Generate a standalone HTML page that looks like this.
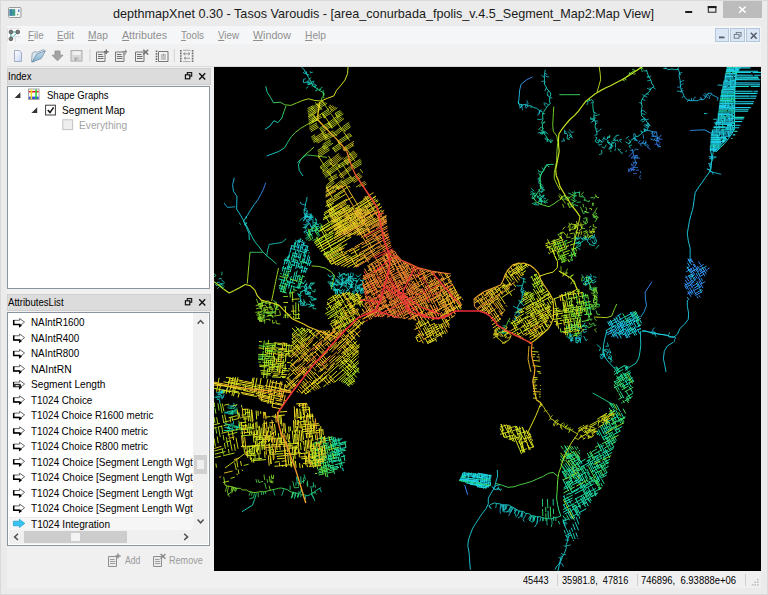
<!DOCTYPE html>
<html><head><meta charset="utf-8"><title>depthmapXnet</title>
<style>
html,body{margin:0;padding:0;}
body{width:768px;height:595px;overflow:hidden;background:#ebebeb;font-family:"Liberation Sans",sans-serif;position:relative;}
.abs{position:absolute;}
.t{position:absolute;white-space:pre;line-height:16px;height:16px;transform-origin:0 50%;}
.mn::first-letter{text-decoration:underline;}
#frame{position:absolute;left:0;top:0;width:766px;height:593px;border:1px solid #d9d9d9;}
#menubar{position:absolute;left:7px;top:26px;width:754px;height:18px;background:#f5f6f7;}
#toolbar{position:absolute;left:7px;top:44px;width:754px;height:22px;background:#f1f1f1;border-bottom:1px solid #dadada;}
#client{position:absolute;left:7px;top:67px;width:754px;height:521px;background:#f0f0f0;}
#map{position:absolute;left:214px;top:67px;width:547px;height:504px;background:#000;overflow:hidden;}
.docktitle{position:absolute;left:7px;width:202px;height:15px;background:#dcdcdc;border:1px solid #cfcfcf;}
.box{position:absolute;background:#fff;border:1px solid #8c93a0;}
.row{position:absolute;left:0;width:184px;height:16px;}
.rt{position:absolute;left:22px;top:0;line-height:16px;font-size:10.2px;white-space:pre;transform-origin:0 50%;color:#000;}
#status{position:absolute;left:7px;top:571px;width:754px;height:17px;background:#f0f0f0;}
.sep{position:absolute;top:574px;width:1px;height:12px;background:#d0d0d0;}
.mdib{position:absolute;top:28px;height:14px;background:#dbe7f4;border:1px solid #b4c6dc;box-sizing:border-box;}
</style></head><body>
<div id="frame"></div>
<!-- title bar -->
<svg class="abs" style="left:8px;top:7px" width="14" height="12" viewBox="0 0 14 12"><rect x="0.5" y="0.5" width="12.5" height="10" rx="1" fill="#f4f4f4" stroke="#9a9a9a"/><rect x="1.6" y="2.2" width="5.6" height="6.6" fill="#3f9a8c"/><rect x="1.6" y="2.2" width="2.2" height="6.6" fill="#3c7fb0"/><rect x="10.2" y="2.5" width="1.2" height="2.5" fill="#2f6fd0"/><rect x="9" y="7" width="1.2" height="1.2" fill="#5aa05a"/></svg>
<div class="abs" style="left:723px;top:1px;width:39px;height:17px;background:#bcbcbc"></div>
<svg class="abs" style="left:680px;top:0" width="88" height="22" viewBox="0 0 88 22">
<rect x="5.2" y="11" width="7" height="2" fill="#1a1a1a"/>
<rect x="28.3" y="6.6" width="7.6" height="5.6" fill="none" stroke="#1a1a1a" stroke-width="1"/><rect x="27.8" y="6.1" width="8.6" height="2" fill="#1a1a1a"/>
<path d="M59.2 6.8 L65.6 12.6 M65.6 6.8 L59.2 12.6" stroke="#fff" stroke-width="1.5" fill="none"/>
</svg>
<!-- menubar -->
<div id="menubar"></div>
<svg class="abs" style="left:7px;top:26px" width="16" height="18" viewBox="0 0 16 18"><path d="M0 2.3 H13.6 V10.4 H8 V16 H0 Z" fill="#fdfdfd"/><path d="M0.4 16 V2.7 H13.6" stroke="#d4d4d4" fill="none" stroke-width="0.8"/><path d="M8.2 16 V10.6 H13.6" stroke="#cfcfcf" fill="none" stroke-width="0.8"/><path d="M3.9 6 L10.8 6 L3.9 12.9 Z" stroke="#2aa89a" stroke-width="0.9" fill="none"/><circle cx="3.9" cy="6" r="1.9" fill="#7a7a7a" stroke="#4a4a4a" stroke-width="0.7"/><circle cx="10.8" cy="6" r="1.9" fill="#7a7a7a" stroke="#4a4a4a" stroke-width="0.7"/><circle cx="3.9" cy="12.9" r="1.9" fill="#7a7a7a" stroke="#4a4a4a" stroke-width="0.7"/></svg>
<div class="mdib" style="left:715px;width:14px"></div><div class="mdib" style="left:730px;width:15px"></div><div class="mdib" style="left:746px;width:14px"></div>
<svg class="abs" style="left:715px;top:28px" width="46" height="14" viewBox="0 0 46 14">
<rect x="4" y="8.5" width="5.5" height="1.8" fill="#55606e"/>
<rect x="21.2" y="4.4" width="4.8" height="3.8" fill="none" stroke="#6a7480" stroke-width="0.9"/><rect x="19.2" y="6.4" width="4.8" height="3.8" fill="#dbe7f4" stroke="#6a7480" stroke-width="0.9"/>
<path d="M35.8 4.8 L41.6 10.6 M41.6 4.8 L35.8 10.6" stroke="#55606e" stroke-width="1.5" fill="none"/>
</svg>
<!-- toolbar -->
<div id="toolbar"></div>
<svg class="abs" style="left:7px;top:44px" width="200" height="23" viewBox="0 0 200 23">
<defs><linearGradient id="gdoc" x1="0" y1="0" x2="1" y2="1"><stop offset="0" stop-color="#fff"/><stop offset="1" stop-color="#c8d6f4"/></linearGradient>
<linearGradient id="gfold" x1="0" y1="0" x2="0" y2="1"><stop offset="0" stop-color="#c9dcec"/><stop offset="1" stop-color="#7fb0cf"/></linearGradient></defs>
<!-- new -->
<path d="M7.5 6.5 H12.5 L14.5 8.5 V17.5 H7.5 Z" fill="url(#gdoc)" stroke="#9aa6bd" stroke-width="0.9"/>
<!-- open -->
<path d="M24.5 17.8 L25.2 9.2 L28 7.6 L30.5 8.3 L36.8 5.6 L37.6 7.2 L27 17.6 Z" fill="#dfe9f2" stroke="#7f97aa" stroke-width="0.8"/>
<path d="M25 18 L29.5 10.2 L38.4 6.9 L34.2 14.6 Z" fill="url(#gfold)" stroke="#6d8fa8" stroke-width="0.8"/>
<!-- down arrow -->
<path d="M48 7 H53 V11.2 H56 L50.5 16.8 L45 11.2 H48 Z" fill="#a3a3a3" stroke="#8e8e8e" stroke-width="0.8"/>
<!-- save -->
<rect x="64" y="6.5" width="11" height="10.6" fill="#dadada" stroke="#a8a8a8" stroke-width="0.9"/><rect x="65.5" y="7.3" width="8" height="3.6" fill="#f2f2f2"/><rect x="67" y="13" width="5" height="4" fill="#c4c4c4"/><rect x="68" y="14" width="1.2" height="2.4" fill="#9a9a9a"/>
<rect x="82.5" y="5" width="1" height="13" fill="#d4d4d4"/>
<!-- doc icons -->
<g stroke="#777" stroke-width="1" fill="none">
<path d="M89.5 8 H98 V17.5 H89.5 Z" fill="#ececec"/><path d="M91 10.5 H95.5 M91 12.5 H96.5 M91 14.5 H96.5" stroke="#707070" stroke-width="1.2"/><path d="M99.3 5.5 V10 M97 7.8 H101.6" stroke="#6e6e6e" stroke-width="1.4"/>
<path d="M108.5 8 H117 V17.5 H108.5 Z" fill="#ececec"/><path d="M110 10.5 H114.5 M110 12.5 H115.5 M110 14.5 H115.5" stroke="#707070" stroke-width="1.2"/><path d="M115.5 7.5 H119.5 M118 5.8 L120 7.5 L118 9.2 M116 10 H119" stroke="#8a8a8a" stroke-width="1"/>
<path d="M128.5 8 H137 V17.5 H128.5 Z" fill="#ececec"/><path d="M130 10.5 H134.5 M130 12.5 H135.5 M130 14.5 H135.5" stroke="#707070" stroke-width="1.2"/><path d="M136.3 5.8 L141.2 10.6 M141.2 5.8 L136.3 10.6" stroke="#6e6e6e" stroke-width="1.4"/>
<path d="M151.5 7.5 H161 V17.5 H151.5 Z" fill="#f4f4f4"/><rect x="153.6" y="10" width="5.4" height="5.6" fill="#dedede" stroke="none"/><path d="M149.5 6.5 V18" stroke="#666" stroke-dasharray="1.6 1" stroke-width="1.6"/><path d="M154 11 H159 M154 13 H159 M154 15 H159 M156.5 9.4 V12" stroke="#9a9a9a" stroke-width="0.8"/>
<path d="M173.8 6 V18 M185.6 6 V18" stroke="#666" stroke-dasharray="1.6 1" stroke-width="1.6"/><path d="M176 6.3 H183.5 M176 17.6 H183.5" stroke="#999" stroke-width="0.8"/>
<path d="M176.5 9.8 H183 M178.2 8.4 L176.5 9.8 L178.2 11.2 M181.4 8.4 L183 9.8 L181.4 11.2 M177 14.2 H183 M178.8 12.8 L177 14.2 L178.8 15.6" stroke="#8a8a8a" stroke-width="0.9"/>
</g>
<rect x="166.8" y="5" width="1" height="13" fill="#d4d4d4"/>
</svg>
<!-- client -->
<div id="client"></div>
<div class="docktitle" style="top:68px"></div>
<div class="docktitle" style="top:294px"></div>
<svg class="abs" style="left:180px;top:68px" width="30" height="17" viewBox="0 0 30 17"><g id="dockbtn"><rect x="7.3" y="4.6" width="4.4" height="3.6" fill="none" stroke="#111" stroke-width="1.1"/><rect x="5.4" y="6.8" width="4.4" height="4" fill="#dcdcdc" stroke="#111" stroke-width="1.2"/><path d="M19.2 5.2 L25.2 11.4 M25.2 5.2 L19.2 11.4" stroke="#111" stroke-width="1.4" fill="none"/></g></svg>
<svg class="abs" style="left:180px;top:294px" width="30" height="17" viewBox="0 0 30 17"><use href="#dockbtn"/></svg>
<div class="box" style="left:7px;top:86px;width:201px;height:201px"></div>
<!-- tree icons -->
<svg class="abs" style="left:8px;top:87px" width="130" height="46" viewBox="0 0 130 46">
<path d="M12.4 5.2 V11 H6.6 Z" fill="#333"/><path d="M29.2 20.3 V26.1 H23.4 Z" fill="#333"/>
<rect x="20.5" y="2" width="10.6" height="10.4" fill="#fff" stroke="#9a9a9a" stroke-width="0.9"/>
<rect x="21" y="9.6" width="9.6" height="2.4" fill="#3a4adf"/><rect x="21" y="3.9" width="9.6" height="1.6" fill="#e82020"/><rect x="22.6" y="2.4" width="1.5" height="9.6" fill="#e8e020"/><rect x="27.3" y="2.4" width="1.5" height="9.6" fill="#20d030"/>
<rect x="37.6" y="18.2" width="9.8" height="9.8" fill="#fff" stroke="#3c3c3c" stroke-width="1"/>
<path d="M39.8 23 L42 25.6 L45.6 20.4" stroke="#111" stroke-width="1.5" fill="none"/>
<rect x="54.8" y="32.8" width="9.8" height="9.8" fill="#efefef" stroke="#c4c4c4" stroke-width="1"/>
</svg>
<div class="box" id="listbox" style="left:7px;top:312px;width:201px;height:232px"></div>
<div class="abs" id="listview" style="left:9px;top:313px;width:184px;height:217px;overflow:hidden;background:#fff">
<div class="abs" style="left:0;top:203.5px;width:184px;height:14px;background:#f6f6f6;border-top:1px solid #ececec"></div>
<svg class="abs" style="left:0;top:0" width="24" height="217" viewBox="0 0 24 217">
<defs><g id="arw"><path d="M4.6 6.8 H10.6 V5 L15.6 8.6 L10.6 12.6 V11 H4.6 Z" fill="#fff" stroke="#555" stroke-width="0.9"/><path d="M4.7 6.6 V11.1 H10.7 V12.8 L12.4 11.6" fill="none" stroke="#000" stroke-width="1.5"/></g></defs>
<use href="#arw" y="0.5"/><use href="#arw" y="15.97"/><use href="#arw" y="31.44"/><use href="#arw" y="46.9"/>
<g transform="translate(0,62.4)"><use href="#arw"/><rect x="5.2" y="7.1" width="5.6" height="1.5" fill="#cfcfcf"/><path d="M4.4 8.6 H11.6 L12.6 11.4 L10.8 12.9 V11.6 H4.4 Z" fill="#2e2e2e"/><rect x="6.6" y="9.7" width="3.2" height="1.1" fill="#e6e6e6"/></g>
<use href="#arw" y="77.85"/><use href="#arw" y="93.3"/><use href="#arw" y="108.8"/><use href="#arw" y="124.3"/><use href="#arw" y="139.7"/><use href="#arw" y="155.2"/><use href="#arw" y="170.7"/><use href="#arw" y="186.1"/>
<path transform="translate(0,201.6)" d="M4.4 6.6 H10.4 V4.6 L15.8 8.8 L10.4 13 V11.2 H4.4 Z" fill="#38c2f0" stroke="#1e9ed0" stroke-width="0.7"/>
</svg>
<div class="row" style="top:2.4px"><span class="rt" style="transform:scaleX(0.9640)">NAIntR1600</span></div>
<div class="row" style="top:17.9px"><span class="rt" style="transform:scaleX(0.9670)">NAIntR400</span></div>
<div class="row" style="top:33.3px"><span class="rt" style="transform:scaleX(0.9670)">NAIntR800</span></div>
<div class="row" style="top:48.8px"><span class="rt" style="transform:scaleX(1.0099)">NAIntRN</span></div>
<div class="row" style="top:64.3px"><span class="rt" style="transform:scaleX(0.9951)">Segment Length</span></div>
<div class="row" style="top:79.8px"><span class="rt" style="transform:scaleX(0.9663)">T1024 Choice</span></div>
<div class="row" style="top:95.2px"><span class="rt" style="transform:scaleX(0.9642)">T1024 Choice R1600 metric</span></div>
<div class="row" style="top:110.7px"><span class="rt" style="transform:scaleX(0.9654)">T1024 Choice R400 metric</span></div>
<div class="row" style="top:126.2px"><span class="rt" style="transform:scaleX(0.9654)">T1024 Choice R800 metric</span></div>
<div class="row" style="top:141.6px"><span class="rt" style="transform:scaleX(0.9817)">T1024 Choice [Segment Length Wgt]</span></div>
<div class="row" style="top:157.1px"><span class="rt" style="transform:scaleX(0.9817)">T1024 Choice [Segment Length Wgt] R1600 metric</span></div>
<div class="row" style="top:172.6px"><span class="rt" style="transform:scaleX(0.9817)">T1024 Choice [Segment Length Wgt] R400 metric</span></div>
<div class="row" style="top:188.0px"><span class="rt" style="transform:scaleX(0.9817)">T1024 Choice [Segment Length Wgt] R800 metric</span></div>
<div class="row" style="top:203.5px"><span class="rt" style="transform:scaleX(0.9892)">T1024 Integration</span></div>
</div>
<!-- vertical scrollbar -->
<div class="abs" style="left:193px;top:313px;width:15px;height:217px;background:#f0f0f0"></div>
<div class="abs" style="left:194px;top:455px;width:13px;height:19px;background:#d0d0d0"></div>
<div class="abs" style="left:197px;top:460px;width:7px;height:9px;background:#efefef"></div>
<svg class="abs" style="left:193px;top:313px" width="15" height="217" viewBox="0 0 15 217"><path d="M4.6 10.8 L7.6 7.6 L10.6 10.8 M4.6 206.6 L7.6 209.8 L10.6 206.6" stroke="#505050" stroke-width="1.5" fill="none"/></svg>
<!-- horizontal scrollbar -->
<div class="abs" style="left:9px;top:530px;width:199px;height:14px;background:#f0f0f0"></div>
<div class="abs" style="left:24px;top:531px;width:103px;height:12px;background:#cdcdcd"></div>
<div class="abs" style="left:71px;top:533px;width:9px;height:8px;background:#f4f4f4"></div>
<svg class="abs" style="left:9px;top:530px" width="199" height="14" viewBox="0 0 199 14"><path d="M9 3.8 L5.6 6.9 L9 10 M175.2 3.8 L178.6 6.9 L175.2 10" stroke="#505050" stroke-width="1.5" fill="none"/></svg>
<!-- add/remove icons -->
<svg class="abs" style="left:106px;top:552px" width="64" height="18" viewBox="0 0 64 18"><g stroke="#8e8e8e" fill="none" stroke-width="1">
<path d="M2.5 4.5 H10.5 V14.5 H2.5 Z" fill="#ececec"/><path d="M4 7.5 H8.5 M4 9.5 H9.3 M4 11.5 H9.3" stroke="#9c9c9c"/><path d="M12 1.6 V6.4 M9.6 4 H14.6" stroke="#8a8a8a" stroke-width="1.4"/>
<path d="M47.5 4.5 H55.5 V14.5 H47.5 Z" fill="#ececec"/><path d="M49 7.5 H53.5 M49 9.5 H54.3 M49 11.5 H54.3" stroke="#9c9c9c"/><path d="M54.6 2 L59.4 6.8 M59.4 2 L54.6 6.8" stroke="#8a8a8a" stroke-width="1.4"/>
</g></svg>
<!-- map -->
<div id="map"><svg width="547" height="504" viewBox="214 67 547 504" fill="none" stroke-linecap="butt" stroke-linejoin="round" style="position:absolute;left:0;top:0">
<path stroke="#416bf5" stroke-width="0.75" d="M657.5 144.2l-3.3 0M632.8 168.5l1.7 1.5"/>
<path stroke="#3f71f5" stroke-width="0.75" d="M628.5 168.3l1.2 2.3l-1.4 1.4M634.8 167.5l-4 0.5l0.7 2.6M633.4 173.5l3.5 0.1"/>
<path stroke="#3d77f5" stroke-width="0.75" d="M657.7 145.8l2.4 0.5M657.1 140.9l3.3 1.6M632.4 150.1l-2.3 0.7M634 155.2l-2.9 2.6M633.1 152.5l-2.5 1.8l-1.6 2.5"/>
<path stroke="#3b7df5" stroke-width="0.75" d="M656.8 138.3l3.2 0.6l2.4 0.6M657.1 140.9l1.9 -0.6l0.5 -2.1M636.5 162.9l-2.6 -0.1l-1.2 2.2M632.8 169.1l2.5 0.6M630.9 168.8l3.4 2.1"/>
<path stroke="#3883f5" stroke-width="0.9" d="M263.5 189l2.2 -6.2M652 281.6l-3.5 5.4"/>
<path stroke="#3883f5" stroke-width="1.0" d="M464.8 485l2.8 9.8M698.5 261.5l2.1 3.4M694 263.9l5 8M690 258.7l1.7 3.1M695.3 275.6l1.9 3.1M698.9 295.3l1.3 2.1M689.2 282.1l3.3 6.1M693.1 289.2l3 5.5M692.6 291.2l-5.3 2.9M695.7 284.4l-4.2 2.3M709.5 268l-2.3 1.4M691.2 259.1l-3.6 2.1"/>
<path stroke="#3883f5" stroke-width="0.85" d="M656.7 142.8l1 3.2M634.8 166.3l-1.7 2.2l-2.3 3"/>
<path stroke="#3883f5" stroke-width="0.75" d="M655.5 131.9l-1.7 2.6M657.6 145.5l2.6 -1.9M634.3 166.3l-2.6 -0.8l-0.2 -2M634.3 156l1.7 -0.7l1.9 1.2M634.9 157.9l-3.9 0.1M639.1 170l-3.1 0.3"/>
<path stroke="#368bf4" stroke-width="1.0" d="M464.8 485M700.4 268.5l4.6 7.7M691 259l2.4 3.9M692.7 267.1l2.6 4.7M690.6 268l4.2 6.8M698.5 280.7l4.5 7.4M689.4 268.9l4.3 7.2M694.3 277.1l1.6 2.7M690 280.9l2.4 3.8M685.7 275.7l3.1 5.6M685.2 279.7l3.4 5.9M684.7 283.1l4.1 6.6M687.6 290.9l3.4 5.9M701.9 291.8l-6.5 3.7M705.3 281.5l-5.4 3.2M689.6 282.6l-4.5 2.6M705.1 270.6l-5.8 3.5M692.3 268.2l-6.1 3.6M689.1 266.9l-2.4 1.5"/>
<path stroke="#368bf4" stroke-width="0.9" d="M648.5 287l-3.3 5.1M690 130.5l7.4 -0.4M526.6 79.8l6 -2.9"/>
<path stroke="#368bf4" stroke-width="0.85" d="M657 135.7l0.2 4l-0.5 3.1M634.3 158l1.3 3.5l1.1 1.6l-1.9 3.2"/>
<path stroke="#368bf4" stroke-width="0.75" d="M656.5 136.1l-2.9 0.1l-1.8 -1.5M640.2 171l0.7 2.4M635 167.6l3.2 0.1M640.5 175.2l-1 2.5l1.7 1.6M631.2 168.6l-3 1.4l1.1 1.9M640.2 140.2l-1.6 2.6l1.4 1.7M647.6 146.7l2.9 3.2M649.3 145.1l-2.1 1.9l1.3 1"/>
<path stroke="#3294f3" stroke-width="0.9" d="M260.6 194.7l2.9 -5.7M645.2 292.1l0.2 6.7"/>
<path stroke="#3294f3" stroke-width="1.0" d="M704.9 268.1l2.1 3.5M697.4 266.1l4.2 7M700.8 277.8l1.7 3M698.3 277.2l3.6 6.3M696.7 281.3l3.6 6M689.4 275l2.1 3.5M692.3 279.8l1.9 3M689.6 287.3l3.6 6.3M689.3 290.4l2.7 4.4M684.6 285.6l2.2 3.7M701 286.6l-7.2 4M703.9 274.2l-4.7 2.8M703.7 264.3l-4.5 2.8"/>
<path stroke="#3294f3" stroke-width="0.85" d="M656.5 131.9l0.5 3.8M632.9 151.9l0.7 2.5l0.7 3.6"/>
<path stroke="#3294f3" stroke-width="0.75" d="M656.5 136.4l-3.4 0l-1.8 -0.2M656.7 138.1l3.4 -1.5l1.1 -1.9M634.7 157.4l3.3 0.5l2.2 0.5M636.4 162.8l-3.8 -0.9M634.6 157.1l3.4 -1.9M634.8 157.8l3.3 0.5M640.5 143.2l0.7 3.2M641.9 142.1l2.7 1.8"/>
<path stroke="#2f9df1" stroke-width="0.9" d="M258 199.5l2.6 -4.8M645.4 298.8l1.1 6.7M697.4 130.1l7.3 -0.2M521.1 84.2l5.5 -4.4"/>
<path stroke="#2f9df1" stroke-width="1.0" d="M701.6 266.5l4.7 7.6M693 263.9l1.9 3.4M687.9 258.5l3.6 6.4M696.1 273.1l1.8 3.4M701.5 289.3l0.8 1.4M688.6 275.8l4.4 7.5M697 296.3l1.1 2M701.3 289.9l-6.7 4.1M698.3 285.7l-4.7 2.7M691.5 284.2l-4.4 2.7M697.7 268l-6.9 4.2M615.1 328.8l-9.2 4.6"/>
<path stroke="#2f9df1" stroke-width="0.85" d="M653.1 131.9l3.4 0M632 149l0.9 2.9"/>
<path stroke="#2f9df1" stroke-width="0.75" d="M652.9 131.5l-2 2.4M632.9 151.7l2.9 -2.7l2.7 0.8M643.1 134.4l0.6 4.4M650.5 138.6l1.6 1.4"/>
<path stroke="#2ca6ef" stroke-width="1.0" d="M695.9 269.1l4.1 7.1M687.4 262.8l2.5 4M613.9 330.3l4.3 8.2"/>
<path stroke="#2ca6ef" stroke-width="0.9" d="M646.5 305.5l-2.3 6.1M704.7 129.9l6.6 3.5"/>
<path stroke="#2ca6ef" stroke-width="0.85" d="M650.2 130.8l2.9 1.1"/>
<path stroke="#2ca6ef" stroke-width="0.75" d="M652.6 131.5l-0.3 2.8l1.7 1.2M661 146.4l-3.4 0.6M655.5 137.8l-1.8 2.7l-1.9 -2.1M645.9 140.6l-1 4.8l3.1 -0.6M706.1 96.5l2.3 1.4"/>
<path stroke="#29afee" stroke-width="0.9" d="M254.1 204.7l3.9 -5.2M644.2 311.6l-3.5 5.4M519.7 89.9l1.4 -5.7"/>
<path stroke="#29afee" stroke-width="1.0" d="M686.6 277.1l-1.2 0.6"/>
<path stroke="#29afee" stroke-width="0.85" d="M646.4 130.5l3.8 0.3"/>
<path stroke="#29afee" stroke-width="0.75" d="M643.9 140.3l-1.5 3.4l-1.5 -0.5M646.9 142.6l-3.6 1.3M637 139.6l-2.5 0.8l-0.7 -2.3M658 137l-1.5 3.8l-1.8 -0.6M701.7 99.7l-1.5 -2.5M702.6 99.7l-1.8 -2.2M709 92.7l-1.8 1.7l-2.9 -0.7M680.4 87.2l-3.2 -0.2M692.9 100.5l1.6 -3.1l1.3 -0.3"/>
<path stroke="#25b8ec" stroke-width="0.9" d="M232.6 184.7l1.7 -7"/>
<path stroke="#25b8ec" stroke-width="0.8" d="M227.3 207.4l-3.3 -4.4"/>
<path stroke="#25b8ec" stroke-width="1.0" d="M687.3 297.2l1.6 2.7M706.6 266.2l-6.3 3.4M691.4 274.4l-3.8 2.1M619.6 321.2l4.5 9M615.8 316.6l3.2 6.1M618.5 326.2l4.7 8.3M610.3 320l3.7 7.6M615.5 334.2l-4.2 2.3M625.2 323.8l-8 4M623 322.9l-7 3.6M623.7 317.5l-4.9 2.7"/>
<path stroke="#25b8ec" stroke-width="0.75" d="M651.7 332.6l1.5 -3.1l1.4 -2M714.4 146.5l2.2 0.8M712.8 157.1l-3.4 1.5M710.2 170.4l-3.3 -1.4M712.9 156.3l-2.6 0.3l-1.8 -0.3M711.7 94.2l-2.3 2.4l0.4 2.3M679.2 74.4l1.9 0.3M680.2 85.5l2.1 -1.3l1.3 -0.4M705.7 97.2l-2.9 -2.7M718 97.8l-0.6 2.9M682 92l-1.7 -0.1M691.4 100.7l0.2 -2.7M681.7 91l1.6 -0.4"/>
<path stroke="#25b8ec" stroke-width="0.85" d="M711 93l1.8 2.4l2.6 1l3 1.6"/>
<path stroke="#22c1ea" stroke-width="0.9" d="M233.5 191.3l-0.9 -6.6M250.5 210.2l3.6 -5.5M690.2 255.4l-0.2 7.6M736.5 71.5l0.2 2.4M729.5 67l0.2 3.7M725.3 74l0.7 7.9M729.3 115.9l0.6 5.9M728.1 130.8l0.6 6M718.8 123.4l0.4 6.8M716.5 126.6l0.5 5.3M713.8 122.9l1.8 0M519.1 97.1l0.6 -7.2"/>
<path stroke="#22c1ea" stroke-width="0.8" d="M235.2 206.8l-7.9 0.6"/>
<path stroke="#22c1ea" stroke-width="0.75" d="M304.9 217.4l-1.8 4.1M307.8 221.2l4.4 -1.8M489.1 505.8l1.2 2.4M500.7 504.2l-0.7 6l0.5 3.4M559.2 562.7l3.3 1.5l0.9 2.5M562.9 556.7l-2.4 -0.8M654.5 333.1l-0.9 -2.3M712.8 156.9l-2.9 0.2M711.3 164.7l-3.4 -1.6M712.8 156.7l3.8 0.3M545 73.2l2.4 1.4M522.9 104.6l-1.9 2.7l-1.3 0.3M539.9 110.6l-0.6 3.1l-2 1.5M525.5 105.1l-0.3 2.7M518.6 103.7l-0.6 -2M521.5 104.3l0.7 3.8l0.5 2.1M635.3 137.6l0.1 1.6M646.7 129.8l-2.4 -0.7M688.9 100.9l0.3 -2.2M665.4 68.6l0.6 -2.4M707.2 94.6l1.9 1.6"/>
<path stroke="#22c1ea" stroke-width="1.0" d="M691.1 273.9l4 7.2M621.6 321.4l2.8 5.5M624.7 331.4l3.3 6.6M624.5 333.4l2.4 4.7M613.7 317.9l4.3 7.5M615 329.6l1.9 3.9M608.8 320.9l3.9 7.3M609.9 329.6l4.4 7.8M611.2 332.9l-3.8 1.9M621.3 313.7l-4.4 2.6"/>
<path stroke="#22c1ea" stroke-width="0.85" d="M697.1 100.7l3.2 -1.2l2.6 0.1l1.9 -0.9l1.6 -2.9l1.8 -2.1l2.8 -0.7"/>
<path stroke="#1fcae9" stroke-width="0.75" d="M315.3 84.2l-0.2 4M310.9 226.6l4.4 -1.8l1.2 -0.5M305.4 205l-4.5 -1.2l-0.5 -1.8M305.5 218.1l1.1 -1.3l-0.5 -1.3M518.7 311.9l-2.3 0.9l-1.7 2.4M503.3 504.7l-0.8 2.4M512.7 507.4l-1.9 4.7l-2.2 3.8M507.2 505.5l-1.5 4.2M503.3 504.7l-0.3 6.1M567.7 540.5l-2.7 -0.7M675.9 338l-1.4 1.3l-0.3 3M712.4 158.7l3.5 -1.5M710.2 170.7l2.3 1.4l0.7 2.6M544.7 75.5l2.8 1.4l1.7 0M528.2 105.6l-2.1 2.9M539.5 110.4l-0.7 3.9M525.7 105.1l1.9 -2.4l-0.8 -2.3M540.8 111.1l0.2 -1.7M526.9 105.4l1.8 -2M634.6 138l1.1 2.1l2.5 0.9M646.1 119.9l2.6 -0.9M642 110.4l2.2 0.7l2.3 2.1M648.1 125.9l-1.9 -0.8M642 99.3l3.4 1.3M634.1 138.3l-0.3 -3l0.3 -2.1M648.7 124.2l1.7 1.5M648.5 122.9l-0.7 2M677.3 69.7l1.2 -2.3M683.6 95.8l-1.6 2.2M688.4 100.6l-1.5 1.3M679.9 82.4l2.2 -1.3l2.1 -0.7M706.3 96.1l-1.8 -0.3M681.2 89.5l1.5 -1.6"/>
<path stroke="#1fcae9" stroke-width="0.9" d="M236.8 203.4l0.1 -7.1l-3.4 -5M247.1 215.7l3.4 -5.5M690.1 248.2l0.1 7.2M687.3 300l0.1 6.6M664.8 365.3l1.2 6.7M737.3 67l0.6 4.9M732.9 67l0.3 5.4M729.8 71.7l0.3 5M730.2 78.4l0.5 8.1M728.7 110l0.5 5.1M719.3 131.6l0.2 4.2M716.1 121.7l0.4 4.1"/>
<path stroke="#1fcae9" stroke-width="0.8" d="M235.2 206.8M246.2 216.2l0.5 2.2M608.9 356.3l-0.7 1.9l3.1 0.7M606.5 349.8l-2.8 0.2M603.6 356.6l-2.1 2.5l-1.6 -3.3"/>
<path stroke="#1fcae9" stroke-width="1.0" d="M488.8 481.8l-0.8 5.5M481.6 473.8l-0.9 7.6M473.8 472.9l-0.8 6.3M470.1 482.5l-0.2 1.7M464.8 471.8l-1.1 8.1M631.6 318.5l4.8 9M629 318.1l4 7M625.8 322.3l5.2 9.4M626.3 326.7l3.7 7.4M625.3 328.7l4.4 8.7M617.1 326.6l4 8M636.4 330.7l-8.7 4.3M632.4 327.7l-6.9 3.5M632 322.7l-10.3 5.1M639.7 316.6l-4.5 2.2"/>
<path stroke="#1fcae9" stroke-width="0.85" d="M682.8 92.6l0.9 2.9l2.1 3.1l2 1.5l2.6 0.6l3.5 -0.1l3.2 0.1"/>
<path stroke="#1ecfe4" stroke-width="0.75" d="M307.2 72.5l-2.8 1.3l-1.3 -1.8M305.8 78.6l-2.2 0.7l-0.1 2.4M310 80.8l-2.4 1.6M308.6 222.2l-3.3 2.9l-1.9 -0.8M306.9 219.9l4.1 -0.9l2.2 -2.3M304.6 216.9l2.1 -4l0.7 -2.7M518.4 309.4l3.5 -0.9M518.3 308.6l2.7 1.1M522.3 295.1l2.6 -2M521.5 291.9l3 -1.1M521.1 289.4l3.3 1.4M517 509.6l-2.6 3.6M522.3 511.9l-2.2 4.9l-2.1 1.2M515.1 508.6l-0.8 2.3M563.9 554.4l2 0.4M564.3 524.2l3.1 -0.6M655 333.1l1.1 3.8M651.1 332.5l1 -1.2M668.2 336.1l1.4 -3.8M712.3 159.7l-3.2 -1.7M710.8 167.3l-1.6 -1.1l0.8 -3M597 134.7l-2.6 0.6M604.5 136.6l-2.1 3.8M615.6 142.9l-0.1 4.6M603.6 138l2.7 1.7l1.6 -1.9M598.5 139.7l3.3 1.8l-1 1.3M614.6 136.8l0.7 2.5l-2.8 1.7M627.1 150.6l-1.7 1.1M642 103.7l-2.8 -1.2M644.8 131.5l-1 -2.9M645.2 118.9l-3.8 0.6M648.5 124.8l1.9 1.1M643 132.7l-2.5 -1.7M650.5 89.6l-0.6 -2.1M644.4 95.7l-2.1 -1.1M636.4 136.9l-1.7 -3.3M681.8 91.5l-2.6 -0.2l-2.3 -0.2"/>
<path stroke="#1ecfe4" stroke-width="0.9" d="M236.6 209.1l0.2 -5.7M469.5 557.8l0.3 5.9l0.6 5.9M687.3 233.6l1 7.3l1.8 7.3M687.4 306.6l1.2 6.5l-0.3 6.1l-3.5 4.8l-4.7 4.3l-2.6 5.7l-4.2 3.6M673.2 342.3l-6 3.8l-2.9 5.2l-0.9 7.4l1.4 6.6M606.8 331M734.3 92.6l0.3 4.8M731.8 103.6l0.5 9.1M727.1 93l0.4 4.2M723.6 81.8l0.1 1.3M724.7 93.8l0.5 5.1M727.5 124.7l0.5 5M718.2 112.9l0.5 8.7M712.4 129.8l0.4 5.6M717.6 85.1l5.2 0.1M518.4 103.7l0.7 -6.6"/>
<path stroke="#1ecfe4" stroke-width="0.8" d="M243.9 224.3l1.9 0.3l0.2 -2.6M310 214.6l3.8 3.6M312.8 226.5l-2.3 5.3M302.5 227.6l4.8 0.2M312.4 216.1l-5.6 0.4M307.2 230l-3.5 2l1.8 1.5M315.1 217.9l1.8 2.8M301.5 239.2l-3.8 3l-2.6 -2.3M342.3 275.7l-0.3 2.5l1.8 0.1M216.1 392.6l5.7 0.6l0.7 -3.3M576.9 325.6l-5.1 0.4l-0.6 4M578 338.1l2.4 1l0.1 3.9M580.1 337.5l-4.2 1.3l0 -1.8M581.8 336.2l-3.1 3.9M570.6 327l-2.5 1.4M573.7 338.1l-2 1.3M589.9 276.4l0.8 3.5M588.8 277.7l-1.3 2.3M499.9 484.9l-4.2 0.8l-0.2 1.4M498.5 486.8l0.1 2.3l-2.2 0.7M608.5 351.6l-2.1 3.3l1.4 0.6M604.9 355.3l-2.7 1.7M602.4 354.1l3.7 4.2M609.9 350.5l1 3.1M710 171.5l11.2 2.8"/>
<path stroke="#1ecfe4" stroke-width="1.0" d="M487.4 474.5l-0.9 7.8M485.3 474.2l-1.1 8.8M686.9 266.6l3.5 6.2M699.5 288.7l2.2 3.8M630.2 312.1l4.4 8.9M637.2 329l2.6 4.8M633.7 326.2l3 5.5M627.3 318.6l4 7.2M623.4 321l1.9 3.6M618.3 315l2.9 5.6M619.8 324.3l4 7.7M614.7 325.9l2.8 5.3M607.5 321.7l2.4 4.3M626.2 333l-3.9 2.2M623.5 332.2l-5 2.6M625.8 328.6l-9 4.9M631.3 313.5l-6.2 3.3M618 320.6l-6.9 3.7"/>
<path stroke="#1ecfe4" stroke-width="0.85" d="M676 338l-2.6 -1.4M715 143l-0.2 3.7l-1.4 2.6l-0.2 3l-0.7 4l0.2 3.1l-1.6 3.1l0.1 2.2l0 3.6l-1.2 3.2M679.6 73l-0.6 2.4l0.7 3.1l0.5 2.3l0.1 3.5l0.3 3.1l1 3.4l1.2 1.8"/>
<path stroke="#1ecfe4" stroke-width="0.95" d="M710 149l1.7 6.2l0.1 5.6l-1.1 6.1l-1.1 5l-4 5.4l-3.2 4.7l-3.4 4.7l-3.7 5.6l-0.9 5.4l-0.8 6.3l-1 5.5l-1.8 6l-1.4 5.9l-1.1 6l-1 6.2"/>
<path stroke="#1dd2de" stroke-width="0.85" d="M301.4 67M488.8 506M673.4 336.6l-3.9 0.6l-2.5 -2l-2.9 -0.5l-3.9 -0.4l-2 -0.1l-3.2 -1.5l-3.3 0.5l-3.8 -1.4l-2.2 -0.9l-3.7 0.1M663.3 68.4l2.5 0.1l3.1 1.1l3.1 -0.7l2.8 0.8l3.5 -0.5l1.3 3.8"/>
<path stroke="#1dd2de" stroke-width="0.9" d="M270 126l-5 3.4M272.3 153.9l-5.7 2.1M243.7 221l-3.2 -5.8l-3.9 -6.1M243.7 221l3.4 -5.3M302 244.6l4.1 1.1M294.5 246.4l5 1.5M290.1 248.2l5.6 1.7M497.3 470l0.3 6.2l-1.8 6l-1.5 5.7l-3.2 5.3l-2.8 4.9l0 5.7l-2.3 4.9l-3.9 5l-3 4.4l-3.6 5.6l-2.8 4.5l-2.3 6.1l-2 5.7l-0.6 5.8l1.2 6.2l0.5 5.8M560.8 558l-1.4 6.5l-1.4 6.5M673.3 337.6l-5.9 -2.1l-6.3 -1.1l-6.1 -1l-6.7 -1.7l-6.3 -0.7M640.7 331M606.8 331l-1.7 6.4l-1.5 7.2M736.1 67l0.3 3.3M733.8 84l0.5 7.6M731.2 94.7l0.5 7.6M727.7 98.9l0.9 9.7M729.9 122.6l1 9.7M710.2 146.1l0.4 4.1M704 113.6l3.2 0M518.4 103.7"/>
<path stroke="#1dd2de" stroke-width="0.75" d="M304.4 216l4.6 0.5l1.6 -1M304.8 209.6l-1.7 0.4M305.1 217.6l-1.3 3.2M304.6 213.7l3.7 2.7l2.9 2.4M304.6 212.9l4.1 1.2l2.8 0.4M304.9 208.8l2.3 0M522.2 285.2l-3.4 0.8l-2.3 -0.6M518.4 309.2l2.8 1.2M510.8 506.4l-1.9 5.3l-5.3 0.2M511.8 506.9l-2.5 5.8M537.9 516.9l-1.2 6.7M537.6 516.8l0 5.8l-3 4.4M489.2 505.8l2.3 3.3M505.8 505.2l-1.9 6.4M522.3 511.9l-0.8 2.3l-0.2 2.6M526.4 513.5l-3.4 6.2l1.4 2.1M566 546.6l-2.3 -0.9M710.2 170.4l-3.1 -1.7M546.6 107.1l-2.1 -2l-0.5 -2.7M544.5 77.6l-3.1 -2.3M550.4 97.5l-2.5 -1.6l-0.7 -1.5M519 103.8l0.9 3M596.5 132l2.6 -1.4l2.2 -1.8M594.5 120.4l-2.9 1.4l-0.8 1.1M595.1 124.3l2.4 -1.3M594.6 121l3.6 0M610.5 146.3l-1.9 2.9M620 150.9l1.5 2.4l1.5 -0.5M610.2 136.7l-2.6 0.2l-0.2 2.2M615.5 148.5l-0.6 2.6M629.1 136.2l-3.3 2.5M642.3 133.1l-0.8 -2.3M650.7 80.3l-3.5 0.6M649.5 77.3l-2.8 -0.4M648.5 122.9l-1.7 0.7M648.1 125.8l-3.1 -1.1l-1.3 1M647.4 127.7l-2.7 -1.1M679.1 73.4l3.2 -1"/>
<path stroke="#1dd2de" stroke-width="0.8" d="M316.6 222.7l-3.5 0.3l-0.3 -4M309.8 230.6l0.9 4.5M307.5 214l-3.1 3.8M353.1 272.7l0 3.5l-4 0.8M353.1 286.5l-2.9 0.6l0.4 -1.9M360 288.4l-2.7 0l1 -3M348.6 274.1l-0.4 3.8M340.8 282.8l-3.5 3.1l-2.1 -1.2M335.6 277.9l1.2 4.2M335.5 281.4l-2.7 4.4M331.7 282.4l4.6 2.2M350.6 280.5l-2.1 3.4l2 1.1M351.3 283.3l-0.1 2.4l1.7 0.1M352.9 279.9l4.5 1.4l-1.9 3.1M334.7 285.2l-2.9 1.4l-0.3 -1.5M342 282.9l-1.1 4.6M359.7 289.4l-2.5 3.6l1.1 1.5M362.3 289.8l-2 1.2l0.9 3M342.3 278.7l0.7 5.2l-3.5 0.4M351.1 272.4l-1.4 5.5M350.6 277.7l3.2 2.2l-1.8 3.3M332.7 289.1l4.4 1.2l0.2 2.8M334.5 287.2l-2 1.7M352 286.4l-3.7 3.3M360.2 287.1l-3.2 0.7l1 1.6M337.9 290.4l-0.7 3.4l2.4 1M314.8 305.2l-4.5 0.6M217.9 394l3 0.6M221.4 390l4.1 1.2l2 -3.5M218.2 396l4.9 1.9l1 -3.7M581.4 338.5l-2.4 1.6M569.7 324l3.2 0.7M585.1 322.6l-2.6 4.6M571.3 335.5l-0.7 5.8M590.2 273.7l1.4 2.6l-3.3 2.2M588 276l1.2 2.6l3.1 -0.5M595.3 278.9l-1.9 2.1l-3.3 -1.5M589 237.4l-1.8 3.9l1.9 1.7M594.7 233.9l-0.8 3.5l-1.7 0.2M591.9 235.4l3.3 2.3M492.6 486.8l2.5 2.9l2.8 -1.4M497.6 488.1l3 2.4M491.5 486.4l3.6 3.3M605.5 346.2l2.9 0.1l-1.1 -3.6M569 129.6l3 2.9l1.7 -0.7M570.4 134.1l2 4.3"/>
<path stroke="#1dd2de" stroke-width="0.95" d="M289.7 253.3l2.4 -8.3M297.5 251.1l1.7 -7.2M299.9 251.2l1.8 -7.4M302 250.2l2 -8.8"/>
<path stroke="#1dd2de" stroke-width="1.0" d="M489.8 474.8l-0.9 6.1M486.4 483.3l-0.6 5.1M484.2 483.6l-0.6 5.1M472.9 480.6l-0.6 4.4M462.6 473.2l-0.5 4.5M696.3 283l2.1 3.7M694 275l-3.1 1.6M631.4 311.9l3.7 7.1M640 328.4l0.6 1.2M632.5 327.7l4.1 7.3M618 332.2l3.3 6.2M640.8 328.5l-2.8 1.3M640.9 318.4l-7.3 3.5M634.3 319.3l-8.2 4"/>
<path stroke="#1dd5d7" stroke-width="0.85" d="M301.4 67l2.4 2.1M306.7 200.1l-0.9 2.4l-0.7 4.2l-0.4 2.7l-0.7 3.1l1.1 3.1l0 2.6l2.1 2.8l2.5 2.2l1.1 3.4l1.6 2.6l0.5 2.8M517.6 307.2l0.4 3l1.3 4.2l-2.6 1.9l-1 2.5l-1.7 3.2M488.8 506l2 -1.6l3.5 -1.4l2.3 0.5l3.6 0.4l2.5 1.2M566.3 547.6l-0.6 2.4l-1.5 3.7l-1.6 2.7l-1 2.8l-1.1 2.7l-1.6 2.1l-2.2 2.3l-1.7 3.3M539.4 110.6l-2.7 -2.3l-3.1 -0.8l-2.6 -1.7l-3.1 0l-2.8 -1.3l-2.9 0.4l-3.8 -1.2M641.4 112.8l0.3 3.1l2.9 2.2l1.4 2.4l1.5 2.3l1.4 2.8l-0.9 2.3l-1.2 2.5l-3.3 1.4l-3 2.7l-2.4 1.7l-2.5 0.6l-2.6 2.1l-2.2 1.5"/>
<path stroke="#1dd5d7" stroke-width="0.75" d="M309.3 79.2l-1.1 1.3l-1.7 2.4M310.8 82.9l-3.6 0.1M314.2 80.8l-1.5 2.7l-1.1 -1.1M305.9 70.8l0.8 3.8l2.7 0.3M306.8 81.9l-3 1l-0.6 -1.9M307.7 221l-2.2 1.3M312.7 231.5l2.9 -1.9M309.5 223.3l-2.5 3l-1.4 0.2M304.8 209.9l3.3 2.3M309 222.7l-2.4 2.3l-1.4 -0.1M520.8 301.5l-1.9 -0.7M521.7 287.2l2.2 1.7M515.5 319.6l-2 -1.8M518.6 310.5l-2 1.2l-2 1M502.1 504.5l-1.6 4.3M519.6 510.8l-2.3 5.3M504.4 504.9l-1.1 5.6M533.9 516.2l-1.4 5.6M503.1 504.7l-0.2 7M540.9 517.4l-1 4M563.8 523l1.8 -0.5l1.2 -0.6M568.4 534.2l-3.1 1.5M566.4 545.4l2.3 0.1l2 -0.7M568.4 534.2l1.6 -0.9M653 332.8l-0.3 2.1M654.8 333.1l-0.8 1.9M543.3 133.2l2 -1.4M544.2 81l-2.8 0.6M550.3 97.7l2 0.3M542.4 131.8l-2.3 0.6l-2.3 0.6M542.4 118.9l-2.9 0.6l-2.3 -0.3M543.8 133.8l1.8 -0.4M521.3 104.3l-0.6 3.2l-1.4 0.5M540.7 186.3l-1.4 -0.8M596 129.2l1.6 -0.4M594 117.9l2 0.1M592.9 101.9l-2.2 1.3M610.9 141.5l2.9 2.1M622 139.2l-2.6 0.7l2 2.8M596.8 139.9l2.7 1.9M608 143.1l2.9 2.2M617.1 139.8l1.4 2.1M611.1 145.7l0 2.8l-2.2 0.9M645.2 131.3l-0.5 -2.9M649.3 76.8l2 -0.8M644.3 95.8l3 1.4M644.7 118.2l-2.1 1.4l-2 0.9M645.3 119.1l-1.7 2.6l-1.9 0M652.9 87.3l2.7 1.7M646.9 70.9l-3.6 0"/>
<path stroke="#1dd5d7" stroke-width="0.9" d="M246.4 227.4l-2.7 -6.4M307.2 246l0.9 0.3M292.7 252.7l4.9 1.4M573.3 517.6l1.2 2.9M575.9 532.5l1.5 4.3M571.3 527.7l1.4 4.1M640.7 331l-0.2 6.5l0.3 7.1M603.6 344.6l-0.4 6.4l2.1 6.7M734.7 99.3l0.2 3.4M732.4 114.5l0.6 9.6M725.3 99.9l0.4 4.8M717.1 133.5l0.7 7.3M717.9 142.8l0.6 5.7M713.3 144l0.5 7M713.2 119.3l4 -0.1"/>
<path stroke="#1dd5d7" stroke-width="0.8" d="M308 215.4l-1.3 2l-1.4 -1.1M311.1 213.3l-0.4 4.5l-4.1 -0.1M310.4 229.5l-2.9 3.2l-1.6 -0.6M316.1 229.3l-1.1 2.7M299.3 245.1l2.9 3.5M312.2 261.3l-3.5 3l-1.4 -1.5M303 266.2l-3.1 2M304.4 249l-1.3 1.7M349.4 290.9l-0.1 3.1M346.5 283l-0.4 3.2l-2.1 -0.5M351.3 277.9l5.8 0.9M362.8 283.9l-4.2 1.4M348.5 277.1l-0.2 5.3l-2.8 1M355.8 289.4l2.4 1.7l-1.1 2M354 283.5l-2.8 1.8l-3.2 -2.4M361.3 274.2l-3.3 2.8l-2.4 -2.1M350.8 277l-0.8 3.3l3 2.5M347.8 286.6l5.7 1.4M337.8 276.6l3.1 3.2l1.4 -1.1M342.5 281.1l-1.4 3.7l-2.1 -1.6M340.8 283.2l2.9 2.7M337.9 289.4l3.2 2.1M351.6 276.4l-3.3 1.1M341.1 281.5l2.5 2.6l3.8 -1.4M308.8 290.8l-1.8 2.7l0.9 1.1M307 282.6l-2.5 5.2M300.5 302.9l5.3 2.7l1.3 -1.2M301 299.1l-0.4 6l2.9 0.5M304.9 287.6l0.5 6l3.5 1.2M307.5 284.2l-2.3 1.1l1.8 1.5M218.4 392.5l4.3 0.6l-0.7 -3.6M215.8 395.9l4.3 1.3M216.6 399.1l3.1 0.8l0.1 3.7M227.8 406l6.4 -0.2l-0.5 -3M223.7 283.6l-4.3 0.6M572.8 336.6l-1.7 5.6M571.2 334.3l-2.2 4.9M583.7 336.1l2.3 4.7l1.5 -1.6M580.1 335.3l-4.9 3.1l1 1.1M574.9 326.5l4.7 1.4l-1.1 3.3M586.8 331.4l-3 1.2l-1 -2.7M577.8 332.5l-3.8 3.8M590.1 284.8l1.1 4.9l2.1 -1M585.3 236l-0.5 2.9l2.7 0.4M576.1 237.2l3.4 1.6l1.3 -2.4M592.5 236.3l-2.9 3.7M596.5 243.1l-3.3 0.6l-1.4 -3.1M610.2 348.7l-1.9 1.8l-1.9 -1.6M605.4 349l-0.8 1.9l3.4 1.6M564.6 129.8l0.1 3.9l2.6 -0.4M563.2 138.3l1.3 2.5l-3.2 0.4"/>
<path stroke="#1dd5d7" stroke-width="0.95" d="M287.3 268.7l2.5 -8.6M293.5 247.4l1.6 -5.5M296.9 246.8l2.1 -7.4M303.6 256.3l3 -11M306 263.9l2.5 -9.2M309.3 266l1.3 -4.6"/>
<path stroke="#1dd5d7" stroke-width="1.0" d="M482.9 474l-0.8 7.7M482 482.5l-0.5 5.5M480.6 482.2l-0.7 5.3M477.8 473.3l-0.6 5.6M477.1 479.9l-0.7 6.3M475.4 473l-0.7 5.1M471.3 472.6l-0.3 2.5M463.6 480.5l-0.2 1.6M635.3 311.1l3.9 7.6M636 320.7l3.3 6.3M641.3 324.6l-4.2 2.4M635.4 328l-7.5 4.1M631.3 318.7l-7.2 3.6M734.5 128.2l-2.5 5.3l-3.5 5l-3.8 4.8l-4.4 4.4l-4.3 4.3"/>
<path stroke="#1cd8d1" stroke-width="0.85" d="M303.8 69.1l1.7 3.7l1.4 1.5M307 197l-0.3 3.1M522.1 296.9l-0.1 1.8l-1.1 2.6l-2.1 3.3l-1.2 2.6M502.7 505.1l3.2 -0.4l3.5 0.5l2.4 1.5l3.2 1.9M565.1 526.6l1.8 3.6l1.1 2.3l1 3.3l-0.9 2.6l-0.6 3.3l-1.3 2.6l0.1 3.3M545.3 69.8l-0.5 2.5l-0.5 3.4l0.2 2.8l0.1 2.9l-0.3 2.6l1.5 2.4M542.4 112l-3 -1.4M649.7 77.8l1.8 4l0.1 1.5l2.4 3l-2.9 2.3l-1.3 2.3l-2.4 2.6l-3 2.2l-1.5 2.3l-1.5 2.7l0 2.1l0.8 3.9l-0.7 1.9l-0.1 4.2"/>
<path stroke="#1cd8d1" stroke-width="0.75" d="M311.7 83l-1.6 1.1l-2.1 0.5M312.4 84.1l2.6 0M311.2 82.2l2.4 -1.2M307.7 82.2l3 1.4M308.4 86.5l-2.4 2M304.4 216.7l-3.4 2.7l-1.5 1.8M522.1 299.4l3.2 -0.1M518.8 312.7l2 -1M531.3 515.5l-1.3 4.9l2.5 2.3M543.5 517.8l-0.8 3.4M534 516.3l-0.9 3.5M496.5 503.4l-0.8 4.6M519 510.6l-0.7 3M530.7 515.3l-2.5 4.1M511 506.5l-3.9 5.7M506.1 505.2l-0.6 4.5M523 512.2l-1.2 5.6M516.1 509.1l-1.5 3.3l1.9 5M562.1 558l-3.6 -0.3M563.7 555l-2.7 -1.8M568.9 535.5l2.8 -0.4M548.2 139.4l-0.6 1.7l0.7 1.2M548.5 104.9l-3.4 -2M546.4 137.2l-1.8 1.9M543 132.7l-3.3 1.2M531 106.2l0.3 2M543.5 170.1l-1.4 -2.6M540.9 187.5l3 -0.3M594.4 119.9l-2.3 1.7M593.6 111.8l3 1.8M594.3 119.4l-3.3 -0.3l-0.7 -2M632 144.9l-3.1 1.1l1.7 2.2M595.3 136.9l1.8 1M607.6 140.4l0.5 2.1l1.8 0M609.5 143.2l4.1 2.7M618 148.3l0.7 2.2l2.1 -1.1M602 144l-2.9 1.3l-0.4 -1.5M610.1 144.3l2.2 2.2M646.5 93.6l2.5 0.9M647.9 126.6l-2.2 -2.1M650.2 89.9l-3.2 -1.8M642 111l-1.4 0.9M642 113.6l3.3 1"/>
<path stroke="#1cd8d1" stroke-width="0.9" d="M273.9 120.7l-3.9 5.3M278.7 151.5l-6.4 2.4M299.3 170.7l3.7 5.3M249.3 240l-0.3 -6.5l-2.6 -6.1M297.1 240.6l5.9 1.8M292.2 255.3l8.3 2.4M285.2 259.4l3.8 1.1M291.2 261.1l7.6 2M303.8 267.9l4.2 1.1M301 270.4l4.7 1.3M246.2 225l2.9 5.9l2.8 5.5M576.1 516.9l2.8 7.4M572.9 523.7l2.2 6.5M566 534.9l2.2 6.1M640.8 344.6l-0.7 6.3l-1.1 6.4M605.3 357.7l3.9 5l4.8 5.1"/>
<path stroke="#1cd8d1" stroke-width="0.8" d="M247.1 222.8l-2.3 2.1M239.1 222.8l1.9 1.8M315.2 223.1l3.1 1.7l1 -1.3M313.9 225.7l1.7 2.6M313 217.4l-4 0M290 265.9l-2.3 2l2.4 1.8M302.5 252l2.8 2l-1.1 3M307.2 251.2l-2.2 0.4l-0.1 -2.6M289.4 253.5l-0.3 3.4l-1.7 -0.1M305.4 242.7l-2.3 1.5l1.9 1.6M300.1 250.2l1.7 1.9M286.7 279.8l2.7 4.2l1.8 -2.2M284.4 260.6l2.7 0.1M289.8 273.7l-2.2 0.7M349.4 278.6l-4.2 2.7M345.3 273.2l-5.4 2.1M336.8 289.4l-1.8 3.9l1.4 1M337.1 289l4.6 1.6l1 -1.6M359.7 286.2l0.4 4.3l2 -0.1M342.4 274.4l-1.2 1.7M354 289.4l0.2 4.3M333.9 288.7l3.7 1.9l-0.6 3.1M352.6 279.9l-5.3 1.3M355.8 285l0 4.9M342.7 273.5l4.6 2.3M349.9 278.7l-4.7 3.6l-2.9 -2.4M343.2 284.2l-3.5 4.4M361.9 287.3l2.7 5.3l-3.4 0.4M362.3 284.7l-5.3 1.6l-1.5 -2.2M339.5 291l0.6 2.2l2.3 -1.4M346.4 278.3l2.3 1.1M345.4 277.8l-3.9 2l0.6 1.5M332.3 277.8l-0.3 2.3M355.3 290.2l1.6 1.9M304 300.8l-0.1 5.1M307.1 292.4l3.1 1.8M300.2 297l0.3 4.4l-2.4 0.5M309.9 287.3l1.4 1.7M306.5 286.5l0.3 5.1l-3 -1.2M310.5 292.5l-5 2.1M311.6 288.1l-5.9 0l0.1 2.2M309.4 285.2l1.8 4.4M306.7 289.5l-4.5 1.5M219.5 392l3.1 1.1l0.6 -3.7M217.5 394l4.5 1.7l0 3.8M214.2 397l5.5 1.3M223.9 413l3.9 0.1M224.7 412l3.5 0.7M236 427.5l5.9 -0.1l-0.1 4.7M230.6 423.8l3 0.4l-0.1 -3M221.6 278.3l-3 0.7M221.4 279.9l3.5 3.2M221.4 283.6l-2.2 0.7M571.5 338.3l-0.7 2l2.8 0.1M587.8 326.7l-2.5 0.6l0.8 1.2M575.9 339.3l0 3.4l2.3 -0.8M577.6 340.7l2.3 0.1M582.1 327l-3.3 1.6M596.3 281.1l-3.4 2.1l-0.7 -1.3M586.6 280.1l2.6 3.2M590 283.6l-4.5 0.3l0.4 -2.9M588.9 275.8l1.2 2.5M587 284.4l-1.8 1.4M578 238.6l-1.9 1.9l-2.4 -2.1M596.7 344.5l3.9 3.2l-1.2 3.4M608.3 352l2.7 0.3M603.5 352.3l0.8 1.9l-3.6 1.5M568 131.5l2.5 2.6l-1.6 1.9M564.1 131.9l2.1 0.1M532.6 191.4l-2.1 0.8M544.2 195.7l-3.5 3.6"/>
<path stroke="#1cd8d1" stroke-width="0.95" d="M299.4 242.9l1.1 -4.6M298.2 258.4l1.2 -4.8M302.3 241.4l0.4 -1.5M306.2 252.5l1.7 -6.6"/>
<path stroke="#1cd8d1" stroke-width="1.0" d="M490.6 482.7l-0.4 3.2M478.5 481.6l-0.5 5.3M474.6 478.9l-0.5 4.1M468.8 472.3l-0.9 8.1M467.8 481.2l-0.2 2.3M465.8 480.1l-0.4 2.7M462 478.7l-0.3 2.9M639.9 320l1.6 3.2M610.6 327.2l5.1 9.2M624.6 319.9l-7.7 4.5M616.2 324.8l-4.5 2.5M611 327.8l-5.3 3M734.7 103.7l-0.1 6.1l0 6.1l-0.1 6.2l0 6.1"/>
<path stroke="#1cdac9" stroke-width="0.85" d="M306.9 74.3l1.6 3.3M523.6 281.7l-0.7 2.4l-1.1 3.2l-1 3.5l1.5 2.1l-0.2 4M515 508.6l2 1.3l2.6 1.3l3.8 0.2l2.1 1.9l3.4 0.4M563 521l1.1 3l1 2.6M545.8 86.4l1.8 3.6l2.2 1.7l1.1 2.3l-1.1 3.4l-0.3 3.5l0.7 2.9M595.1 126.2l0.4 2l1.4 4.2l0.1 2.4M646.4 69.8l1 3.1l1 3.1l1.3 1.8"/>
<path stroke="#1cdac9" stroke-width="0.75" d="M309.2 79l2 -1.7M307.2 75.8l0.9 -1.4M312.9 72.1l-2.6 0.7l0 -1.6M317.7 87.7l-1.1 3.2l-1.5 -0.2M319.7 488.5l1.8 3.7M520.1 302.6l3.2 2.3l0.5 1.2M518.3 308.5l-3.2 -1.2l-2 -1.1M520.8 301.6l-2.4 -1.3M521.7 292.6l3.1 0.1M523.8 278.9l-2.8 -1.2M520.3 302.3l2.2 0.5M513.4 507.8l-2.7 4.1M568.8 536.6l-2.1 -0.5M563.3 521.8l1.7 -1.6l1.1 -2.9M542.4 114.2l1.4 -0.9M542.4 131.2l3.6 0.8l2 2.4M547.5 138.6l-2.3 0.9M544 82.6l1.6 -0.6M549.4 140.9l2.1 -1.8M542.4 123.1l2.4 -1.5M546.4 87.5l-1.5 3.5M539.7 178l-2.1 0.8M540.1 180.7l-2.2 -0.9M540.7 186l1.6 0.6M594.2 119.2l-2.1 -0.7l-1.8 0.8M587.7 100.5l0.1 2.7l-1 1.8M619.2 135l-3.6 0.9l0.6 1.4M601.5 149.9l0.5 3.6l-3 1.3M596.9 137.7l-1.8 3.6l1.9 1.4M625.5 141.7l3.2 2.2l1.6 -2.5M612.9 146.7l-2.6 0.7l1 1.3M599.5 140.2l-1 2.7l-2 -0.5M628.2 139.5l2.8 2.4l-2.1 2.4M606.3 144.6l-1.9 3.6l-2.8 -1.6M648.9 75.8l-1.6 1.5"/>
<path stroke="#1cdac9" stroke-width="0.9" d="M249.3 240M291.3 245.5l2.1 0.6M291.4 264.6l3.8 1.1M297.9 266.4l3.9 1M278.4 278.8l6.6 1.9M281.7 283l8.3 2.5M292.3 286.2l6.6 2M247.1 508.5l-5.1 3.2M251.9 236.4l2.9 5.3M579 516.2l0.8 2.5M575.1 522l3.4 8.3M577.9 538.2l0.3 0.8M563 520l2.2 6.4M639 357.3l-2.9 5.8l-5.8 3.6M724.1 115.7l0.5 6.1"/>
<path stroke="#1cdac9" stroke-width="0.8" d="M243.4 220.9l1.6 2.8M312.2 223.4l3.5 3.8l3.2 -1.2M316.2 226.8l2.3 4.8l-1 1M312.4 215.1l-3.4 4M281.1 288.1l2.9 1.9l-0.8 2.5M285 279.3l-0.7 2.6M298.3 250.8l1 2.7M304.8 261.7l1.6 1.3M303.1 259.2l1.7 3.7l2.2 -0.7M289.6 277.7l3.5 3.3M346.3 278.7l-0.5 3.4l-4 0.7M365 288.4l-4.6 1.2M360 279.8l3 1.8l-0.9 2.6M334.1 275.6l-2 4.4M346.8 290.6l-1.7 3.4M338.8 289.4l-4.1 0.4l1 2.9M335 284l-3.5 0.8M344.4 289.1l-1.5 5.1l-3 -1.4M339.2 279.9l-1.4 4.7l-3.7 -0.6M330.7 282.2l-0.1 4.4l3.1 -0.1M345.3 285.4l3.2 4.9l-2.4 0.4M361.2 287.8l0.7 3.9M359.8 280.4l3.3 0.8l0.6 -3M337.3 279.8l-1.9 0.9M352.7 290.7l0.7 4.1M337.9 279.1l-0.6 3.5l2.8 -0.4M333.5 283.2l-4.2 0.7l-0.5 -1.4M351.8 283.1l-0.6 2.2l-3.4 -2M334.2 274.8l-4.6 2.2l-1.8 -2.8M334.1 287l2.3 2.7l-3.3 1.2M361.2 288l2 2.1l-0.8 1.4M357.6 280.8l-2.3 0.1M338.9 272.1l1.6 5.1M340.4 275.8l-1.7 1.6l-1.1 -1.1M360.1 277.7l-3.6 4.4M307 291.9l3.7 0.6l-1.2 3.1M297.9 294l2.4 1.6l-1 1.4M316.8 299.3l-5 1.1l-1.2 -2.5M306.1 303.9l4.6 0.9M305.8 280.1l-2.6 3.9l-0.9 -1.5M311.1 283.3l-2.9 4.3M309.6 300.9l2.5 4.8l-3.7 1.4M315 282.9l-4.8 0.2M316.3 298.4l-3.6 1M308.2 296.4l4.5 0.8M220.6 391.3l4.3 1.2M219.1 390.9l5.4 0.8M227.7 412.8l5.2 1.2l-0.4 -4M224.4 427.3l5.4 0.3l1.1 -2.5M224.3 423.8l5.5 0.9M227.2 428.2l6.7 1.4M228.9 428l3.6 1.3M267.7 250l1.5 -5.6l6.2 -0.9l6.3 -1l4.6 -3.8M583.5 329.4l3.3 0.1M567.7 332.5l3.4 3l1.6 -1.4M571.3 329.1l-2.4 2.3M589.7 280.1l-4.6 1.5l-1.2 -1.4M581.6 274.7l3.2 4.4l-3.2 2.7M593 276.6l3.5 0.8M586.2 279l2.8 4.3l2.2 -1.1M587.4 284.6l-3.8 0.1l-0.2 -1.6M579.5 241.4l-4.9 2.8M596.2 239.3l0.5 2.2l-2.9 2.1M595.5 237.5l-0.9 4.1M586.9 239.6l-4.3 0.5l-1.3 -2.4M576.1 246.5l4.3 3.2M582.9 237.3l4.2 1.8M585.2 235.2l1.7 3M498.3 487.9l2.3 2.5l0.9 -1.8M603.1 348.9l-0.3 5.4l-2.7 0.2M608.8 355.9l3.3 4.8l-2.2 1.8M608.9 353.9l2.8 2.4l-1.1 4M538.8 201.4l3.3 0.4l-0.3 -2.1M538.6 189.3l1.6 1.7M542.1 188.5l0 3.3l-3.6 0M544.6 195.1l-5 2.5l1.5 3.3M536.1 196l-1.6 1.9M543.3 197.9l2.8 0.8M535 203.4l3.3 1.9l1.4 -2.3"/>
<path stroke="#1cdac9" stroke-width="0.95" d="M282.2 271.4l1.4 -5.4M284 264.7l1.6 -6.2M286.5 264.1l2.8 -9.5M293.9 265.8l1.4 -5.9M295.7 269l2 -8.6M297.8 268l1.2 -5.2M301.1 273l1.7 -6.9M303.4 263.6l2.2 -8.6M303.6 272.7l1.7 -6.3M305.4 272.8l1.4 -4.9M307.3 265.7l2.5 -9.3"/>
<path stroke="#1cdac9" stroke-width="1.0" d="M341.2 448.4l4.8 -0.9M342.5 467.6l0.9 3.5M582.3 500.5l2 3.9M575.7 505.3l4.6 9.3M563.3 504.4l3.6 6.3M563 519.4l0.8 1.5M586.3 508.7l-7 3.9M572.6 500.3l-6 3.1M617.7 318l-8.5 4.8M736.4 73.1l-0.6 6.1l-0.6 6.1l-0.4 6.1l-0.1 6.1l0 6.2"/>
<path stroke="#1ddbba" stroke-width="0.85" d="M308.5 77.6l1.5 2.1M524 278l-0.4 3.7M528.9 513.7l2.5 2.1l2.2 -0.1l3 1l3.6 0.1M550.2 103.8l-2.1 1.6l-2.2 2.9l-1.6 2.7l-1.5 1.9l-0.2 3.1l0.4 3.4M593.4 111l0.8 2.1l-0.4 4.2l0.5 1.9l1.3 3.7l-0.5 3.3"/>
<path stroke="#1ddbba" stroke-width="0.75" d="M313.2 85.3l-1.7 0.9M305.7 495.6l-0.4 3.5M523.1 281.4l3.1 0.9M523.8 278.8l1.8 0.4M532.4 515.9l-0.4 2.6M531.4 515.6l-2.1 5.5M535.2 516.5l-1.7 5.4M548.6 90.5l-1.3 3l0.7 2.2M542.4 123.8l2.8 -1.6M550 141.7l3.2 -1.7M548 139.1l-1.4 2.6M540.4 183.8l-2.3 -1.1M540.5 184.3l2.5 1.1M593.9 116.2l3.6 -1.1l2.1 -0.7M615.3 141.9l-4 1.7l0.5 2.9M599.2 139.2l3 3l2.4 -2.2M608.2 140.1l-0.8 2.3l2.1 0.7M609.8 134.8l-0.4 2.8l-2 -0.4M610.7 150.2l0.3 2M613.3 138.3l1.4 2.4l2.9 -0.7"/>
<path stroke="#1ddbba" stroke-width="0.9" d="M267.3 92.4l-1.6 -6.1M277.8 122.7l-3.9 -2M284.6 147.7l-5.9 3.8M298.5 164.9l0.8 5.8M306.4 249.9l2.5 0.7M298.3 250.7l8.4 2.5M308.5 259.9l2.2 0.6M286.9 266.5l4 1.1M252.4 505.3l-5.3 3.2M254.8 241.7l4.1 4.9l3.6 5M573.1 533.1l2.1 5.9M569.2 529.8l3.6 9.1M573.1 539.9l0.5 1.1M564.1 530l1.4 3.7M630.3 366.7l-5.3 3.8M721.8 89.8l0.3 3.2M723.9 138.4l0.3 3.8"/>
<path stroke="#1ddbba" stroke-width="0.8" d="M306.8 226l-2.5 0.8l1.7 2.9M317.1 227.4l-1.5 5.7M315.6 219l1.3 4.8M299.2 280.6l3.3 2.8M301.9 266l-2.5 3M300.9 262.1l-2.8 3.3l1.5 2.2M284.8 286.7l-2.6 0.2l1.3 2.5M292 256.9l-0.8 2.6l2.6 0.9M299.3 275.9l2.8 2.9l-1.6 0.9M286.3 257.4l1.5 1.5M288.3 259.6l-4.7 0.6M327.5 281.9l4.8 0.1l0.1 3.1M351.1 281.8l0.4 5.9M349.8 279.1l1.7 3M354.7 286.7l1.8 4.6M348.9 273.6l-3.7 1.3M303 291.5l-2.3 0l-0.1 2.2M298.3 285.6l1 1.9l3.4 -1.2M309.5 286l0.8 2.6M301.7 292.5l-3.4 3.1l1.1 1M302.8 286.1l1.7 1.4l0.9 -3.1M303.5 299.3l1.4 3.6M310.4 296l4.6 3.2M300.5 300.2l3.2 3.9l2.2 -2.1M313.4 283.4l-2.9 2.9M302.7 282.1l-2.7 1.9M296.4 476.6l0.9 6.4l4.4 0.4M227.4 407.8l4.8 0.7M228.2 413.9l5.2 0.1M230.8 406l4.3 1.5l1.7 -3.2M225 423.6l4.4 1.4l-2.5 3.9M219.6 282.3l-2.7 0.1M266.7 256.2l1 -6.2M570.6 332.7l-2 5.2l-2.5 -1.9M575.7 339.7l3.1 1.3l-1.8 2.6M566.9 326.8l3.8 1.1M581.3 331.6l-0.5 4.4M581.6 325l3.4 1.2M587.2 274.8l-0.9 4.5M584 282.1l1.3 1.7M579.5 241l-1.1 2M589.5 236.4l4.4 2.6M580.7 242.2l-0.6 4l-3.5 -0.3M594.9 245.2l-3.1 0.3M591.8 244.8l-2.3 0l0.2 -1.8M581.6 238l2.3 0.9M578.3 238.3l-3.1 0.5l-0.1 1.8M576.7 242.4l3.6 1.2M599.2 244.9l-3.4 3.8M583.2 241.1l-5 3.2l-3 -2.4M571.5 135.3l-2.9 3.3M567.6 134.2l-0.5 4.7l2.6 0.5M541.9 200.9l4 2.4M538.9 193l2.9 4M533.3 194.2l-1.4 4.1l3.3 0.7M541 188.1l3.8 1.9"/>
<path stroke="#1ddbba" stroke-width="0.95" d="M290.1 272.1l2.3 -8.3M292.8 262.3l3.4 -12.7M288.5 288.4l2.9 -12.3M295.7 258.2l1.3 -5.1M292.4 282.8l2.6 -11M295 280.4l2.2 -9.8M299.5 260.7l1.8 -7.6M308.9 253.4l0.3 -1.2"/>
<path stroke="#1ddbba" stroke-width="1.0" d="M338.6 439.4l3.6 -0.7M331.3 453.3l9 -1.9M338.6 453.7l4.5 -0.9M334.9 437.1l2.1 8.4M337.6 447.9l2.1 8.5M606.7 437l3.7 7.1M596.4 455.5l3.8 7.6M594.3 470.2l5.6 11M587.7 460.7l5.8 11.8M576.7 454.3l5.5 9.7M588.8 480.6l3 5.7M592.3 487.3l4.2 7.9M593.9 492.7l1.9 3.6M577.1 469.9l6.1 11.8M587.6 490.1l3.3 6.5M570.9 460.2l2.3 4.6M582.1 482.7l3.9 7.6M571.9 465.8l5.8 11.6M578.1 478.2l4 8.1M587.9 497.9l2.7 5.3M568 462.6l3 5.5M572.1 470.1l3.2 6M583.3 496.1l5 10M567.7 469.2l4.1 8.1M568.2 473.7l4.9 9.5M575.5 498.2l5 10.2M578.7 514.5l0.4 0.9M568 509.6l5.4 9.5M567.4 511.7l4.4 7.6M577.6 513.5l-7.1 4M585.6 502.6l-3.7 2M574.1 508.9l-9.5 5.2M589.4 497.7l-4.4 2.4M584.2 500.6l-6 3.3M570.7 508.1l-7.5 4.2M584 489l-9.4 5M607.2 472.6l-10.6 5.8M584.5 485.1l-12.2 6.6M565.1 495.7l-1.7 0.9M578.1 479.6l-4 2.2M586.3 472.3l-7.8 4.3M572.2 480.1l-6.5 3.6M600.4 454l-8.1 4.3M574.9 467.4l-7.6 4.1M607.8 434.6l-5.5 3.1M632.8 311.6l3.2 6.4M633.6 333l1.4 2.7M628.5 366.4l-3.5 2M737 67l-0.6 6.1"/>
<path stroke="#1ddcab" stroke-width="0.85" d="M310 79.7l1.7 3.6M540.2 516.8l2.8 1l3.2 0.8l2.9 0.2l2.5 -0.1l3.4 -1.3M543 119.4l-1.3 3.2l0.8 2.3l0 3.6l0.4 1.9l0.9 2.9l1.8 2M540.3 176.3l-1 2.3l1.5 3.1l-0.5 4.2l0.7 2.5M591.9 99.6l1.5 1.7l-0.6 2.8l0.2 3.9l0.4 3"/>
<path stroke="#1ddcab" stroke-width="0.75" d="M313.8 86.3l3.1 -0.6M312 83.5l-3.7 0.8l-1.3 -0.3M295.2 492.5l-0.8 6.5M293.7 492.1l-2.5 6.3M284 489.2l-2.3 6.6M505.2 325.7l-2.7 0.2M546.9 518.4l0 3.9l0.3 3M535.2 516.4l-1 2.9l-0.5 1.9M548.2 139.5l-1.7 0.5M542.4 126.7l-2.4 1.2l-1.4 2.2M542.4 113.7l2.7 0M546.6 164.5l1.4 1.8l1.5 0.5M542.4 172.1l-3.6 -0.5l-0.8 -1.9M540 180.5l-1.8 1.5"/>
<path stroke="#1ddcab" stroke-width="0.8" d="M301.9 158.1l-4.6 4.9M298.6 283l-1 4.9l2.1 -0.2M285.3 260l3.8 0.7l0.1 2.1M287.1 271.2l3.8 0.5M289.8 257l-2.8 0.6M312.9 303.5l0.3 5.2l3.1 0.1M315.2 289l-0.5 3.1l-3.2 -1.5M297.1 293.6l4.2 1.7l-0.8 1.3M310.4 283.8l3.5 0.1M230.2 410.8l5.6 0.5M228.8 411.3l3.6 1.3M227 411.2l5.1 1.3M234.2 426.1l4 1l1.1 -4.2M227.7 430.3l4.3 1.1M232.6 427l3.5 0.2l0.6 3.7M222.1 271.7l-0.4 3.5M219.3 286.6l-1.9 2.2M219.3 284.8l-3.2 0.6l-0.5 -1.4M221.4 286.5l1.1 1.7l1.7 -1.7M575.7 238l2.9 1.6M536.8 202.8l-3.2 0.1M536.3 194.1l2.3 4.5M540.2 198.3l1.7 5.7l-1.6 0.5M531.1 188.4l3.1 2.7"/>
<path stroke="#1ddcab" stroke-width="0.95" d="M300.9 266l2.3 -8.1"/>
<path stroke="#1ddcab" stroke-width="0.9" d="M282.1 267.7l7.1 1.9M286.6 281.2l8.5 2.5M254.6 499.4l-2.2 5.9M262.5 251.6l4.2 4.2l5.2 4M553.1 499l0.2 6.6M548 510.8l0.4 7.3M558.4 521l1.2 3.3M722.2 93.7l0.7 8M722.9 102.5l0.4 4.3M721.5 113.1l0.5 5.9"/>
<path stroke="#1ddcab" stroke-width="1.0" d="M324.1 441l9.6 -2M332.7 440.6l4.9 -1M331.3 442.2l9.1 -2M341.7 442.5l4.8 -0.9M328.8 446.3l7.7 -1.9M334.2 449.8l5.7 -1.1M328.7 456.8l11.5 -2.7M329.8 461.5l7.4 -1.6M331.9 462.2l9.5 -2.4M330.6 467.7l7.6 -1.4M343.7 454.5l1.2 6.3M339.8 445.5l1.7 7.4M338.3 457.6l1.1 4.5M621.1 413.1l3.2 5.6M613 408.7l2 3.6M615.7 413.6l3.2 5.6M613.6 426.3l3.5 6.9M603.1 423.3l3.6 6.6M601.7 425l5.2 9.3M605 435.9l5.7 11.5M597.1 430.9l2.5 4.8M605.1 449l4.7 9M600.5 444l5.3 10.7M597.5 442.5l4.4 9M603 453.7l5.1 10.5M594.8 456l3.7 6.4M594.1 460.8l4.3 8.6M591.6 460.9l2.2 4M586.9 469.1l2.8 5.6M587.9 487.1l5 9.8M568 452.1l4 7.9M572.5 460.9l4.2 8.3M584.3 483.9l2.3 4.4M577.6 473.6l3.7 7.4M564.4 450.7l4.2 8.5M583.1 488.1l4.3 8.8M575.8 477l6 11.3M569.4 468.2l4.9 9.9M581.4 496.1l4.2 8M580.6 498.2l5 8.7M564.8 474.1l2.5 4.6M562.8 479.2l6 12M574.6 508.3l2.5 4.9M577.8 514.3l0.7 1.5M566.8 496.6l4 7M571.6 504.8l6.4 11.2M563.5 495.9l5.5 10.8M565 519.3l0.7 1.4M569.1 518.3l-4.5 2.5M580.8 505.2l-5.6 3.1M576.4 504.9l-4.3 2.4M595.9 488.5l-10.2 5.2M565 504.2l-1.7 0.9M572.5 497.9l-8.4 4.3M593.5 484l-7.5 4M599.3 478.9l-6.5 3.3M583.6 479.2l-11.8 6M567.8 485.4l-4.2 2.4M604.4 462.2l-11.5 6.4M612.2 452.4l-9.2 5M588.5 462.9l-7.7 4.4M608 450l-6.3 3.4M564.6 460l-1.4 0.8M622.2 426.5l-7.5 4.3M614.4 426.6l-11.6 6.2M568.5 448.5l-3.4 1.9M617.1 416.6l-11.4 6.1M636.5 318.9l3.6 7.2M633.8 314.6l-7.4 4.3M625.9 365.3l1.6 2.8M624.5 365.5l2.8 5.1M628.4 372.5l5.2 9.5M624.5 379.3l3.8 6.1M615.7 366.8l3.2 5.7M614 367.1l3.9 7.1M619 376.3l2.9 5.3M628 383.6l-6.2 3.4M630.9 372.6l-6.2 3.5M622.8 375.1l-6.6 3.9M624.5 365.5l-8.1 5M615.2 371.2l-1.2 0.8"/>
<path stroke="#1edd9c" stroke-width="0.85" d="M311.7 83.3l1.1 2.8l2.7 1.3M316.2 490.6l2 -1.4l2.8 -1.5M555 517.4l2.9 -0.2l2.9 -1.2M545.6 135.3l1.7 3.1l2.2 2.3l1.5 2.3M546.7 164.4l-2.2 3.3l-0.6 2.7l-2.1 2.4l-1.5 3.5M585.6 100.9l3 0l3.3 -1.3"/>
<path stroke="#1edd9c" stroke-width="0.75" d="M323.1 92.8l0.1 -3M324.4 94.1l-1.7 -0.7M311.6 493.3l2.6 5.4M295.8 492.7l-0.4 4M310.9 493.7l3 4.8l1 2.7M502.5 332.7l-3.3 -0.8l-1.9 -1.5M502.7 332.3l2.7 0.3l0.8 2.7M502.7 332.1l1.3 1.9M551.6 518.3l0.5 4.8l-0.9 4M542.4 129l1.7 -0.9M550.7 142.6l1.6 -1.2M542.8 132.5l-1 2.6M542.7 132.4l-2.3 1.2M542.4 130.3l-2 -0.1M540.2 176l-1.7 -3.5M589.5 100.1l-0.2 -2.3"/>
<path stroke="#1edd9c" stroke-width="0.9" d="M270.8 97.8l-3.5 -5.4M281.9 118l-4.1 4.7M287.7 142.3l-3.1 5.4M300.4 160.1l-1.9 4.8M271.9 259.8l4.6 4.2M553.6 516.3l0.1 4.4M592.7 393l6.5 3.6M726 138.4l0.2 1.5M723 129.2l0.7 7.3"/>
<path stroke="#1edd9c" stroke-width="0.95" d="M282.8 276.9l2.9 -10M280.6 291.7l2 -7M283.1 283.3l3.7 -12.9M291.6 258.9l1.6 -6.1M293.9 250l2.2 -8.7M289.7 293.9l2.2 -9.1M296.5 281.9l1.9 -6.7M298.6 282.8l1.8 -7.2"/>
<path stroke="#1edd9c" stroke-width="0.8" d="M287.3 273.7l1.4 2.8l-2.4 1.9M295.8 275.4l2.1 1.4l2.1 -1.8M299.7 282.9l-0.5 5l-1.8 -0.1M315.6 230.4l2.3 -1.1l-2.3 -2.1M305.2 238.5l4.3 -2.2M312.8 227.6l3.5 -3l-1.5 -2M308.2 229.9l2.5 5.1l2.2 -1.7M305.7 235.4l4.8 -1.8l1.6 1.8M307.6 232.2l1.1 3l2.9 -0.7M305.6 231.2l3.1 3.9l-0.8 1.5M304 474.4l1.5 5M296 482.3l-0.1 3.5M313.3 482.3l0.2 4.6l-3.7 0.1M301 488.8l-0.1 3.6l-2.8 -0.5M297.9 477.5l0 3.3M231.2 411l3.8 0.1M234.3 410.6l3 0.4l0 2.7M230.4 407.4l6.1 2.3l0.6 -2.1M231.7 412.9l6.5 0l0.4 2.6M227.6 424.9l4.2 0l0.7 3.9M223.7 430.4l4.9 0.6M222.9 283.5l-2.9 2.3M213.7 273.2l2.3 2.4l-1.8 1.1M542.8 188.6l1.4 1.7l-3.3 2.4M539.2 199.1l1.3 2.1M532 203.4l4.4 1.8M532.7 191.9l2.1 4.4M545.3 201.8l2.4 0.9M540.4 197.9l-2.3 5.1M535.8 192.9l-5.6 1.6M541.6 198.3l-2.2 0M580.2 192.2l-5.4 0.8l-0.3 -1.7"/>
<path stroke="#1edd9c" stroke-width="1.0" d="M338.8 443.9l6.8 -1.7M337.2 445.6l8.4 -2M330.1 452.3l5.4 -1.2M336.8 450.8l8.3 -1.8M341.6 451.1l4.2 -0.8M327.8 458.8l7.8 -1.5M340.8 456.9l4.5 -1.1M338.1 437.8l1.2 5.4M340 457.4l2.2 8.8M334.8 451.3l1.7 7.1M327.8 453.4l1.8 9.3M322 436.7l0.5 2.3M616 404.1l4.4 7.8M611.8 403.4l3.1 5.3M615.7 410.2l3.1 5.4M616.2 413.8l4.7 9.5M609.1 407.8l2.5 4.4M612.5 414l4.4 7.8M617.9 427.9l2.2 3.8M600.4 426.7l4 8M598.3 429.4l6 11M603.1 457.2l3.7 6.8M602.9 461l2.6 5.4M599.5 464.1l3 5.3M599.2 471l2.2 4.2M588.8 459.3l4.9 9.7M576.9 458.2l3.4 6.3M577.1 462l6.4 11.7M584.6 475.7l3.4 6.3M586.3 491.1l5 9.9M575 479.4l2 4.1M562.1 470.9l4.1 8.4M570 508.8l4.8 9.4M563.1 515.6l1.5 2.9M563 519.8l0.7 1.1M598.1 492.8l-7.6 4.3M593 492.8l-5.5 3M586.7 496.3l-12.1 6.8M573 504l-9.8 5.5M584.6 494.2l-9.9 5.1M599.8 480.7l-5.2 2.8M606.7 475.1l-6.3 3.2M578.6 489.4l-9.2 4.7M595 479.3l-8.5 4.6M570.2 492.9l-3.8 2.1M608.3 466.6l-4.5 2.3M601.5 458.2l-6.4 3.4M593.1 462.7l-6.8 3.6M584.9 467.1l-6.8 3.6M579.8 467.8l-8.6 5M614.2 446.8l-5.1 2.7M592.5 455.1l-4.7 2.7M585.7 459l-6.6 3.8M614 439.7l-8.3 4.5M604.1 445.1l-5.2 2.8M576.2 454l-9.8 5.1M612.6 431.9l-3.5 2M574.9 453l-8.9 5M610.5 425.5l-6.5 3.6M565.7 446.5l-0.8 0.5M479.4 473.5l-0.7 6.7M628.8 324.5l4.3 7.7M622.6 372.4l4.9 8.2M628.5 382.3l2.9 4.7M616.6 366.6l3.2 5.2M629.1 386.7l3.7 6M619.9 391.2l4.1 7M622.6 402.2l-1.3 0.8M633.7 380.5l-5 2.7M632.8 377.6l-8.3 4.6M615.3 387.2l-1.3 0.7"/>
<path stroke="#1ede8d" stroke-width="0.85" d="M315.5 87.4l2.3 2M304.4 494.8l3.5 1l2.9 -1.7l2.5 -1.5l2.9 -2M502.6 330l-0.6 4"/>
<path stroke="#1ede8d" stroke-width="0.75" d="M318.7 89.8l1.8 -1.4l2.1 -1.2M319.3 90.2l2 -1M301.2 494.3l-0.7 2.9M273.1 489.4l1.8 6.1M299.3 493.7l-1.5 3.8M314.8 491.4l1.6 3M504.4 327.7l2.4 1.5"/>
<path stroke="#1ede8d" stroke-width="0.9" d="M273.5 102.8l-2.7 -5M293.6 259.4l3.8 1.1M279.5 288.5l3.2 0.9M256.4 493.4l-1.8 6M599.2 396.6l6.4 3.7l6.4 3.7M722.1 119.9l0.8 8.7M553.7 164.4l-6.2 0.1"/>
<path stroke="#1ede8d" stroke-width="0.8" d="M306.7 154.9l-4.8 3.2M285.4 286l-1.5 1.5l0.8 1.6M296.8 286.8l4 1.8M317.5 232l2.5 4M317.1 229.7l3.1 -2.6l0.7 2M312.4 225.8l1 2.8M300.8 476.4l0.1 5.9l4.1 -2M232.5 425.2l4.8 1.3l-0.2 3.8M224.8 430.5l4.8 0.2l-1.4 -4.5M223.6 285.1l-2.7 1.8l1.9 1.8M544 194.9l-2 1.3M537.4 193.7l-2.8 2.5M540.5 194.8l-3.7 3.2"/>
<path stroke="#1ede8d" stroke-width="0.95" d="M279.5 288.5l2.6 -8.9M289.3 267.9l1.6 -6.1M284.6 292.6l3.3 -12.3M299.8 286.4l3.1 -11.2M567.2 445.7l4.9 6.8M565.2 462.5l7 10.2M572.9 473.7l3.6 5.3M563.9 464.2l5.7 8M560.6 463.6l4.6 6.4"/>
<path stroke="#1ede8d" stroke-width="1.0" d="M320.4 446.5l8.2 -1.6M330.4 444.6l10.2 -1.9M324.8 448.6l11.4 -2.8M335.2 464.7l9.5 -2.3M331.2 469l7.8 -1.6M333.1 436.7l2.3 9.1M335.7 447.3l2.3 9.1M339.7 463.2l1.3 5.2M332.6 442.3l2 8.2M329.8 452.4l2.5 11.3M327.4 461.1l1.4 6.1M558.8 510.1l2 5.9M619.7 417.2l3.7 6.6M609.8 403l2.8 4.9M614.6 424.6l2.9 5.5M606.7 418.6l5.7 10.8M605.7 419.9l2.6 5M612.2 432.5l4.2 8.1M604.4 421.6l5.2 10M610.6 433.4l4.4 8.4M598.3 451.6l3.6 7.4M589.5 451.9l4 7.8M594.3 465.8l6.6 11.9M601.5 478.9l2.7 4.9M600.9 483.1l1.6 3.2M598.3 487l1.7 3.1M590.4 476.2l2.8 5.4M582.9 465.1l3.4 6M586.8 471.9l5.5 9.6M581.2 466.2l6.5 12.4M580.6 472.8l6.3 12.2M565 446.3l2.2 4.2M567.4 453.1l3.1 6.3M582.5 489.6l6.2 11.6M562.4 466.7l5 8.7M568.2 480.4l4.1 7.4M567 480.9l4.3 8.8M565.8 481.4l6.1 10.7M578.4 503.7l2.1 3.7M573.2 503.3l4.9 9.9M566.5 514.8l3 5.5M601.3 488l-7 4M572.7 495l-9.3 4.9M591.4 482.9l-11.2 5.7M570 486.1l-6.4 3.3M597.5 468.6l-6.4 3.6M573.4 482.2l-4.2 2.4M609.8 459.3l-4.4 2.4M613.5 448.6l-8.7 5M595.2 459.1l-4.9 2.8M590.5 459.3l-4 2M578.2 463.3l-6.3 3.6M569.8 468.2l-7.6 4.3M580.1 458.2l-6.5 3.6M620.4 430.9l-6.8 3.6M611.2 403.3l-1.6 0.8M614 380.9l2.5 4.3M617.3 386.6l2.1 3.6M632.7 393.4l-6.4 4M623.1 377.1l-8.7 4.9M630.2 370.8l-6.7 3.9M623.2 369.4l-9.1 5.1"/>
<path stroke="#2edf79" stroke-width="0.85" d="M317.8 89.4l3.2 1.9M293.7 492.5l2.4 0.6l3.5 0.2l2.1 1.6l2.7 -0.1M504.6 327.5l-2 2.5"/>
<path stroke="#2edf79" stroke-width="0.9" d="M283.9 111.7l-2 6.3M291.3 136.7l-3.6 5.6M299.6 261.1l7.9 2.3M280.2 273.5l1.5 0.4M279.9 291.1l6.8 1.9M555.9 517.7l0 3.3M553.4 508.7l0.1 5.2M547.4 499l0.5 9.3M545.7 507l0.1 5M542.5 499l0.1 7.5M542.8 517.8l0.1 3.2M547.5 164.5l-3.6 5.2l-3.2 5.3l-0.7 6.4"/>
<path stroke="#2edf79" stroke-width="0.8" d="M290 290.3l2 3.8M293.8 286.6l0.2 4.1M283.5 290.5l2.1 2.6M306.2 240.2l4.7 -3.5M315.9 227.5l2.9 3.5M298.7 482.2l0 4.4M311.3 487.9l0.4 4.8l3.2 0.3M307.5 480.5l0.3 6.1M307 482.5l0.4 4.1M290.2 485.6l-0.2 4.5M541 199.1l1.5 2.7M548.3 199.3l-3.5 2.6l-0.9 -2.4M576.6 200.4l-5.1 3M576.7 195.6l-2.8 1.3l0.8 1.6M573.4 204.5l4.7 1.3M568.2 193l5.4 2.3l1.1 -2M574 195.6l2.4 0.1M574.1 196.5l-1.5 1.4l2.9 2.1M581 202l-4.4 0.3"/>
<path stroke="#2edf79" stroke-width="1.0" d="M324.2 443.8l4.9 -1M328 455.6l9.7 -1.8M315.3 461.1l10.9 -2M328.2 460l10.9 -2.7M319.7 463.7l8.6 -1.9M322.6 466.1l7.5 -1.5M319.4 468.4l7.6 -1.8M328.9 466.2l5.2 -1.2M317.9 473.1l10.1 -2.1M329.3 470.7l8.6 -1.8M344.9 442.3l1.1 5.3M331.2 436.3l1.1 4.4M332.8 466l1.7 8M330.1 464.9l0.8 4.2M326.2 455.4l1.1 4.9M588.5 300.4l1.3 7.6M585.7 300.3l1.1 5.5M591.5 308.1l-5 0.9M557.5 504.3l1.3 5.8M607.7 431.8l5.9 10.7M608 436.4l5.7 10.4M605.1 441.8l4.6 8.5M596.5 432.7l1.2 2.2M607.7 465.6l0.6 1.1M602.7 464.8l4.4 8.2M600.9 464.5l4 8.1M587.3 453l3.5 6.3M594.1 473.8l5.8 11.7M600.6 487l0.6 1.3M573.8 452.3l2.7 5.2M572.8 457.4l2.4 4.8M568.5 477.2l3.5 6.2M592.9 477.3l-4 2.1M602.6 469.6l-7.2 3.6M609.2 462l-10.8 6.1M603 454.7l-6 3.4M616 441.6l-5.1 2.9M609.4 445.4l-5.8 3.3M601.5 450l-7.7 4.3M596.9 449l-5.1 2.8M611.8 435.4l-8.5 4.4M616.1 422.4l-4.3 2.4M625.4 416.7l-7.7 3.9M616.7 421.1l-6 3M614.8 410.9l-6.5 3.7M613.7 403.7l-3 1.7M634 311.4l4.9 9.8M622.7 313.5l5 9M637.1 312.7l-2.4 1.4M624.8 373.2l6 9.6M620.9 373.6l2.7 4.3M620 374.4l3.7 6.6M623.1 383.7l2.4 4.5M620.2 381.8l4.6 7.5M626 391.3l4.6 7.6M626.9 397.3l2.1 3.6M616.4 382.2l2.5 4.2M632.5 396.4l-8 4.7M622.9 396.7l-4.3 2.7M623.7 382.6l-7.5 4.1M627.2 377l-9.9 5.7"/>
<path stroke="#2edf79" stroke-width="0.75" d="M298.5 493.5l-1 4M254.7 492.6l-1.4 5.2l-3.9 0.9M293.5 492l-1.9 5.5M298.7 493.5l-1.5 3.8M265.1 491.1l0.8 3M293.2 491.9l-1.4 3M261.1 491.9l0.6 3.1M263.3 491.5l0.2 3.3M503.5 330.1l1.9 -0.2M641.1 67.5l0.6 2.6l0.7 1.9"/>
<path stroke="#2edf79" stroke-width="0.95" d="M574.3 446.4l2.8 3.8M577.7 451.1l2.3 3.2M569.9 453.4l4.9 7.3M575.7 462l3.5 5.1M560.4 455.5l4 5.8M565.9 470.9l5.9 8.1M563.6 472.1l2.9 4.2"/>
<path stroke="#41df63" stroke-width="0.85" d="M321 91.3l3 1.7M281.1 488l3.9 0.9l2.7 1l2.3 1.6l3.7 1M506.8 324.5l-2.2 3"/>
<path stroke="#41df63" stroke-width="0.9" d="M280.5 102.2l-7 0.6M304.9 154.8l-4.5 5.3M495.8 483.5l6 1.6l6 2.2M550.3 506.4l0.4 11.3M545.8 513.3l0.2 7.7M542.6 509l0.2 7.1M559.4 94.7l6.9 0l6.8 0l6.9 0M540 181.4l0.8 6.5l-3.4 5l-4.1 5"/>
<path stroke="#41df63" stroke-width="0.8" d="M313.8 155.6l-7.1 -0.7M310.8 239.5l2.2 -1.4l-2.1 -3.4M311.1 231.4l2.6 -1.3M319.5 226.4l2.6 -1l-1.9 -2M314.2 224.2l2.6 3l-2.4 1.4M315.1 230.2l1.4 3.6l2.5 -2.4M292.8 481.4l1.5 6.4l4.6 -0.3M314.9 484.7l0.6 3M303.9 477.2l-0.5 6.1M301.2 489.1l0.8 3M250 252.3l6.4 0l6.4 0M586.1 277l0.7 4.3l2.3 0.6M590 287.4l2.3 0.8M598.4 304.1l-5.2 2.9l-0.5 -3M594.4 287.4l-1.4 4.2M594.5 303.6l5 1l-0.2 2M594.5 287.1l1.8 1.1l-0.4 3.3M579.4 191.5l-0.1 4.9l3.8 0.7M565.9 197.6l3.7 0.5M575.7 192.5l-0.6 2l-3 -2.5M584.1 211.5l5.2 1.4M583.8 199.5l5.2 2.5l0.4 -1.9M593.9 212.4l-0.2 4.4l3.5 -0.1M585 220.9l0.8 3.5M586.7 210.6l-3.2 3.4l-1.5 -3.4M582 195l3.4 4.1l-1.6 1.9"/>
<path stroke="#41df63" stroke-width="1.0" d="M323.6 439l8.8 -2M313.4 443.1l9.3 -1.9M310.4 450.9l10.3 -2.5M317.9 457.4l8.3 -1.5M326.3 473.3l7.5 -1.7M325.8 443.1l1.9 9.5M323 440.9l1.3 6.2M320.6 436.8l0.7 4.1M325.3 462.6l1.8 10.1M327.3 474.2l0.6 3.2M319.2 457l1.7 7.5M314.6 445.6l1.9 10.7M590 309l0.9 5.9M583.3 292.6l1.2 7.9M586.9 325.6l-5.3 0.8M581 321.7l-4 0.8M591.4 313.7l-7.1 1M573.3 248.5l2.7 8.2M571 251.7l1.8 5.1M556.6 498l0.9 6.3M623.1 408.7l2.6 4.9M622.1 418.5l2 3.6M612.4 418.3l4.4 7.6M610.9 417.6l3.1 5.9M609.4 427.1l1.9 3.6M595.5 460.7l4 7.7M595.7 479.9l4.9 9.2M593.3 477.7l4.6 8.5M579 456l-11.3 6M625.3 417.4l-8.4 4.6M616.5 375.7l3.3 5.4M617.8 381l3.7 6.6M625.9 398.3l2.7 4.7M614 384.5l4.4 7.9M618.9 393.3l2.8 4.9M633.2 387.3l-8.6 4.6M628.5 386l-6.8 3.9"/>
<path stroke="#41df63" stroke-width="0.75" d="M293.4 492l-1.7 6.3M252.2 491.9l-0.6 3.8M250.7 491.5l-1.6 4.2M504.4 327.5l-3.5 0.7M634.8 71.3l-0.9 -2l-1.7 0.1"/>
<path stroke="#41df63" stroke-width="0.95" d="M571.5 446.1l2.3 3.2M573.1 451.1l6.9 10.2M564.5 445.4l4.4 6.5M560.9 445.9l2.5 3.4M564.4 450.6l6.2 8.5M565.8 478.3l0.5 0.7"/>
<path stroke="#53e04d" stroke-width="0.85" d="M324 93l-0.2 3l-1.8 1.5M269.1 490.6l2.8 -0.7l3.8 -0.8l2.7 -0.8l2.7 -0.3M508.4 320.9l-1.6 3.6"/>
<path stroke="#53e04d" stroke-width="0.75" d="M322.9 97.2l1.7 0.8M323.6 93.1l-0.4 3M258.2 492.5l0.1 4.6M235.3 487.4l-0.4 3.8M630 74.4l-0.5 -2.3M640.1 68.1l0.2 -2.2l1.5 -1.2M630.4 74.1l-1.4 -1"/>
<path stroke="#53e04d" stroke-width="0.9" d="M284.7 104.8l-4.2 -2.6M286 106l-2.1 5.7M295.3 132.4l-4 4.3M299.8 281.7l2.1 0.6M278.9 285.3l4.6 1.4M293 289.5l3.7 1.1M507.8 487.3l6.2 -0.5l5.7 -2l6.2 -1.6l5.9 -1.8l5.6 -2.6l5.9 -2.4l5.3 -3.2l4.5 -0.7l4.9 3.9M533.3 197.9l3.4 4.4l5.8 2.5"/>
<path stroke="#53e04d" stroke-width="1.0" d="M258.8 345.7l6.1 0.7M258.2 356l6.5 0.3M258.1 358l4.6 0.3M316.3 439.3l6.6 -1.6M312.4 444.5l7.8 -1.6M321.8 448.1l5.7 -1.4M314.7 451l7.9 -1.9M319 451.8l7.4 -1.7M309.4 454.7l3.4 -0.6M314.3 456.8l5.8 -1.2M318.6 459.2l8.2 -2M321 461.7l5.3 -1.3M317.6 470.1l11.6 -2.2M319 471.5l11.2 -2.3M318.7 475l5.6 -1.3M328.4 446.2l1.1 5M324.5 436.5l0.8 4.3M324.7 448.5l1 4.6M323.5 453l1.3 7.4M319.1 442.5l1 4.8M322.1 457.1l2.1 10.6M585.4 293.7l0.9 4.2M587 307.2l2 10.6M584.8 302.2l0.7 4.7M580.9 301.9l2 10.1M578.2 306.6l1.6 8.7M580.8 326.5l-4.3 0.6M579.7 317.7l-4 0.6M591.4 306.9l-6.3 0.9M570.8 255.4l1.8 5.3M564.4 241l2.5 7.4M570.6 258.8l0.7 2.2M570.1 261.1l-1.5 0.5M567.3 240.3l-3.5 1.3M557.1 491.5l-0.5 6.5M590.5 451.4l4 7.6M600.5 470.2l3.1 5.9M588.5 466.4l6.4 11.9M574.8 486.9l-4.4 2.4M569.1 490l-5.6 2.9M610.3 439.5l-8.4 4.5M599.7 445.1l-4.6 2.4M615.1 410.6l-6.3 3.2M622.8 400.3l1.6 2.7"/>
<path stroke="#53e04d" stroke-width="0.95" d="M283.1 292.3l2.5 -9.7M286 281l2.7 -10.4M576.8 446.7l1.4 1.9M579.2 450l0.8 1.2M569.5 445.9l2.7 3.9M563.8 454.3l3.7 4.8M575.1 469.2l4.9 6.6M560.2 459l2.9 4.1M570.5 473.4l4 5.6"/>
<path stroke="#53e04d" stroke-width="0.8" d="M271.8 308.8l1.1 3.4l3.1 -1.2M273.4 303.5l2.4 -0.9l-2.7 -2.8M257.7 305.6l5 -2M263.3 311.5l1.8 6.2M269.5 307.3l2 -0.8M316.4 238.2l2 -1.5l-1.9 -3.6M312.5 240.6l5.1 -2.2M308.4 234.4l1.2 1.5M255.9 479.2l1 3.5M264.7 483l1.6 5.8M592.6 325.4l-4 2.6l-0.9 -1.6M596.3 308l-2.9 1.9l-0.7 -2.4M596.3 325l-2 0.8l-0.5 -2.7M591.5 279.2l0.4 2.7l-2.5 0.1M593.3 289.1l4.5 3.9M593.9 298.4l3.9 1.7M592.4 319.2l-5.6 0.1M585.2 277.5l3.5 0.1l-0.1 2.4M596.2 310.4l0.8 3.7l3.2 0.5M589.6 283.4l0.4 5.6M595.4 292l-2.1 2.2l2.4 1.5M592.5 286.8l2.7 2.9l2.1 -2.7M593.7 323l-3.4 1.8l-1.4 -2.2M596.4 299.4l0.8 1.9l-2.1 1.3M595.3 293.5l1.7 2l-0.6 1.4M591 313.1l-2.2 4.9l2.5 2.9M564.2 195.1l1.8 3.8l-3.6 0.3M570.7 199.4l4.4 1.8M593.5 197.2l-3.2 0.8M586.3 217.5l-2.9 1.2M595.9 195.8l-2.5 3.5M592.8 216.9l4.3 1.8l-2.3 3.4M593 202.4l-0.6 3l1.5 -0.2M582.2 225.6l-0.4 2.6l3.4 0.3"/>
<path stroke="#65e138" stroke-width="0.85" d="M322 97.5l-1 3.5M258 492.1l2.8 -0.7l2.9 0.6l2.4 -0.6l3 -0.8M510 318l-1.6 2.9"/>
<path stroke="#65e138" stroke-width="0.9" d="M309.5 151.2l-4.6 3.6M302.1 276l2.6 0.7M542.5 204.8l6.5 1.9l5.1 -3l5.3 -4"/>
<path stroke="#65e138" stroke-width="0.8" d="M320.6 156.5l-6.8 -0.9M260.4 320.2l2.5 -0.9l-0.4 -1.4M266 313.4l6.7 0.1M259.5 315.9l0.5 5.7M265 303.8l6 -1.2M276.5 307.1l2.2 -0.4M308.1 228.5l2 4.6M314 230.9l2.8 -2.2l1.6 2.1M309.1 230.2l4.8 -2.4M308.4 231l1.7 3.6l-2.1 1.4M308.9 235.4l2 4.4l-2.6 0.7M258 479.4l0.9 3.1l4.1 -1.2M267 479.1l0.7 3.7M595.4 295.4l-2.1 4.4M589.1 288.9l5.5 2.5l1.1 -3.8M567.3 196.8l2.7 1M572.4 202.7l1.3 3.9M568 202.6l-0.1 2.2l1.5 0.4M585.7 206.8l1 3.2M597.2 207.5l-2.6 5l2.6 1.5M587.1 217.4l-0.4 3.8M586 218.2l1.7 4.9M583 203.9l0.6 3.4M580.3 206.7l2.4 4.7"/>
<path stroke="#65e138" stroke-width="1.0" d="M258.4 362l2.6 0.2M263.2 351.1l-1 9.2M319.9 454.5l8.4 -1.8M320.3 448.3l1.3 6.5M324.5 469.4l1.6 7.6M316.9 446.5l2 9M321.2 465.9l1.8 8.4M316.7 457.7l1.4 7.7M313.5 451.8l2.5 10M587.6 294.8l0.8 4.7M578.6 290.3l0.4 1.8M575.9 293.7l2 11.1M580 316.8l0.9 4.6M575.8 332.3l0.7 4.3M580.7 332.8l-7.2 1.2M588.9 320.2l-6.9 1.3M582.1 315.1l-10.7 1.6M591.1 304.5l-5.4 1M588 295l-8.6 1.7M566.8 260.3l-5.7 2.2M576.9 247.6l-5.5 2.1M557.8 479.3l-0.4 5.9l-0.3 6.3M570.2 476.4l-7.3 3.7"/>
<path stroke="#65e138" stroke-width="0.75" d="M237 487.8l-1.6 4M231.9 486.6l-0.8 5.8l-4 2.8M508.3 320.6l2.4 1.7M641.9 67.1l1.3 2.3M622.9 79.4l2 1.8"/>
<path stroke="#65e138" stroke-width="0.95" d="M574.9 450.9l5.1 6.9M571.7 460.5l7.9 10.8M568.2 460.1l6 8"/>
<path stroke="#77e12c" stroke-width="0.9" d="M290.9 105.4l-6.2 -0.6M286 106M300.7 128.3l-5.4 4.1M284 274.6l4.2 1.2M298.6 278.8l3.4 1M279.3 276.2l7.8 2.1M250 252.3l-0.6 6.3M334.6 276.1l-2 6.8l-1.4 6.6M614.2 309.7l2.5 -5.7M553.8 106.5l-0.4 6.1l-0.3 6.1l-0.4 6.6l0.6 5.9"/>
<path stroke="#77e12c" stroke-width="1.0" d="M265.1 350.2l7.9 0.5M264.3 358.3l5 0.4M258 359.2l6.7 0.8M269.8 349.4l-1 9.4M265.9 346.2l-0.5 6.6M264.3 340.5l-1 9.5M328.3 449.7l11 -2.5M313.8 453.9l5.3 -1.1M311.1 458.7l4.8 -0.9M316.4 463.5l1.4 5.7M313.4 458.1l1.8 8.9M585.7 307.9l1.1 7.1M575.9 319.8l1.5 7.4M572.4 310l1 6.3M566.1 324.3l1.6 11.4M578.4 334.9l-5.6 1.1M577.8 329l-5.3 0.9M571 330.2l-9.8 1.8M582.4 312.5l-10.8 1.9M585.5 309.2l-10.7 1.8M590.7 301.4l-10 2M583.4 301.4l-7.2 1.1M575.3 247.9l1.3 3.4M571.6 247.9l3.3 8.6M559.2 241.6l3.3 8.9M559 247l1.8 4.8M561.6 253.9l3.2 8.5M554 239.3l1.9 5.2M566.6 258.5l-4.3 1.6M576.5 253.1l-8 2.8M566.4 256.7l-8.5 2.9M569 253.2l-8.9 3.5M572.6 240.9l-6.2 2.5M564.3 244.2l-7.1 2.9M562 242.2l-7.4 2.7M558.7 473.2l-0.9 6.1M613.7 403.7l3.7 6.5M618.6 412.3l2.3 4.2M587.4 480.2l-11 5.9M611.1 455.6l-9.3 4.7M618.6 435.1l-6.4 3.4M573.2 451.9l-9.6 5.5M627.1 373.5l5.5 10"/>
<path stroke="#77e12c" stroke-width="0.8" d="M273.7 305.2l3.4 -0.5l0.4 2.4M264.8 319.6l-0.1 4M257.8 304.4l5.4 -1.7l-0.2 -2.4M259.3 314l1.1 3.3l-3 -0.1M256.6 315.5l6.5 -1.6M276.1 301.5l0.6 6.8M270.8 312.6l3.6 -0.3l0.4 1.5M273.7 305l3.3 -1.3l1.8 2.5M266.4 316.4l5.4 -1.1l1.1 2.4M257.1 319l6.7 -1.5M258 319.6l4.7 -1.7M264 474.7l0.7 5.4M271.4 474.6l0 3.6l2.2 0.5M594 318.3l2.7 2.6M594.6 307.4l-2.8 2.1M596.3 303.8l-1 3l3.6 0.1M582.4 276.6l-0.9 4.3M594.4 299.4l-1.2 3.4l3.7 -0.3M569.1 202l2.7 4.8l-2.8 0.5M573.8 194.9l-4.4 2.7M559.3 193.7l2.4 3l3.7 -1.1M586.9 223.3l-2 0.5l-1.9 -3.3M591.3 226l-2.2 1.5M595.1 214.3l3.1 3.2l-1.9 1.1M583.7 192.2l-3.2 2.8"/>
<path stroke="#77e12c" stroke-width="0.85" d="M246.5 489.9l1.7 1.2l3.7 1.1l3.2 0.4l2.9 -0.5M510 318M632.7 71.5l3.2 -0.7l3.8 -2.4l2.3 -1.4"/>
<path stroke="#77e12c" stroke-width="0.75" d="M234 487.1l-1.7 4M235.7 487.5l-1.1 3.3M563.3 273.6l0.7 -2M624.1 78.5l2.6 1.5"/>
<path stroke="#89e229" stroke-width="0.9" d="M296.7 102.9l-5.8 2.5M306.3 125l-5.6 3.3M314 147l-4.5 4.2M289.9 279.1l7.9 2.1M283.2 296.6l4.8 -0.2M283.9 315.1l7.3 -0.3M214 403l0.7 4.1M215 408.3l0.9 5.3M215.6 426.9l1.1 6.6M249.4 258.6l-0.5 6.2M325.2 268.1l6 3.6l3.4 4.4M611.7 316l2.5 -6.3M553.3 131.2l3.5 4.8l1 6.3l-0.6 5.7l-0.4 6.3"/>
<path stroke="#89e229" stroke-width="0.8" d="M327 157.4l-6.4 -0.9M276.6 305.6l0.1 4l2.5 -0.3M263.6 307.8l1.3 5.7M256 308.8l5.9 -1.1l0.1 -3.6M275.7 308l-0.1 6.5M267.6 309.2l0.6 2.5M267.3 315.4l5.1 0l0.6 2M258.4 311.6l1 3.8l2.2 -1.5M270.9 314.1l0.4 2.4M265.3 307.7l6.3 -0.6l0.6 1.9M256.3 298.7l1.8 4.7M261.6 302.3l5.4 0.1l-0.1 -1.9M260.4 304.3l-0.1 4.9M265 312.5l3.6 -0.3M255.3 312.4l6.5 -0.9M271.1 479.3l0 3.1l2.3 0.5M269 485.6l1.5 5.2M273.6 474.9l-0.1 3.3l-2.4 -1.2M269.3 476.1l0.7 6l3.4 -1.1M591 303.5l1.4 4M595.3 303.9l-4.7 3.5M593.8 288.3l0.5 4.8l-3.2 0M596.7 301.9l0.1 2.4M591.2 313.1l-0.2 2.1M594.6 294.9l-0.2 3.1l3.5 -0.1M596.1 328.4l-1.6 1.7l2.2 2.1M596.1 299.4l-2.8 1.1l0.5 1.7M562 198.8l3.7 4.7M595.6 228.9l-2.4 0.4l1.6 3.4M574.7 233.3l-0.1 4.6l-3.5 1.1M562.7 233.2l-4.8 1.1l1.6 2.2M568.7 229.6l1.7 1.3M573.6 225.9l-2 2.4M587.1 230.8l-4.4 1.4"/>
<path stroke="#89e229" stroke-width="1.0" d="M345.4 381.8l4.1 4.9M265 344.8l10.3 0.8M267.1 351.1l8.9 1M266.1 356.4l8.7 0.5M262.4 362.2l11.2 0.8M275.4 342.6l-0.3 5.2M272.6 344.8l-1.3 10.9M308.8 461.5l8.2 -1.9M310.2 464.4l9.3 -2.3M314.9 473.7l2.2 -0.4M330.5 443.2l1.8 8.1M332.7 453l1.3 5.9M311.4 447.4l1.9 9.9M308.7 457.5l1.7 7.2M530.6 277.7l1.9 -1.2M534.7 284.2l6 -3.5M535.9 274l4.7 7.9M572.6 304.1l1.4 6.5M577.7 328.4l1.3 6M569.3 301.1l1.1 7.3M570.6 309.8l1 6.8M568.3 308.4l1 5.2M571 322.7l1.6 8.7M564.7 314.3l1.1 8.1M583.9 308l-5.1 0.7M583.7 305.8l-10 1.8M577.8 297l-11.4 2.3M579.9 290.9l-3.5 0.7M556.7 240.7l1.9 5.1M559.7 254.6l3.1 8.2M552.2 247.5l2.5 7.3M555.1 256l1.5 4.3M566.7 248.7l-8.8 3.1M560.9 467.2l-2.2 6M600.7 460.8l-6.9 3.5M578 472.4l-6.5 3.3M623.8 422.8l-9.1 5.2"/>
<path stroke="#89e229" stroke-width="0.95" d="M283.9 316.5l0.1 1.5"/>
<path stroke="#89e229" stroke-width="0.85" d="M233.7 487.4l2.6 1l4.1 -0.1l1.9 1.6l4.2 0M627.2 76.1l2.8 -2.5l2.7 -2.1"/>
<path stroke="#89e229" stroke-width="0.75" d="M226.9 485.5l-1.5 6.2M228.5 485.8l-1.1 6.2l2 4.8M565.4 274.8l1 -3.6l1.3 -2.7"/>
<path stroke="#9be326" stroke-width="1.0" d="M314.7 243.9l8.1 -4.7M343.6 383.2l3.5 -3M348.7 378.7l10.5 -9.3M345.5 384.4l7.4 -6.8M326.2 307.8l1.6 2.6M265.3 343.2l10.6 1M266.2 346.6l7.5 0.9M274.4 350.8l7.6 0.5M258.3 354.3l8.2 0.5M268 364.2l8.6 0.7M267.7 368.7l-0.5 4.5M268 345.7l-1.1 11.3M265.3 354l-0.8 11M534.1 286.7l6.3 -3.4M528.8 295.5l5 -2.7M540.7 285.3l2.7 4.9M531.2 276.2l4.4 8.1M532.2 283.5l3.2 5.2M583 300l0.9 5.5M584.2 307.3l0.7 4.6M571 296.6l1.2 5.7M574.3 312.2l1.4 6.5M570.8 299.9l1.3 8.1M573.7 318.5l1.8 11.7M565.2 292l1.2 6.6M566.1 314.2l1.3 6.4M560.3 328.4l0.8 4.2M571.5 336.2l-1.5 0.3M575.4 327.3l-4.3 0.6M579.9 324.1l-9.1 1.5M577 309l-6.5 0.9M562.8 251.4l2 5.2M556.8 250.9l2.7 7.3M552.9 244.2l2.6 7M569.8 250.3l-6.3 2.3M562.5 461.1l-1.6 6.1M563.4 499.6l5.2 9.9M613.8 428.5l-8.4 4.9M615.6 413.3l-4.5 2.5"/>
<path stroke="#9be326" stroke-width="0.9" d="M303 100.3l-6.3 2.6M314 147M294.2 314.6l5.6 -0.2M294.3 318.6l5.7 -0.1M220.4 403.5l1.7 9.8M217.9 403.3l1.2 7.2M221.6 425.6l1.1 6.7M222.3 448.9l1.1 5.6M214 417.1l1 6.1M223.7 476.8l1.3 8.2M248.9 264.8l-0.6 6.3M278.5 268l-1.4 6.6M311.7 266l7 0.4l6.5 1.7M556.8 154.3l-0.1 6.6l-1.2 5.8l-1.2 6l0 5.9l2.7 5.9"/>
<path stroke="#9be326" stroke-width="0.8" d="M327 157.4M264.2 307l1.9 5.1l4.3 0.1M267.9 315.3l3.2 -0.4M256.5 314.2l5.8 -2.4l-1 -3.9M258.2 303.7l4.3 -0.5M274.3 305.6l1.4 3.7M265.7 319.6l4.3 -0.4l-0.1 1.8M263 310.4l5.2 -1.4M272.4 319.8l0.5 3.6l2.2 -0.9M267.2 312.9l5.2 -1.5M261.6 300.5l1 5.7l-4.1 0.6M275.9 320.2l0.6 3.4l3.8 0.4M263.3 314.8l1.1 6.3M596.2 289.4l1.1 4.5M585.9 282.8l-1.3 2.2M592.6 295.3l4 1.5l-0.2 1.5M568.1 203l1.3 4.4M562.5 203.9l1.4 3.8M568.7 198.4l-0.1 2.6l-3.1 -1.7M563.3 197l-3.6 3.2M587 232.3l0.5 4.9l2.1 0.5M568.4 223l2.5 2l0.6 -1.8M587.7 234l2.1 2.7l2.1 -1.6M581.2 226.7l1.1 2M576 225.1l0.7 1.9l-3.5 2.2M574.1 233l-4.4 0.8M593 228.1l-1.7 5l-2 -0.6M586.6 229.9l-1.6 1.8M588.3 231.4l-4.5 2.7M579.3 232.7l-1.3 3.8l1.4 0.8M578.4 223.3l-4.4 1.8l1.2 3.8M591.9 214.4l4.2 2.7M591.8 203.8l2.4 0M589.2 208.4l2.6 0.4l-0.6 1.6M594.6 231.7l-2.4 1.7l-1.2 -0.9M595.2 194.3l2 3.4l1.8 -0.3M593.4 224.1l-0.1 2.4l3.5 1.3M584.9 211.1l2.7 1.7"/>
<path stroke="#9be326" stroke-width="0.95" d="M298.5 303.5l0.1 7.9M295.8 302.3l0 11.2M292.3 292l0.5 10M290.1 292l0.1 5.5M287.9 313.4l0 4.8M560.5 452.8l4.3 5.9M565.6 459.8l4.3 5.9M571.1 467.3l5 7.1"/>
<path stroke="#9be326" stroke-width="0.85" d="M225 485l2.4 1.1l4 0.5l2.3 0.8M575.7 286.7l1.8 3.3M622.4 79.7l2.5 -1.5l2.3 -2.1"/>
<path stroke="#9be326" stroke-width="0.75" d="M233.9 487.1l-2.2 6.2M232.6 486.8l-0.8 2.6M574.3 282.3l-1.1 1.5M569.6 277.2l-1.2 1.1M573.5 280.4l-2 1.8l-0.8 2.1M570.3 277.7l0.5 -1.9l3 -1.1M561 272.3l0 -3.5l0 -2.6M577.5 289.9l2.1 -0.7M567.6 429l0.8 -2.1M625 77.9l0.2 1.6M622.6 79.6l0.8 1.4M631.7 73.2l2.3 1l1.7 -0.5"/>
<path stroke="#aee323" stroke-width="1.0" d="M324 255.4l8 -4.9M316.6 237.3l6.7 12.3M342.4 382.5l8.3 -7.3M352.7 365.4l6.6 7.5M352.9 373.3l3.9 4.2M292 334.2l6.8 -5.8M299.6 332.5l5.2 -4.3M295.7 326.6l6.5 7.4M334.2 311l-7.4 4.4M277.3 344.4l6.1 0.6M277.5 352.3l7.4 0.9M278.1 355.5l8.5 0.5M266.9 360.2l8.1 0.9M270.8 366l11.5 1M259.4 366.4l7.1 0.6M261.1 374l9.5 1.1M274.6 356.6l-0.3 5.8M271.1 357.7l-0.8 6.1M270.1 365.9l-0.7 5.9M268.6 360.7l-0.7 5.8M268.5 340.1l-0.4 4.1M266.7 359.4l-0.8 7.4M264.4 366.4l-0.8 11.5M250.8 448.8l0.6 6.9M262.1 458.3l-9.1 1M251.6 434.9l-10.6 1.1M254.4 428.6l-4.7 0.4M245.6 428.1l-4.7 0.5M311.9 460.6l1.7 7.3M541.5 282.7l1.6 -0.9M523.9 294.6l4.9 -2.8M524.3 304.8l6.9 -4.1M543.2 296l6.1 -3.2M534.3 274l5.4 9.5M536.2 285.3l4.1 7.4M533.4 289.1l3.4 5.4M530.6 292.3l4.4 8.1M530.2 294.8l3.2 5.9M525.3 291.2l3.9 6.4M524.5 293.1l3.1 5.7M581.7 291.9l1.1 6.9M569.9 291.2l0.7 3.3M566.7 300.2l1.4 7.1M567.6 321.4l2.4 11.2M569.8 328.1l-5.4 0.8M572.5 321.3l-8.4 1.5M574.7 318.5l-4.2 0.6M570.1 314.6l-9 1.6M573.9 311.2l-8.6 1.4M572.9 307.7l-10.1 1.8M556.5 245.9l2.8 7.5M547.5 239.3l2.1 5.4M574.8 243.5l-4.7 1.7M560.6 238.5l-9.3 3.2M567.9 449.6l-3.1 5.7l-2.3 5.8M569.3 510.9l4.2 8.1"/>
<path stroke="#aee323" stroke-width="0.9" d="M311.5 122l-5.2 3M291.7 292.1l3 -0.1M226.3 437.1l1.8 10.1M223.1 435l0.9 5.4M218.3 426.8l1.9 10.1M223.4 422.4l6.5 -1.7M229.6 431.4l10.8 -2.7M227.6 434.9l9.7 -2.6M243.7 465.5l4.9 -1.3M230.5 478.4l4.3 -1.2M248.3 271.1l-0.5 6.2l-0.6 6.3M277.1 274.6l-1.4 6.6l-1.3 6.6l-1.4 6.6M606.8 317.6l4.9 -1.6M557 184.5l3 5.5"/>
<path stroke="#aee323" stroke-width="0.95" d="M293.6 316.1l0.1 2.5M285.5 306.9l0 6.5M285.5 314.4l0.1 3.7M577 475.6l2.5 3.4"/>
<path stroke="#aee323" stroke-width="0.8" d="M273.6 316l6.9 -0.8l-0.9 -4.7M260.6 316.9l0.4 4.8l3.6 -1.2M258.4 316.6l1.3 4.8l2.4 -1.2M255.7 305.7l4.7 -1.6M260.3 316.7l3.4 -1.2M259.4 306.3l6 -1.3l2.1 3.5M268.8 304.5l2.3 -0.7l-3.2 -3.5M269.7 302.4l0.3 6.7l3.6 0M563.2 232l-3.1 1l1.3 1.7M570.6 237.2l-4 0.1l0.9 -3.7M561.6 235.1l-1.4 1.8l2.3 3M576.5 227.6l-1.8 1.5l-0.5 -1.6M570.1 223.8l-2.2 3.9M570.1 225.5l-0.6 5.8M589.3 229.6l1.4 2.9M593.2 234.8l-4.2 2M580.9 222.5l-0.1 2.3l3.6 0"/>
<path stroke="#aee323" stroke-width="0.85" d="M572.6 279.5l1.8 1.6l0.7 3.2l0.6 2.4"/>
<path stroke="#aee323" stroke-width="0.75" d="M570.6 277.8l2.3 -3M564.3 274.2l1.3 -1.3l1.9 0M563.3 426.5l1.1 -1.3l-0.2 -1.7M569.8 430l-0.1 1.7M565.7 427.9l2 -3.4M546.5 411.2l1 -1.2M571.1 430.7l1.9 -2.2M569.4 429.9l-0.2 2.2l-1 1"/>
<path stroke="#bfe420" stroke-width="0.8" d="M321 113.9l8 -5M322.5 114.8l6.5 -4.2M323.2 116.1l7.9 -5M320.2 127.8l8 -4.8M330.7 124.8l10.7 -8M308.9 123.5l7.5 -5.2M311.8 138.5l3.5 -2.4M334.9 113.5l5.4 -3M335.5 114.9l5.8 -3.3M317.7 103.8l4.5 -2.8M320.2 107.6l7 -4.4M323.3 147.6l7.9 -5M323.8 149.1l9.3 -6M315.4 102.3l3.5 5.3M606.4 414.3l-3.8 3M580 434.6l3.9 3.9M590.5 427.6l-2.6 6.2l-3.3 -2.8M599.3 419.1l-1.3 6.8M563.2 231.9l2.9 3.5M578.1 228.7l-2.4 3.6l2.7 0.5M575.9 232.6l3.9 0.7l-0.2 -1.7"/>
<path stroke="#bfe420" stroke-width="1.0" d="M319.4 230.8l12.4 -7.7M314.2 242.6l18.6 -11M324.8 238l9.5 -5.5M316.1 245.7l17.1 -10.4M317.6 247.4l15.2 -8.3M323.7 254.9l14.3 -7.9M327 259.1l11.8 -6.5M339.3 380.7l9.8 -9M347.2 375.7l5.3 -5.2M351.6 374.4l4.4 -3.9M349.3 358.9l8.3 9.7M348.3 363.4l7.6 8.8M342.6 366.3l6.7 7.3M348.6 378.2l5.2 5.4M298.1 331.4l4.3 -3.6M296.5 337l8.3 -7.9M336.7 294.4l1.1 1.9M337 300.8l3.6 5.9M339 307.2l4.8 8.4M335.4 303.7l2.8 5M333.7 305.6l5 8.3M338.2 315.4l-4.2 2.5M334.3 308.5l-9.1 5.4M259 341.5l2.9 0.3M286.1 353.3l4.1 0.5M277.3 357.1l6.6 0.3M275.5 363.1l8 0.5M259.1 365l10.7 0.9M260.4 370.6l10.3 0.8M273.1 371.6l11.4 0.8M289.1 344.1l-0.7 10.5M283.4 359l-0.7 9.3M278.2 363.1l-0.7 8.2M267.1 374.6l-0.4 3.8M262.3 436.6l0.8 12.1M258.2 444.3l0.4 6.1M252.5 424.1l0.4 5.1M253 431.7l0.9 10.8M254.1 444.9l0.6 8.4M254.8 454.4l0.3 4.2M248.7 423.2l0.9 11.7M245 408.5l0.7 6.7M249 445.9l0.8 7.5M259.7 445.6l-13.3 0.7M245.6 446.4l-4.7 0.2M267 441.7l-4.9 0.4M252.3 427.3l-5.2 0.6M246 414.7l-4.4 0.4M328.9 436.1l1.4 6.3M534.1 275.6l2.7 -1.6M533.1 284.5l5.6 -3M539 287.1l4.3 -2.6M528.9 297.6l5.8 -3.2M525.9 307.1l8 -4.5M536.1 304.5l4.9 -2.6M524.9 313.2l5.1 -2.9M515 323.7l5.4 -3.2M536.7 312.5l6.9 -3.6M541.1 282.8l2.1 3.6M552.2 301.7l0.8 1.3M547.7 297.9l3.8 6.8M534.4 278l4 7.4M541.9 299.5l3.8 6.2M537.3 295.4l4.1 6.6M535.6 301.5l5.1 9.4M534.1 302l3.1 5.8M577.2 317.6l1.6 10.2M567.9 291.5l1.2 7.8M569.6 315.5l1.1 5.8M563.6 302.4l2.3 10.9M562.9 301.7l1.6 11.5M569.6 319.2l-9.4 1.4M568.9 317.1l-5.7 0.8M560.5 309.9l-7.5 1.3M573.3 305l-5.6 1.1M552 249l-5.7 -3.6M573 250.7l1.2 -6.8l1.3 -6.9l1.5 -6.7M553 240.5l3.3 8.9M548.9 247.5l1.5 3.9M548.7 252.2l0.7 2M552.4 245.7l-6 2.2M500.9 424.1l3 6.8M570.6 444.1l-2.7 5.5"/>
<path stroke="#bfe420" stroke-width="0.9" d="M308.5 98.8l-5.5 1.5M238.8 420.6l1.4 9.6M231.9 416.4l0.8 4.2M234.7 462.6l1.6 7.4M222.4 415.1l1.4 7.9M216.6 417.2l1.2 6.6M214 438.3l1.4 8.1M228.6 417.8l8.4 -2.1M232.1 420.2l6.2 -1.6M223.5 425.7l4.2 -1M225.7 442.1l5.3 -1.4M214.7 454.2l10.8 -2.7M223.2 455.7l11.3 -2.7M223.1 482.5l5.9 -1.4M273 294.4l-1.4 6.6M600.5 317.3l6.3 0.3"/>
<path stroke="#bfe420" stroke-width="0.95" d="M298.6 312.9l0.1 6M293 304.8l0.5 10M597.2 419.2l9.8 -6"/>
<path stroke="#bfe420" stroke-width="0.85" d="M564.3 273.8l3.1 2.4l2.6 1.5l2.6 1.8"/>
<path stroke="#bfe420" stroke-width="0.75" d="M565.5 274.9l2 -1.8M558.2 423.5l-2.1 1.9M555.1 421.7l3 -2.2M565.5 427.8l0.5 -1.7M556.6 422.6l1.8 -2.5M551.2 418.3l-1.5 1l-0.7 1.3"/>
<path stroke="#c8e320" stroke-width="0.8" d="M310.4 108.9l6.8 -4.9M312.9 112.7l6.6 -4.8M314 113.7l7.6 -5.5M334.4 132.7l6.7 -5.6M335.8 135.4l6.1 -5M332 148.5l8.1 -5.4M320.1 167l9.6 -8M323 168.5l7.8 -6.5M322.5 170.8l10.3 -8.5M320.4 129.4l9.8 -5.8M322.1 131.9l9.8 -5.8M352.4 166l8.9 -5.6M343.7 127.9l5.8 -4M344.3 129.2l5.8 -3.8M323 136.3l10.3 -5.5M308.2 116.7l4.2 -2.9M308.7 121.8l6.1 -4.2M309 125.2l8.2 -5.6M311.1 137.2l3.9 -2.6M312.4 139.9l3.2 -2.1M313.1 141.3l4.3 -2.9M313.7 142.6l4.9 -3.3M338 141.2l10.8 -7.3M338.3 142.8l11.4 -7.7M329 173.2l10.8 -7.8M337.5 115.5l4.8 -2.8M336.8 117.6l6.6 -3.7M338.2 166.8l11.7 -6.9M307.6 110.4l5.9 -3.2M307.9 113.6l7 -3.8M318.8 104.9l5.1 -3.2M322 146.7l9.2 -6M322.2 101l6.8 9.9M319.5 128l6.5 10.3M593.4 430.6l-3.6 0.2M586.2 435.3l4.1 2.2M594.3 429.4l-3.2 0.3M604.4 419.3l2.8 2.3l-0.9 3.2M562.1 196.5l-1.4 2.2l-2.1 -3.3M561.5 196.4l0.3 2.1l-1.6 0.5M577.9 225.4l-2.1 0.3M581 230.8l0.7 3.3l-1.3 0.9M571.7 224.1l3.7 0.7l0.3 3.2M583.3 235.3l2.6 1.3l-1.3 2.1M576.4 221.1l1 3.6M576.5 226.1l-1.8 1.5"/>
<path stroke="#c8e320" stroke-width="1.0" d="M323.2 218.2l10.5 -5.8M319.1 231.4l10.7 -6.1M314.7 241.5l12.5 -7.7M320.7 251.3l24.6 -13.4M323.2 254.4l5.5 -3.4M327.7 260l15.9 -8.6M327.1 203.2l5.8 10M324 214l4.9 8M320.5 228.4l13 24.2M348 67l-0.4 6.5M341 381.7l4.8 -4.7M347.1 385.3l4.7 -4.4M348.1 385.9l6.3 -5.4M349.9 374.3l4.8 5.4M342 368.6l8.5 8.8M351.2 378.2l3.8 3.9M292 327.9l5.3 5.5M297.9 334.1l5.4 5.6M292 338.6l3.5 3.8M327.2 302l5 8.3M348.5 323.2l-8.2 4.6M354.9 305.5l-9.5 5.6M336.6 314.1l-8.8 4.8M341.6 309.1l-12 7.3M354.1 297.1l-4.6 2.6M349.8 292.6l-4.4 2.6M339.5 295.1l-9.7 5.8M284.5 345.1l6.6 0.7M275.7 347.8l10.6 1.2M283.7 351.4l7.7 0.5M288.5 356.2l2.6 0.1M271.3 358.8l9.2 0.5M277.1 361.3l7.9 0.9M268.5 367.2l5.8 0.4M275.7 367.7l5.8 0.5M288.1 368.7l2 0.2M267.3 368.9l5.9 0.5M282.1 370.3l7.3 0.7M260.9 372.8l10 0.8M280.2 376.2l5.7 0.6M271.9 376.8l8.9 0.6M286.6 343.3l-0.5 8.4M274.3 363.3l-0.4 7.1M282.6 464.9l0.2 2M278.3 433.1l1.1 9.8M269.6 443.2l0.9 11.7M261.3 441.2l1 9M257.3 430l0.4 5.3M256.6 435.6l0.6 8.9M249.3 409.3l1.1 12.3M250.5 423.2l0.4 5.2M252.4 445.5l0.9 10.7M253.5 458.5l0.4 4.3M244.9 416.9l0.4 5.7M247 446.6l0.8 11.2M242.2 431.1l1.3 12.4M243.6 444.6l0.9 8M279.5 461.6l-4.9 0.6M266 459.6l-13.7 1M283.3 453.6l-12.3 0.7M256.4 455.1l-10.1 0.6M251.8 451.6l-5.5 0.5M276.8 444.6l-5.6 0.3M282.2 438.4l-4.2 0.2M262.6 437.5l-7 0.6M248.3 429.1l-7.5 0.6M273.8 422.4l-4.6 0.5M532.7 280.8l8.2 -4.7M523 296.6l7.4 -4.4M536.8 293.2l7.1 -4M524.8 302.3l7.4 -4.6M539.9 299.2l9.6 -5.4M526.6 314.4l9.3 -5.5M522.4 319.2l5.8 -3.4M550.5 302.4l2.5 -1.5M530.3 317.5l4.5 -2.4M535.5 314.7l8.2 -4.4M511.6 333l7.4 -4.2M538.5 317.7l7.1 -4M539.5 287.4l2.9 5.4M529.9 308.4l3.1 5.7M522.7 325.1l3.7 6.1M519.5 328.1l3.6 6.2M511.5 321.9l4.5 8.1M561.9 294.1l1.5 7.1M562.1 323.2l-6.3 1.2M561.6 318.2l-8.6 1.3M568.4 310.2l-10.9 1.5M557.5 261.4l-2.9 -5.7l-2.6 -6.7M566.2 294.2l-6.7 2.7l-6.1 2.1M577 230.3l1.5 -6.8l1.5 -6.8M560.8 236l1 2.9M562.4 240.5l2.9 8.3M563.3 239.6l-5.8 2M522 426.9l3.7 6.8M516.2 426.1l4.5 7.4M519.5 426.6l2.3 13.6M515.3 426l2.7 9.7M520.8 445.4l2.2 7.6M514.6 434.6l3.1 5.2M523.5 449.4l1.6 2.6M509.5 435.8l1 4.4M500 428.3l4.9 9.4M574.1 438.9l-3.5 5.2"/>
<path stroke="#c8e320" stroke-width="0.9" d="M315 100.5l-6.5 -1.7M318 120l-6.5 2M291.7 299.4l7.6 -0.5M283.4 302.5l4.6 0M283.6 307l2.7 -0.1M242.2 469.6l0.3 1.4M222.3 403.6l1.6 7.7M228.4 449l0.7 4.3M217.2 436.5l1.1 6.8M215.9 463.5l0.6 4.1M224.2 405.2l5 -1.1M232.8 405.8l4.5 -1.1M214 424.8l6 -1.5M217.7 427.2l4.6 -1.2M214.4 451l9.1 -2.5M538.3 373l3 0.3M533 380.9l3.1 0.3M539 396.8l1.7 0.1M594 317l6.5 0.3M599.2 67l1 6.4l0.4 6.4l-1.8 6.3l-1.8 6.3"/>
<path stroke="#c8e320" stroke-width="0.95" d="M295.9 315.1l0 3.6M582.8 425.9l1.3 -0.7M584.4 432.5l6.4 -3.6M598.2 427.4l5.6 -3.2"/>
<path stroke="#c8e320" stroke-width="0.85" d="M558.8 271l2.9 1.9l2.6 0.9"/>
<path stroke="#c8e320" stroke-width="0.75" d="M563.7 273.8l-1.2 2.8M564.6 274.3l-1.3 1.7M545.8 410.2l-2.2 1.6M561 425.2l-0.2 1.8l0.6 1.4M577 433.6l1.5 -1.3l1.7 -2.3M555.6 422l-2.2 1.7l0.7 2.6M569.7 430l0.5 -2.8"/>
<path stroke="#d0e21f" stroke-width="0.8" d="M323.7 117.5l7.9 -4.9M309.3 127.3l7.7 -4.5M317.5 150.7l7.9 -5.3M318 152.2l8.3 -5.6M318.1 155.7l11.1 -7.4M318.2 157.5l11.4 -7.6M313.5 110.4l5.8 -4.2M335.7 133.5l6.4 -5.3M342.6 185.1l11 -6.6M333.7 149.2l7.1 -4.8M334.3 150.6l7 -4.7M335.8 151.4l5.7 -3.8M320.6 168.5l10.6 -8.8M321.5 130.6l9.1 -5.5M354.1 166.7l7.4 -4.7M354 168.5l7.7 -4.8M342.8 126.7l6.1 -4.2M344.2 131.1l6.5 -4.3M324.3 139l10.8 -5.7M327.5 123.5l12.5 -9.4M329 124.3l11.5 -8.7M330.7 126.7l11.9 -8.9M331.4 128.1l12.7 -9.6M322.4 172.4l5.5 -4.2M324.7 176.3l6.7 -5.1M308.4 118.4l4.5 -3.1M308.5 120.1l6.3 -4.3M338.9 144.2l12.5 -8.4M327.2 172.7l10.2 -7.4M338.6 164.8l9.9 -5.8M340.3 167.3l10.5 -6.2M307.7 112l5.9 -3.2M308.2 116.8l7.6 -4M318.4 106.9l7.1 -4.4M322.7 144.5l7.6 -5M345.3 146.9l9.7 14.4M342.1 163.5l9.4 14.8M587.7 424.6l-2 5.7M602.2 417.6l1.3 2.9l4.1 -1.1M581.2 429.4l3.5 3.3M559 236.6l3.1 1.5M578.7 224.8l2.2 0.6M594.8 231.3l-5.1 0.6M573.8 229.2l-3.6 0.1l0 1.6M580.8 224.6l1.1 4.1l-3.1 2.1"/>
<path stroke="#d0e21f" stroke-width="0.9" d="M329.1 122.5l2.8 4.7M342.1 127.1l3 4.4M335.3 113.3l2.5 4.4M317.4 104l2.5 4M321 101l-6 -0.5M318 120M241.5 405l0.4 2.7M238.9 412.4l1.1 5.9M232.2 430.8l1.4 9.3M234.2 444l1.1 6.8M238.1 469.3l0.8 4.6M224.6 414.5l1.7 8.1M228.2 431.6l1.2 6M229.8 439.3l2.4 11.5M224.4 442.9l1 5.8M214 403.4l1 -0.3M240.3 418.1l1.1 -0.3M214 428.1l2.6 -0.7M239.7 425.2l1.3 -0.4M221.4 433.3l7.1 -1.7M214.9 457.6l6.1 -1.4M225 468l5.1 -3.7M500 434.4l10.5 -3M504.5 437.5l9.1 -2.4M528.7 434.8l2.4 -0.6M519.8 450.7l7 -1.9M521.2 453.7l0.9 -0.3M594 317"/>
<path stroke="#d0e21f" stroke-width="0.95" d="M326 186.4l0.7 -0.4M589.7 427.4l6.9 -4M597.9 422.6l5.1 -2.9M590.2 431.9l6.3 -3.6"/>
<path stroke="#d0e21f" stroke-width="1.0" d="M325.4 206.4l4.4 -2.8M323.9 214.6l10 -5.9M323 219.8l18.3 -10.2M315.8 245.3l16.7 -9.1M320.9 251.6l14.9 -9.2M333.3 249.7l8.4 -5.2M324.9 256.4l22.3 -12.7M331.4 264.1l13.2 -7.6M329.7 203.6l12.1 19.9M321.4 226.3l4.6 7.3M347.6 73.5l-2.6 6.6l-3.9 5M338.9 369.3l11.3 -10.5M351.1 358l7.8 -7.2M346.9 368.5l5.1 -4.9M347.1 371l11.4 -10.3M349.9 370.9l9 -8.3M357 369.6l2.1 -1.8M349.5 349.6l5 5.5M340.6 360.2l10.8 11.5M345.9 378l6.7 7.1M291.9 345.8l7.9 -7.2M301.2 337.3l7.3 -6.7M307.2 328.6l6.5 7.3M301.8 327.7l3.8 4M352.1 293l3.1 4.8M355.8 298.8l5 8M347 292.3l4 7.4M332.5 295.7l5.6 9.8M344.4 316.7l4.4 7.7M339.3 310.7l5.2 9.5M339.9 316l6.5 10.9M332.3 307.2l2.2 3.5M339.1 318.2l6.7 11M337.8 319.6l4.6 7.7M354.7 313.9l-10.6 5.8M342.5 320.6l-9.6 5.1M346.9 314.7l-7.2 4.1M343.5 312.3l-3.8 2.2M359.4 293.9l-4 2.4M342.5 303.8l-7.3 4.2M357.2 293.6l-11.1 6.2M344.6 300.7l-6.8 3.8M342.6 299.5l-9.1 5.1M332.2 305.3l-4.7 2.6M336.2 294.6l-8.7 5.4M287 362.4l3.6 0.4M278.1 365l5.5 0.5M291.4 344.8l-0.4 4.2M286 353l-0.6 8.7M285.3 364.1l-0.5 7.6M284.6 342.6l-0.3 4.1M279 353.4l-0.7 7.9M273.7 352.3l-0.6 6.1M214 388.3l9.5 1.9M225.3 390.5l14.8 2.8M224.6 389.8l-1 3.8M219.1 377.7l-2.5 14M300.4 442.6l0.7 7.5M295.4 429.6l0.8 13.4M296.3 445.2l0.2 4.5M293.9 445.7l1.3 13.2M290.1 426.5l0.5 4.3M289.7 440.5l0.6 7M288.6 443.2l1.2 11.6M290 456.4l1.2 11M284.8 423.3l1 10.2M286.5 441.4l1 10.5M269.8 424.4l0.4 4.2M270.6 456.4l0.6 7.7M259.5 425.7l1.6 13.6M258 410.8l0.2 5.1M259.6 441.3l0.6 12.9M256.1 410.5l0.6 9M256.8 421.6l0.4 6.2M258.8 452.9l0.5 7.4M255.7 422.3l0.8 11.9M257.2 445.4l0.6 9.2M247.5 409l1 12.3M246.7 424.8l0.9 7.8M286.4 450.7l-11.9 1.1M273.4 451.9l-4.2 0.3M272.7 449.7l-5.1 0.5M298 443.4l-8.9 0.5M275.8 438.7l-13.1 0.7M261.7 439.5l-6.5 0.3M267.5 435.3l-12.9 1.3M267.2 423.1l-4 0.5M247.2 425.3l-6.2 0.6M246.4 422.3l-5.2 0.5M279.8 416.9l-6.3 0.4M247.2 418.8l-4.2 0.3M278.9 412l-1.5 0.2M249.5 412.5l-4 0.3M520.5 265l3.1 -2M515.3 274.6l11 -7.7M522.1 273.2l3.8 -2.6M524.9 263.5l2.8 3.8M518.8 262.7l4.9 6.6M521.9 299.3l4.8 -2.6M520.6 302.3l7.5 -4.3M540.3 292.6l4.5 -2.7M541.1 294.8l6.9 -4.2M516.2 312.6l9 -5.1M520.6 313l3.6 -1.9M544.7 308.3l4.5 -2.4M514.1 326.2l4.6 -2.4M544.8 309.7l5.9 -3.2M547 312.9l4.9 -2.8M513.4 334.7l2.9 -1.8M526 327.2l3.5 -2.1M531.2 324.1l5.6 -3.4M535.1 324l6.4 -3.9M523.1 331.5l7.4 -4M541.1 321.7l7.9 -4.2M547.4 302.1l3 5.6M546.7 304.4l3.3 6M536.3 290.2l5.2 8.6M546.5 307l4.6 7.7M548 324.3l1.2 2.2M544.1 320.5l3.9 7.2M524.7 320.2l3.8 6.3M519.7 316.6l3.1 5M512.5 319.9l4.9 8.7M576.5 305.2l2.3 11.7M579.3 319.3l1.9 9.9M581.5 330.7l0.3 1.1M575.9 309.3l0.9 5.8M561.8 294.1l1 6.7M556.4 308.9l1.6 7.9M555.8 311.8l1.4 8.1M558.1 320.9l-4.1 0.6M563 313l-10 1.8M558.8 308l-5.1 1M557.3 267.8l0.2 -6.4M574.5 283l2.8 6.1l-5.2 3.1l-5.9 2M567.9 259.2l0.9 2.3M550 242.2l-4.5 1.6M527.2 444.1l3.3 5.5M518.4 440.9l4.2 7M514.7 437.5l5.1 12.3M520.1 450.5l1.3 3.2M512 435.2l2.4 6.8M504.7 432.5l2.5 5.9M577.8 434l-3.7 4.9"/>
<path stroke="#d0e21f" stroke-width="0.85" d="M570.2 429.3l2.7 2l1.5 0.9l3.4 1.8"/>
<path stroke="#d0e21f" stroke-width="0.75" d="M542.2 404.8l-2.2 2.3M554.8 421.5l1.3 -1.3"/>
<path stroke="#d9e11f" stroke-width="0.9" d="M321.8 113.4l3 4.8M317.6 103.8l4.3 5.9M334.1 132.9l2.8 3.4M340.4 127.7l2.8 3.4M332.9 148l2.9 4.3M320.3 166.8l3.4 4M328.3 123l3.9 5.2M312.6 113.7l4.3 6.4M337.7 141.4l2.1 3M349.6 133.4l2 3M348.6 158.9l2.1 3.5M321 101M236 437.8l2.1 11M230 416.9l0.8 5.3M236.7 459.9l1.2 7.5M237 473.6l0.3 1.5M230.1 464.3l5.1 -3.7l5.1 -3.7l5.1 -3.7M532.2 351.5l6.3 0.5M536.9 371.3l3.7 0.4M533 379.2l4.5 0.3M533 382.6l2.4 0.3M533 386.7l2.7 0.2M533 388.4l3.9 0.5M539.8 389.3l1.2 0.1M533 393.9l3.6 0.2M533 398.1l4.1 0.2M507.3 428.5l8.2 -2.2M512.8 430.7l8.4 -2.4M517.5 434l9.2 -2.4M508.7 439.4l9.3 -2.1M529.4 448.1l4.4 -1.2"/>
<path stroke="#d9e11f" stroke-width="0.8" d="M309.4 129l7.7 -4.5M310.3 130.2l7.8 -4.5M311.1 131.5l7.7 -4.5M318.1 154l9.9 -6.7M311.6 109.9l6.2 -4.5M341.9 183.7l10.4 -6.1M328 179.2l8.8 -5M329.7 181.7l8.3 -4.8M329.4 106.1l1.6 -1.2M332.9 110.9l4.4 -3.2M351.3 164.9l9.1 -5.7M343.9 159.1l10 -8.2M346.9 164.4l10.4 -8.6M324.6 137.1l9.8 -5.2M324.9 140.4l11 -5.9M311.9 119.2l9.1 -5M311.2 121.3l9.9 -5.5M311.8 122.7l10.2 -5.7M323.2 173.7l5.5 -4.2M324 175l5.1 -4M325.5 177.5l5.3 -4M326.3 187.2l7.7 -6.2M326.1 189.2l8.4 -6.6M316.3 140.4l9.8 -6.3M327.4 170.6l9.2 -6.6M329.4 174.7l10.5 -7.6M307.4 108.7l5.8 -3.1M308.1 115.2l7.2 -3.9M331.4 114.3l9.1 13.1M322.9 113.5l6.4 9.5M360.2 169.1l2.6 3.8M329.3 173.5l4 6.4M504.2 335.2l4 -2.2l-2.1 -1.9M504.1 334.8l2 3.6M494.6 330.5l3.7 -3.7l1.7 2.4M589.7 429.8l-3 3.3l-2 -3.1M587.5 434.5l4 3.1l2.7 -3M597.6 431.1l-3.6 0.7l0.4 -3M582.1 435l-3.7 4.4l-3.9 -1.5M605.1 417l-1.5 6.2l-2.5 -1.4M614.9 414.5l-3.1 3.3M565 226.7l-2.4 2.9"/>
<path stroke="#d9e11f" stroke-width="0.95" d="M333.6 196.4l15.1 -10.1M329.9 217.1l18.5 -12.2M578.1 428.7l3.5 -2.1M578.4 430.5l8.4 -5.1M609.4 411.8l2.7 -1.6M589.8 425.3l9.2 -4.9M601 419.3l7.3 -4M605.3 418.3l8.4 -4.9M604.8 421.2l5.3 -3M588.3 438.3l3.4 -2"/>
<path stroke="#d9e11f" stroke-width="1.0" d="M324.3 212.6l13.4 -7.7M320.8 227.6l14.7 -8.7M330.9 224.7l11 -6.3M336.1 231.5l12.9 -7.5M325.5 257.2l17.2 -9.6M333.7 214.7l12 20.8M323.9 250.6l7.4 13.5M341.1 85.1l-4.6 5.2l-2.6 5.6M421.2 320.6l2.6 4.5M305.6 394.2l9.7 -8.6M340.2 363.5l5.4 -4.8M355.3 350.2l4.1 -3.7M323.3 386.9l3 -2.5M357.7 357.6l0.9 -0.7M334.7 382.3l11.4 -10.4M353 341l6.2 7.1M344.3 360.2l7 7.3M292 336.6l5.2 -4.4M292 338.9l6.3 -5.3M292 343.3l6.6 -6M300.4 335.7l7.6 -7M298.1 342.4l9.2 -8.1M308.9 332.9l3.8 -3.4M299.6 343.1l6.3 -5.3M295.9 350.1l7.7 -7.1M305.1 341.6l5.3 -5M312.1 335.1l5.1 -4.8M338.7 293.9l5.1 8.8M344.2 303.4l3.1 5.2M351.7 316.3l2.4 4.1M334.9 311.4l3.3 5.3M343.2 328.6l1.5 2.4M338.5 325.3l3.2 5.7M333.9 320.6l2.4 4.2M337.6 326.9l2.4 4.1M331.2 324.7l3.9 6.3M354.3 318.3l-5.4 3M347.8 321.9l-4.8 2.8M341.4 325.5l-8.3 4.7M337.8 319.9l-8.1 4.5M335.9 318.8l-4.9 2.8M336.9 305l-5 2.7M258.6 347.9l4.9 0.4M283 368.3l4 0.3M275.3 369.6l5.5 0.6M272.8 375.3l5.4 0.6M282.1 377.5l3.3 0.2M282.6 369.3l-0.4 4.8M228 381.7l17.5 3.1M242.4 385.7l9.9 2M237.6 388.2l10.6 2.1M231.6 390.6l7.4 1.4M257 377.8l-3 15.4M253 377.7l-1.4 5.8M235.6 387.2l-2.1 9M235.6 377.1l-2.8 14.4M232.6 392.5l-0.7 3.3M233.2 377l-4 16.3M315.3 434.5l0.7 5.5M318.1 458.4l1 7.8M315 445.1l0.8 10.6M309.1 407.1l0.7 11.5M304.9 419.8l1.2 12.4M306.9 440.2l0.9 8.7M309.5 465.9l0.1 1.2M307.2 464.5l0.2 2.8M300.7 411.5l0.8 8.2M302.2 427.1l1.3 12.7M299.3 430.1l1 11M297.5 426.1l0.4 7.2M296.8 433.4l0.6 7M292.3 430.7l1.4 13.1M293.2 455.7l1 9.5M288.6 426.5l0.5 6.1M282.2 428.1l1.5 13.6M285.6 459.5l0.8 7.6M279.8 415.3l0.6 8.9M279.5 443.7l0.7 6.2M274.5 424.1l1.2 11.6M271.9 444.7l0.6 5.6M272.7 452l0.8 8.1M268.3 426.7l0.5 5.9M261.7 427.7l0.4 6.9M251.1 430.3l0.4 4M251.5 457.6l0.4 4.8M250 455.1l0.5 4.7M245.4 423.7l0.4 5.9M241.3 421.8l0.8 8.5M316.1 457.1l-5.9 0.7M286.4 460.7l-4.7 0.6M300.8 452.7l-5.7 0.3M293 453.1l-8.7 0.5M255.3 453.4l-9.9 0.9M297.9 447.5l-10.1 0.9M286.6 442.2l-6.7 0.8M260.3 445.3l-13.4 1.5M318.8 432.6l-13.4 1.1M271.3 436.7l-6.9 0.6M313.8 430.7l-11.1 1.1M257.9 434.2l-5.4 0.6M243.3 432.8l-2.7 0.3M307.2 421l-8.2 1M313.8 416.1l-7.9 0.8M304.7 417l-6.8 0.6M276 415.9l-4.5 0.5M270.4 416.6l-4.8 0.5M250.1 416.6l-8.6 0.7M310.2 409.5l-8.4 0.6M308.9 406.9l-7.3 0.7M511.8 272.7l10.6 -7M521.7 275.4l2.3 -1.5M535 303l6.1 -3.8M542.4 301.1l8.6 -4.8M515.8 318.5l8 -4.7M510.6 323.8l7.1 -4.2M537.2 308.1l7 -4.1M517 323.1l6.7 -3.6M524.8 318.9l9.7 -5.2M526.8 324.3l9.9 -5.6M523.5 331.1l4.9 -3.1M530.1 327l4 -2.5M532.5 326.4l6.9 -3.7M525.4 335.4l5.3 -3.1M547.9 294.4l3.2 5.3M542.5 303.8l4.1 6.5M547.1 311.1l5.2 8.4M541.7 312.8l5.4 9.9M530 298.9l4.3 7.1M535 307.2l2.6 4.2M543.7 321.5l3.4 5.6M532.4 307.3l4.1 7.4M533.9 315.9l4 7.4M527.6 329.5l3.1 5M522.2 337.3l1.4 2.5M577.9 290l1 6.7M579 297.7l1 7M580.2 306.5l1 7.1M572.8 290.8l1.5 8.7M554.5 299l1.7 8.5M557.4 321.5l1.2 7.2M555.3 312.1l-2.3 0.3M576.3 293.5l-8.5 1.3M546.2 273.9l6.8 -1.8l4.3 -4.3M558.8 271l5.6 3.3l5.9 3.4l4.2 5.3M569 245.6l-3.3 1.2M563.7 247.5l-5.5 2M556.3 242l-6.2 2.2M530 427.9l-3 6.1M530.9 440.5l2.9 6.6M526.3 434.9l6.6 12.1M522.3 426.9l4.4 14.5M522 441.2l1.9 11M516.6 426.2l1.7 5.8M518.7 433.2l3.5 12M522.4 445.8l1.9 6.6M518.2 436.4l2.4 8.3M504 424.5l4.6 8.7M507.2 425l2 9.4"/>
<path stroke="#d9e11f" stroke-width="0.85" d="M550.7 418.8l3.3 1.6l1.4 1.9l3.9 2l2.5 1l2.5 1.9l2.1 1.6l3.8 0.5"/>
<path stroke="#d9e11f" stroke-width="0.75" d="M560.7 424.9l2.9 -2.3M564.7 427.3l2.5 -1.7M558.6 423.7l-1.7 1.1M556 422.2l-1 1.7l-0.8 1.8M550.5 417.3l2.2 -2.1M560.9 425.1l-0.1 1.9l1.5 2.7"/>
<path stroke="#e1e01e" stroke-width="0.8" d="M343.6 149.8l10.1 -6.4M344.8 150.8l8.7 -5.5M340.8 182.6l10.6 -6.2M341.9 187.2l11.5 -6.8M329 180.4l7.7 -4.5M329.9 107.6l2.7 -2M331.3 108.4l2.8 -2.1M331.3 110.3l4.4 -3.3M345.9 161.3l10.2 -8.4M326.5 185.1l7.1 -5.7M314.7 139.6l11.2 -7.2M317.6 143.1l10.3 -6.6M343.2 131.3l6.5 9.4M328.4 155.8l3.4 5M318.1 155.8l6.7 10.6M335.9 184l3 4.8M496.1 333.4l1.8 3.7M505.2 329.3l2.7 2.9l1.4 -1.8M504.4 330.4l2.9 -2.8M495.1 335.2l2.1 -1.3l1.1 2M503.8 328.8l3.3 5l1.5 -1.2M502 343.7l4.4 -2.9M609.9 415.6l-4.2 5.2l4.4 2M588.6 426.2l6.3 2M595.7 430.9l-3.9 1.6l1.4 3.6M608.5 414.5l3 1.3"/>
<path stroke="#e1e01e" stroke-width="0.9" d="M328.8 106.6l3.8 5M352 164.5l2.5 4M326.8 171.1l3.4 4.6M337.3 163.5l3.3 4.6M240.7 422.1l0.3 2M237.2 409.5l1.3 9.4M240.5 461l1 4.9M245.4 453.2l5.1 -3.7l5.1 -3.7l5.1 -3.7M494.4 335l4.9 4.4M532.2 354.3l3.3 0.2M538.1 354.6l1.2 0.1M532.3 356.7l2.4 0.1M532.4 360.3l7.6 0.8M532.9 377.4l4.6 0.3M538.8 394.2l2 0.1M500 427l7 -2.1"/>
<path stroke="#e1e01e" stroke-width="0.95" d="M325.9 188.8l5.2 -3.1M325.7 196.2l16.1 -10.5M326.2 202.4l5.9 -3.6M326.6 203.6l13.2 -7.7M328.2 210.2l18.8 -11.2M357.1 208.7l18.6 -12.5M376.1 202.3l2.3 -1.5M336.2 234.1l21.2 -13.5M374.8 211.2l7.1 -4.6M348.2 230.3l25.3 -15.2M578.6 431.4l8.8 -4.7M609.7 414.6l3.6 -1.9M579.6 437.8l8.7 -4.9M605.3 423.4l1.6 -0.9"/>
<path stroke="#e1e01e" stroke-width="1.0" d="M336.5 214.1l13.3 -7.1M332.7 222.5l19.4 -12M326.7 231.2l25.9 -14.8M328.7 233l13.1 -8M317.6 247.4l23.7 -14.2M331.7 264.2l17 -9.3M343.1 225.7l6.6 11M333.9 95.9l-6.6 2.4l-6.3 2.7M438.5 323.8l5.3 10.1M434.7 337.8l1.9 3.8M423.1 320.3l3.4 6.1M427 327.2l4.7 8.5M415.7 336.9l2.4 4.8M436.5 338.9l-8.6 4.5M434.1 338.3l-7.1 3.9M419.2 322.4l-2.9 1.6M335.1 361.6l6.4 -6M352.2 345.7l5 -4.7M301.7 393.3l3.9 -3.5M342.9 358.6l8 -6.7M328.6 373.8l10.7 -9.5M347.4 357.2l7.1 -6.3M338.8 366.6l11.4 -9.6M350.4 361.4l8.3 -7.9M333.1 378.6l10.5 -9M345 368.4l5 -4.2M351.3 363.1l5.4 -4.6M349.3 333.1l6.2 6.8M345.6 341.5l9.9 10.3M342.9 351.4l5 5.8M346.2 358.1l5 5.6M309.4 329.7l0.7 -0.6M290.3 366l8.2 -7.3M300.7 338.2l8.1 9.3M358.1 297l5.5 9.6M348.3 292.4l6.9 11.5M348.2 310.2l2.5 4.4M335.7 320.1l2.4 4.3M354.3 320l-5 2.8M342.7 315l-5.7 3.2M364.8 298.8l-6.1 3.3M356.6 303.3l-7.1 3.8M352.2 302.6l-9 5.5M361 295l-8.5 5M273.8 342.8l8.1 0.7M283.2 343.6l4.3 0.4M264.9 348.4l11.6 0.9M265.4 352.9l6.9 0.6M274.3 345.7l-0.4 4.3M273 360.3l-0.6 6.4M247.1 385.1l16.9 3M223.4 381.7l17.5 3.6M254.6 388.2l17.4 3.6M214 383.2l15.6 3.8M230.6 387.2l11.2 2.7M241.7 393.6l15 2.9M270.5 392.3l-2.7 11.6M220.7 384.8l-1.9 7.5M324.6 435.9l0.6 7.1M322.8 429.3l0.5 5.5M312.2 434.7l0.7 6.4M310.6 430.3l0.5 6.7M311.2 438.5l0.5 8.5M311.9 449.3l0.7 9.9M308.8 427.2l0.9 10.7M309.9 440.1l1 11.6M306.2 433.1l0.5 5.1M302.6 403l0.9 11.9M305.4 440l1 13.6M303.6 441l0.4 4.4M299.4 403l0.3 4M299.8 408.6l0.7 11.2M297.4 408.5l0.8 9.2M302.3 464.5l0.3 3.3M297.6 441.7l1 11.4M294.4 434.1l0.7 9.9M295.2 445.7l0.6 8.5M295.4 460.8l0.7 6.9M291.4 461.5l0.4 5.2M287.6 433.4l0.9 8.7M280.8 414.9l1.2 11.5M283.9 444l1.4 13M277.6 412l1.1 11.2M280 437l0.5 5.7M270.5 431.1l1.2 11.3M269 435.1l0.5 6.2M263 424.1l0.7 11.8M263.8 437.4l0.7 12.4M264.6 451.4l0.4 6.4M260.6 411.3l0.2 2.6M258.8 426.3l0.7 13.7M255.3 440.7l1.3 11.7M251.3 409.6l1 12.8M290.7 464.7l-10.5 1M278.8 465.9l-4.3 0.4M308.4 458.1l-7.2 0.8M318.9 455.7l-10.6 0.7M285.7 458.1l-8.7 0.7M307.8 452.8l-8.5 1M287.7 444l-9.1 0.5M269.9 445l-8.3 0.5M323.2 429.8l-7.2 0.7M305.3 426.5l-5.2 0.6M252.3 431.9l-8.2 0.8M284.8 415l-7.7 0.8M510 275.4l5.4 -3.5M523.5 266.6l3.4 -2.4M527.6 266l1.4 -0.9M516.9 263.4l5.6 7.4M507.2 270.6l6.5 9.7M505.6 273.3l1.7 2.1M502.7 282.8l2.6 3.8M506 287.6l5.7 8.1M502 284.9l5.6 8.5M526 310.1l8.1 -4.4M532.1 309.1l10.2 -6M530.1 314.6l7.7 -4.6M537.9 320.1l10.1 -6.1M515.7 335.8l5.8 -3.5M543.6 318.8l7 -4.3M529.3 337.3l6.7 -4M536.6 298.2l2.5 4.3M538.2 309.6l5.4 10.1M538.3 312.7l4.2 6.9M541.9 324.4l3.4 6.1M539 325.3l3.9 7.4M518.4 317.8l3.2 5.4M514.7 315.5l5.1 8.3M584.1 329.7l-2 0.3M579.7 330.4l-6.1 0.9M583 292.5l-5.7 0.9M540 276l6.2 -2.1M547.9 244.9l-2.6 1M541 403l-2.5 6.3l-2.6 6.3l-2.9 6.2l-3 6.1M528.7 432.1l2.3 5.4M531.5 438.6l1 2.2M526.4 430.1l4.2 9.8M521.1 434.1l5.4 8.9M509.7 425.3l4.8 11.6M508.5 425.1l2.9 8.4M509.2 434.5l3.6 6.7"/>
<path stroke="#e1e01e" stroke-width="0.85" d="M541 403l1.4 2.4l1.6 2.2l1.7 3.1l2.7 3.2l1.1 1.6l1.2 3.3"/>
<path stroke="#e6dc1f" stroke-width="0.8" d="M329.6 161l9.1 -7.5M330.4 164.2l10 -8.1M332.3 164.6l9 -7.4M332.7 166.2l10.7 -8.8M351.9 178.5l7.5 -5.5M353.1 181.4l8.3 -6.1M340.9 175.9l9.8 -8M341.2 177.6l10.4 -8.5M344.5 160.5l10.5 -8.6M347 162.4l10.2 -8.4M332.9 189l10 -7.9M314.5 137.9l9.8 -6.2M316.3 142.2l10.5 -6.8M352 144l1.4 2.1M493.7 334.1l4 -3.9l-2.4 -2.5M493 335.3l4 -3.2M507.4 334.3l2.7 -2.7M493.1 338.2l4.1 -2.4M606.8 417.3l-3.3 2.1l2 2.2M585.2 428.3l4.9 1l-0.4 3.7M606.2 415.2l-5.6 1.7M588.7 435.5l-0.6 3.5"/>
<path stroke="#e6dc1f" stroke-width="0.95" d="M325.8 192.4l11.1 -6.9M325.7 194.8l8 -5.2M335.9 188.2l4.4 -2.9M334.1 197.5l10.9 -6.8M327 205.6l18.6 -11.4M327.4 207.2l6.6 -4.2M359.6 204.2l10.5 -6.8M354.4 209l21.3 -12.4M344.6 218.7l8.5 -5.4M355.1 212l20.7 -13.1M343.8 222.4l20.6 -13.8M365.5 207.9l12.2 -8.2M359.8 215.1l20.2 -11.7M364.6 214.3l15.8 -10.1M358.8 219.7l15.6 -9.9M380.9 212.3l3.3 -2M343.3 207.9l11.3 17.2M355.8 226.9l4.6 6.9M582.9 439.4l2.7 -1.6M592.8 433.5l3.7 -2.3"/>
<path stroke="#e6dc1f" stroke-width="1.0" d="M338.9 214.7l13.4 -7.3M347.8 211.7l6.6 -4M329.9 250.2l21.4 -13.3M337.1 265.3l20.3 -11.1M442 318.3l4.7 8.8M432.4 326l4.7 9.2M430.9 330.1l3.3 6.7M425 337.9l3.3 6.1M442.8 332l-7.5 3.8M443.1 326l-7.7 4.2M450.1 319.6l-4.9 2.7M438.4 326.1l-5.3 2.8M431.8 327.4l-4.1 2.3M418.5 327.4l-4.2 2.3M346.7 352.8l7.7 -6.9M313.2 383.8l10 -8.5M316.8 384.3l10.7 -9.5M329 378.5l8.1 -7.6M356.9 318.7l5.6 5.9M353.7 330.1l5.9 7M345.9 329.5l2.8 3M353 344.4l3.8 4.1M344.7 338l4.1 4.6M341.8 346.4l8.9 10.5M313.6 380.1l6.9 8M291.5 351.6l7.4 -6.3M308.1 341.1l7.2 -6M305.2 347.7l7.4 -7M325.2 334.8l5 -4.4M285.3 387.1l5.5 -5.3M323 330.6l7.5 8.8M308.5 328.8l9.3 9.6M303.1 350.6l6.5 7M291.6 349.8l8.7 9.5M291.5 351.6l3.7 4.3M290.4 365.4l9 10.3M286 380.7l7 7.9M356.1 293.5l1.5 2.5M350.5 292.7l5.6 9.6M346.8 301.5l4.4 7.6M341.4 307.9l5.4 9.1M355.2 308l-10.9 6.1M362.4 296.4l-8.7 5.3M347 292.3l-9.4 5.8M278.1 349.4l9.2 0.7M273.3 373.8l6.3 0.4M272.3 368l-0.5 5M226 377.3l9.7 2.1M229 379.9l9 1.6M214 383.5l13.3 2.7M228.5 386.4l7 1.4M255.7 393.3l16.7 4.1M223 390l6.5 1.5M261 400.6l8.2 1.8M270.4 402.7l12.5 2.8M261.2 378l-2.9 15.8M254.2 377.7l-2.4 13.2M238 377.2l-2 8.6M230.2 377.1l-4.1 16.6M320.7 426.2l0.9 11.2M319.2 427.9l1.1 11.3M320.4 440.6l0.4 4.4M320.9 446.5l0.9 9.5M321.9 456.8l0.4 4.5M316.2 441.5l0.6 5.4M313.2 424l0.8 9.1M309.1 407.1l1.4 12.4M310.6 420.8l1.3 11.7M314.6 456.6l1.1 9.9M310 420.8l0.5 8.3M307.5 413l1.1 12.4M311.7 460.8l0.4 4.3M303.8 408.4l0.9 9.4M303.6 416l0.6 8.8M306.5 455.8l0.5 6.5M304.8 453.2l1.2 12.2M295.4 419.6l0.6 5.4M296 426l0.6 5.5M299.6 463.1l0.5 4.9M294.4 409.8l0.5 10.4M295 421l0.3 7M289.2 433.9l0.4 5.6M285.9 435.2l0.4 4.3M287.6 453.1l1 10.7M280.9 431.4l0.9 13.2M275.9 437.5l1.2 12.5M311 460.6l-6.1 0.6M297.4 454l-9.3 1.1M287.1 455.3l-10.5 1.2M316.4 448.2l-4.7 0.4M314.1 446l-4.5 0.4M319.9 425.1l-12.8 1.3M313 414.9l-6.4 0.4M287.1 411.4l-7.4 0.6M307.1 403.3l-10.8 0.6M509.4 272.4l9.3 -6.2M517.5 270.5l9.6 -6.2M505.4 287.5l4.9 -3.6M515.1 264l4.9 6.7M513.2 283.4l2.5 3.4M504.8 275.8l6.5 9.7M497.5 286.7l5.2 7.9M525 309.2l9.3 -5.8M547.3 295.4l2.6 -1.6M520.5 327.9l4.8 -2.7M550.1 316.9l2.9 -1.5M529.7 334.8l7.4 -4.3M539.8 303.7l4.3 7.4M530.5 313l4.1 7.3M526.8 319.1l5 8.2M523.2 322.4l3.8 6.2M517.2 332l3.4 6.3M573.6 290.7l0.5 2.5M564.7 300.2l2.2 11.7M564.7 327.4l1.2 7.8M556.4 250.2l-6 2.1M526.8 441.9l2.5 8.2M501.2 424.2l2.7 13"/>
<path stroke="#e6dc1f" stroke-width="0.9" d="M291 311.2l4.7 -0.2M260.7 442.1l5.1 -3.7l5.1 -3.7l5.1 -3.7M499.3 339.4l4.9 4.1l5.2 -4.1l1.7 -4.1l-5 -4.3l-5.7 1.2l-6 2.8M532.1 347.8l2.2 0.2M536.6 356.9l3 0.2M532.6 365.6l8 0.9M523.5 438.8l8.1 -2M522.3 442.3l4.4 -1.4"/>
<path stroke="#e6dc1f" stroke-width="0.75" d="M542.1 404.6l-1.8 0"/>
<path stroke="#e8d521" stroke-width="0.8" d="M330.3 162.4l9 -7.4M351.7 180.6l8.7 -6.5M353.8 182.8l8.6 -6.5M343.4 148.1l10.5 -6.7M339.2 175.3l10.7 -8.6M335.2 189.1l9.3 -7.4M337.9 188.9l7.4 -5.9M356.3 187l8.4 -5.6M362.4 186.5l4.1 -2.6M356.5 186.2l0.6 0.8M336.3 167.4l7.8 11.4M496.5 335.1l2.2 -1l2.9 3.1M494.3 331.5l4.7 -3.3l0.8 1.5M493.3 334.1l2.6 -2.5l-1.3 -0.9"/>
<path stroke="#e8d521" stroke-width="0.9" d="M343.5 159.4l4.8 5.8M298.8 310.9l0.9 0"/>
<path stroke="#e8d521" stroke-width="0.95" d="M329 213.4l16.9 -11M342 210.4l8 -5.1M330.7 219.5l11.9 -7.5M351.6 207.8l17.7 -11.3M332.9 226l10 -6.3M334.3 230.1l14.2 -9.4M349.1 221.3l9.8 -5.7M337.8 234.9l20.3 -13M342.3 235.8l23.6 -14.3M357 234.5l8.9 -5.3M326 186.9l8 13.6"/>
<path stroke="#e8d521" stroke-width="1.0" d="M324.7 231l21.5 -13M334.1 235.3l23.1 -12.6M328.9 261.4l13.8 -7.7M329.7 262.4l17.5 -9.6M350.8 253.8l8.9 -4.9M335 264.8l15.7 -8.8M343.6 266.6l15 -8.6M347.3 267.4l18.1 -10.2M350.7 257.6l5.7 9.3M446.1 319l3.4 6.3M441.2 324.9l2.1 4M444 330.3l1.9 3.5M434.1 323l4.3 7.8M431 327.4l2.8 5.1M424.3 326l3.5 6.3M428.7 333.9l4.4 7.9M419.4 320.8l2.8 5.4M421 330.6l3 5.6M443.6 323.2l-4.2 2.3M431.4 329.9l-6.4 3.5M418.6 336.9l-2.6 1.4M429.1 321.6l-9.3 5.1M362.1 323.7l2.7 -2.3M350.8 333.5l7.2 -6.9M320.2 371.6l8.1 -6.9M310.9 384.2l5.5 -5.2M306.2 389.3l8 -7.3M327.6 370l7.4 -6.7M336.6 361.8l9.4 -8.4M335.5 364.9l6.6 -5.6M352.3 350.6l7.3 -6.2M317.5 384.4l10 -8.4M351.9 355.5l6.2 -5.2M353.7 321.9l6 6.6M342.5 333.2l3.2 3.4M347 338l5.2 5.6M349.9 343.8l8.5 9.3M342.5 356.8l4.5 5.2M328.1 374.2l7.2 7.8M328.8 377.7l4.8 5M325 377.1l5.6 6.4M314.1 371.8l9.1 9.8M312.6 381.9l6.2 6.9M302 382.3l8.7 9.9M302.9 390.5l3.2 3.6M291.6 349.8l6.7 -5.6M299.8 344.5l11.2 -9.6M291.2 355.4l8.7 -7.4M301 347.2l5.3 -4.5M294.8 357.6l9.5 -9M329 340l10.8 -9.3M286.7 378.7l7.2 -6.2M286.3 387.8l8.4 -7.5M301.1 342.7l8.3 9.2M296.6 343.6l5.9 6.3M292 341.2l9.8 10.8M302.8 353.1l6.9 7.6M292 344.9l8.5 9.2M287.4 376.9l9.1 9.5M357.2 293.6l5.6 9M357.6 299.4l3.4 5.6M362 308.7l1.5 2.5M357 310.8l3.7 7M341.9 292.9l4.1 7.2M335.2 294.9l6.5 10.9M347.3 317.8l3.1 5.1M357.8 308.6l-9.2 5.2M365.3 299.3l-8.7 5.2M336.4 298.8l-9.7 6.1M273.8 353.7l9.9 0.9M281.1 388.8l10.1 2.4M236.7 379.6l6.8 1.5M244.3 381.2l8 1.7M264.9 385.6l12.4 2.7M256.5 384.9l8 1.5M273.1 392.1l9.7 2M268.1 394.2l14.2 2.9M242.9 390.2l10.6 2.6M276.7 380.7l-2.4 13.5M274.2 395.1l-2.1 11.9M270.7 379.6l-2.6 13.5M264.1 388.2l-3 12.5M262.1 385.6l-2.2 11.4M246.3 383.6l-1.6 6.9M239.2 393.2l-1.1 4.3M323.5 436.9l0.6 6.1M321.7 438.7l0.3 5M322.2 445.5l1 13M323.3 460.2l0.1 1.4M307.9 449.8l1.3 13.8M300.6 421.8l0.5 6.8M301.2 430.2l0.8 12.2M298.4 420.1l0.7 8.1M297.2 419.9l0.3 5.3M298 434.1l0.7 12.6M298.8 448.5l0.6 8.8M293.4 420.2l0.9 12.4M292 444.5l1 9.4M267.3 430.5l1.3 11.7M268.8 443.9l0.5 5.3M269.5 450.4l0.7 7.1M270.3 458.3l0.6 5.6M264.5 412l0.3 3.6M268.3 455.3l0.9 10.5M251.7 409.7l1.3 11.4M321.2 465.6l-11.9 0.7M323.4 461.6l-8.8 0.8M306.4 456.6l-6.1 0.4M312.8 436.7l-6.5 0.4M318.9 423.6l-8 0.6M309.9 424.3l-8.9 0.7M248.5 409.1l-5.7 0.5M513 266.5l5.7 -3.7M510.7 275.9l11 -7.9M490 292.3l7.2 -5M495.7 290.8l9.5 -6.4M502 288.4l8.6 -5.6M501.6 297.7l11 -7.3M521.1 272.2l2.1 2.9M515.6 267.7l6.2 8.5M507.7 276.1l4.1 5.4M505.4 274.1l2.4 3.7M505.5 284.6l3.5 4.9M498.5 294l6.7 10M519.2 312.8l3.8 -2.3M542 298.7l3.5 -2.2M532.3 331.4l9.8 -5.7M533.6 336.9l9.8 -5.9M545.3 313.2l3.3 5.8M537.5 330.5l2.7 4.7M529.8 328.6l5.2 8.4M568.4 319.8l1.9 10M572.1 331.5l-9 1.3M565.9 295.1l-6.7 1"/>
<path stroke="#eacf23" stroke-width="0.9" d="M329.1 161.4l3.9 4.9M342.9 148.4l1.8 2.8M353.7 141.6l0.1 0.3M339.3 175.3l2.1 2.5M350.2 166.4l2.1 2.6M214.2 448.5l7.3 -2.2M234.1 459.5l5.1 -1.3M533 385l4.4 0.3"/>
<path stroke="#eacf23" stroke-width="0.8" d="M332.3 187.6l10 -8M359.2 186.8l6.4 -4.2M349 185.8l1.3 1.9M502.7 331.6l4.4 -3.7l-1.1 -2.2M504.8 334.2l2.4 3.5M500.1 333.4l3.1 3.5"/>
<path stroke="#eacf23" stroke-width="0.95" d="M326 201.4l5.3 -3.5M328.5 211.4l24.5 -14.8M329.2 214.2l17.3 -10.4M330.2 218l10.5 -6.8M363.1 199.2l10.4 -6.6M331.2 220.9l19.5 -12.5M331.6 222.2l20.9 -12.2M333.2 226.8l15.7 -9.6M351 215.9l20.1 -12.4M334.2 230l13.4 -7.8M335.2 232.9l15.3 -9.7M374.6 214.4l7.2 -4.3M356.3 229.8l14.9 -10M364.8 205.2l10.1 16.3"/>
<path stroke="#eacf23" stroke-width="1.0" d="M353.9 215.7l6.9 -4M334.1 230.9l21.9 -12.8M334.9 234.4l25.1 -15.2M334 238.5l25.5 -13.9M319.1 249.3l23 -13.2M337.1 241.6l15 -9.2M346.9 237l16.8 -9.3M347.4 261.9l16.8 -9M353.4 267.4l10.7 -6.3M352 207.3l10.2 17.6M454 297.4l6.7 12M455.4 304.9l3.5 6.3M439 331.8l3.1 5.5M426.9 319.8l3.6 6.7M423.2 328.1l5.2 9.9M429 339.3l2 3.7M418.2 321l2.5 5M416.9 323l3.5 6.5M417.9 333.3l3.4 6.3M422 340.9l1.3 2.4M442.9 333.5l-7.4 4M424.3 333.8l-3.9 2.1M437.2 324.4l-3.6 2M421.2 333.5l-5.3 3M433.9 323.7l-5.7 2.8M434.4 318.8l-3.1 1.7M356.1 327.5l7.8 -6.6M354.9 330l6.1 -5.4M336.9 349.7l11.4 -10.6M349.7 337.9l4.4 -4.1M302.2 387.4l6 -5.7M337.2 354l4.4 -4.2M343.4 348.1l11.5 -11M341.1 353.9l11.4 -9.6M301.2 393.2l8.5 -8M342.4 354.8l8.7 -8.1M326.9 383.9l5.3 -4.5M347.2 328.2l6 6.4M341.3 334.4l2.4 2.6M342.7 344.5l5.8 6.8M316.5 361.6l4.2 4.6M312.2 366.4l4 4.6M322.1 377.6l6.3 7.2M307.7 373.3l4.9 5.6M306.5 375.1l5.2 5.7M309.4 384.4l5.4 6.1M302.9 380.9l4.1 4.8M300.8 384.4l7.9 8.6M316.2 334.3l4.3 -3.6M290.7 361.5l2.4 -2.3M312.5 346.2l5.3 -4.8M288.1 375.1l2.3 -2M302.4 362.8l5.7 -4.9M309.6 356.6l10.8 -9.2M337.1 337.5l7.7 -7.5M343 330.1l1.2 1.2M332.5 330.3l5 5.8M316.4 330.2l9.8 10.2M317.8 344.7l7.1 7.6M313.1 343.8l9.9 10.7M314.8 351.8l4.8 4.9M292 334l8.3 9.7M301.7 355.4l7.1 7.6M290.6 362.7l9.1 9.6M353.1 315.4l2.6 4.1M338.5 321.4l-3.7 2.1M285.2 354.7l5.1 0.5M271.1 382.1l11.7 2.2M271 386.3l8 2M278.1 388.4l11.2 2.4M239.2 381.7l14.9 2.8M276.9 390.3l14.7 2.6M249.4 390.5l17 3.4M240.8 392.3l13.3 2.5M275.6 400.1l6.2 1.2M258.7 398.6l14.3 3.5M275.2 402.6l8.3 2M285.4 383.9l-3.2 14.6M272.3 392.8l-2.1 11M267.9 379.1l-2 10.2M324.2 444.8l1.2 13.1M313.7 420.7l1.4 11.6M312.3 413.6l0.7 8.3M313.1 443.2l1.3 11.2M303.2 403l0.4 3.5M304.2 446.5l0.4 4.4M296.5 408.5l0.6 10.4M294.2 406.3l1 10.9M265.9 428.2l1.1 12.2M264.1 420.2l0.9 13.5M254 429.9l1 8.5M313.3 462.5l-10.2 1M324.7 459.1l-11.7 1.3M272.5 447l-7 0.5M313.1 428.5l-11.2 1.1M490.6 294.2l3.9 -2.7M491.6 295.3l8.8 -5.9M479.7 311.3l6.1 -4.3M513.4 289.8l1.4 -0.9M516.1 271.7l4.4 6.3M494.5 287.9l3.2 4.9M489.3 299.5l2.7 3.8M493.9 309.9l6.4 9.8M528.3 320.9l5.5 -2.9M533.3 327.3l3.7 6.5M563.7 320.5l0.7 5M556 320.5l1.1 5.8"/>
<path stroke="#ecc925" stroke-width="0.95" d="M331.7 222.4l10.3 -6.6M333.9 229l8.5 -5.7M350.1 219.6l24.4 -16.3M352.9 221.6l9.5 -6M350.4 235.1l11.9 -7.3M364.5 226.4l16.4 -10.2M353.6 234.8l11.9 -6.9M378.9 221.4l7.5 -4.5M382.3 223.7l4.3 -2.6M328.3 210.9l12 18.2"/>
<path stroke="#ecc925" stroke-width="1.0" d="M340.8 266.1l20.8 -12.7M352.8 247.9l5.1 8.8M330.1 254.8l5.8 10.2M447.7 307.4l2.4 4.6M454.8 315.5l-3.6 2M462.1 304.7l-13.7 7M461.2 297.2l-4.3 2.5M459.3 294.5l-8.3 4.2M439.3 330.6l-6.3 3.4M434 330.9l-8.2 4.4M348.9 327.4l6.9 -6.2M330.7 347.5l6.1 -5.4M348.1 331.9l11.2 -9.9M329.1 350.6l7.7 -6.6M337.8 343.2l5.4 -4.6M343.1 340.3l5.6 -4.9M350 334.3l3.9 -3.4M331.4 352.1l8 -7.7M319.6 365.6l11 -10.1M318.1 372.2l9.4 -8.9M328.9 361.9l6.5 -6.2M315 381.3l11 -9.9M324.2 374.5l9.7 -8.3M347.7 334.9l4.5 5.2M322.5 355l4.1 4.7M315.2 363l7.1 7.7M310 369.6l4.8 5.2M309.1 371.1l9.4 10.4M299.8 357.5l10.9 -9.7M308.2 368.2l4.3 -3.9M337.6 330.2l3.7 4.2M327.5 341.7l3.6 3.8M321.5 350.9l2.4 2.5M301.5 366l6 6.3M290.1 368.5l5.8 6.5M284.5 384.8l2.7 3.2M343.1 292.6l5.6 9.6M349.3 303.3l6.5 11.3M348.8 317.8l2.2 3.7M281.2 374.4l5.9 0.4M283.1 342.1l-1 8.6M276.7 359.2l-0.6 4.9M265.7 388.4l9.6 1.7M273.9 397.7l8.8 2.2M256.4 395.2l13.8 2.6M258 396.8l15.9 3M282 381.6l-3.2 14.6M280.6 381.4l-1.9 7.6M273.3 380.1l-2.6 11.1M319.6 452.3l0.2 4.6M319.9 458.2l0.4 7.9M285.9 463.5l0.2 3.6M279.4 462.7l0.3 3.9M274.9 445.2l0.8 7.6M271.6 425.9l0.7 8.6M263.5 411.8l0.4 6.9M265.1 434.8l0.6 9.6M253.2 422.7l0.6 5.3M242.3 408l0.8 9.3M241.6 435.7l1.1 11.6M485.1 294.4l8.3 -6M487.2 306l11.1 -8M492.1 324.9l8.9 -6.5M508.2 269.4l2.3 3.1M511.9 274.5l6 8.2M506.1 305.4l0.9 1.3M497.1 298.6l5.9 9M488.5 290.3l6.8 9M487.6 290.6l6.5 10.1M488.9 306.1l3.5 5.3M493.7 313.2l5.5 8.5M481.2 305.6l3.3 4.5M529.8 340l8.7 -4.7M535.7 322.2l2.6 4.6M529.5 320.6l2.6 4.6"/>
<path stroke="#ecc925" stroke-width="0.9" d="M224 473.1l8.6 -2.1M529.4 365.6l1.6 6.4"/>
<path stroke="#ecc925" stroke-width="0.8" d="M500.9 333.4l2.3 2.9M507.4 338.3l3.7 -2M494.4 329.6l1.3 1.5"/>
<path stroke="#eec327" stroke-width="0.95" d="M367.8 226.6l18.6 -10.8M364.8 196l15.6 24.3M345.7 185l14.2 23.6"/>
<path stroke="#eec327" stroke-width="1.0" d="M347.1 217.5l14.1 -8.5M353.1 218.1l8.9 -5.5M350.7 223.1l18.7 -10.8M326.2 258l18.3 -10.2M363 252.6l11.8 -7.3M356.2 208l13.9 24.3M368.1 240.7l4.4 7.9M451.6 283.2l7.3 13.5M454.3 291.4l7 13.3M457.1 300.1l4.3 8.1M448.7 293.1l6.2 11M444.3 289.7l3.6 6.9M445.9 298l8.9 15.5M448.7 312.3l-10.6 6M447.5 312.2l-7.2 3.7M461.4 297.5l-14.2 7.3M451.1 295.7l-12.7 7M448 293.7l-5.9 3.3M454.6 287.2l-12 6.8M352.9 326.1l7.6 -6.9M344.8 337.2l9.5 -8.1M333.6 348.6l7.9 -6.9M315.5 367.4l5.8 -5.6M340.3 343.5l8.7 -8.3M329.6 363.7l10.2 -8.7M329.6 366.8l4.9 -4.7M319.5 358.3l5.3 5.6M304.4 378.6l4.3 4.9M299.4 386.5l2.8 3.1M296.7 390.9l1.4 1.6M318.9 340.5l4.7 -4.2M323.4 342l11.6 -10.9M292 371.8l9.6 -8.3M321.7 346.2l6.5 -5.5M295 371.5l10.3 -8.8M330 341.4l9.3 -8M292.2 380.5l7.7 -7.4M301.1 371.9l4.9 -4.7M295.6 379.5l11.6 -10.5M288.3 389.4l10.2 -9.8M339.6 330.2l2.7 2.8M327.6 330.5l5 5.6M334.2 337.9l1.9 2.2M324.1 330.6l6.8 7.2M320.9 330.7l9.8 11M310.5 358.6l4.4 4.8M298.8 366.6l7.2 7.6M286.9 378.2l8.5 9.7M351.7 309.8l2.3 4M356.6 321.1l0.5 0.7M334 323.4l3.2 5.2M289 350.3l2.6 0.2M280.6 363.1l-1.3 10.5M279.5 389.1l11.7 2.1M284.5 400.3l1.7 0.4M272 407l8.6 1.8M319.1 442.5l0.4 7.5M306.3 415l0.7 8.5M308.2 438.3l0.8 10.5M284.5 438.7l0.5 8.5M275.5 413.9l0.7 8.8M271.9 419.8l1.3 11.1M273.3 432l1.3 10.7M265.3 412.1l0.8 7.3M266.3 421.5l0.8 7.3M243.7 425.1l0.8 9.2M244.7 436.8l1.2 13M246 450.9l0.4 4.9M291.9 445.7l-9.1 0.6M214 385l6 0.6l6 0.6M478.4 295.9l4.4 -2.8M474.7 303l8.8 -6.1M479.7 301.5l8.9 -6M483.7 303.5l9.5 -7.1M482 307.8l6.9 -5.1M501.2 293.8l8.8 -6.4M480.7 311.8l9.2 -6.2M482.4 312.6l4.8 -3.3M500.2 314.4l4.1 -3M492.8 328l5 -3.4M510.4 266.9l5 7.4M516.6 276.2l2.9 4.2M491 289.3l5.4 8.2M503.6 308.5l1.4 2.3M496.7 301.2l6.4 8.7M475.6 297.9l4.8 6.6M510.6 330.7l6.7 -3.7M540.3 314.4l9.9 -5.4M549.6 320.7l1.3 2.1M533.9 324.1l2.9 5.1"/>
<path stroke="#eec327" stroke-width="0.9" d="M528.1 359.2l1.3 6.4M540.1 385.4l1 0.1M533 391.4l7.8 0.6"/>
<path stroke="#f0bc28" stroke-width="0.95" d="M325.8 191.4l8.7 -5.8"/>
<path stroke="#f0bc28" stroke-width="1.0" d="M343.4 217.6l15.8 -9.1M363.5 211.8l3.2 -2M359.6 221.4l10.9 -5.9M342.9 232.3l21.9 -13.1M344 253l8.5 -4.7M349 251.8l10.6 -5.7M361.4 248l19.6 -10.7M353.8 222.3l13.4 22M364.3 255.1l4.4 7.4M355.9 262.1l2.5 4.5M446.3 273.4l4.9 9M439.7 291.7l6.9 13.5M433.7 287l6.4 11.4M440.5 299.1l8.7 15.4M436.8 317.4l0.6 1M427.7 312.6l2.9 5M423.7 315.8l2.3 4.2M449.5 299.4l-11.1 5.6M432 334.6l-7.8 4.3M422.3 340l-3.6 1.9M340.1 335.8l4.3 4.5M309.3 381.1l7.8 8.4M300.8 354.4l6.1 -5.7M303.2 361.1l10.1 -9.5M314.8 350.2l7.4 -7M306.7 361.5l4 -3.4M324.9 345.8l4.1 -3.5M289.4 383.5l4.5 -4M294.7 378.8l10.2 -9.3M302.9 375.4l6.4 -5.5M289.2 390.1l7.4 -6.3M334.8 330.3l5.1 5.6M326.4 343.7l3.1 3.6M319.6 342.7l5.5 6.2M310.2 352.7l6 6.8M347.3 298.1l6.9 11.5M355.3 311.3l2.7 4.5M342.4 307.1l5.1 8.6M281.8 352.7l-1.1 9.5M317.8 442.4l0.5 4.3M318.4 448.2l1.1 10.2M305.4 403l0.7 9.8M283.6 422.8l0.5 8.8M285 448.5l0.8 13.7M277.4 437.6l0.7 8.3M273.4 449.2l0.7 9.6M265.8 446.1l0.6 8.5M307.8 404.7l-9.5 0.7M226 386.2l6 0.7l6 0.6M484.8 295.9l3.6 -2.5M490.9 301.3l9.4 -6.9M484.7 313.6l8.2 -5.5M487.1 314.7l8.5 -6.1M491.2 321.1l8.1 -6M497.2 296.3l3.4 4.6M495.4 302.5l7.3 11.2M485.7 297.4l7.7 11.7M477.5 296.5l5.6 8.1M484.4 306.6l5.4 7.7M535.9 316.8l3.6 -1.9M519 337.5l2.6 -1.6M522.9 335.1l4.4 -2.6M539.4 325.1l8.7 -5.3"/>
<path stroke="#f0bc28" stroke-width="0.9" d="M228.4 438.5l6.1 -1.5M219.2 477.3l2 -0.5M529 346l-0.5 6.6l-0.4 6.6M532.5 363l1.3 0.2"/>
<path stroke="#f0b32a" stroke-width="0.95" d="M355.3 209.4l8.7 14.6"/>
<path stroke="#f0b32a" stroke-width="1.0" d="M362.4 210.8l2.3 -1.3M361.8 223.3l11.8 -6.4M353.4 231.6l22.3 -13.8M366.1 226.4l14.5 -7.9M356.6 235.5l13.8 -8.4M362.8 231.2l4.6 8.3M340.5 205.4l11.9 21.1M338.6 246.3l9.3 16.5M447.7 278.9l2.9 5.4M445.7 282.5l7.5 13.5M448.6 297.9l7 13.5M437.6 280.8l7.7 14.3M450 303.9l5.5 10.3M429.5 279.7l3.3 5.7M444.9 309.5l5.3 9.2M428.4 284.6l5.6 10.2M435 296.6l5.5 10.1M433.2 305l5.7 11.1M420.8 288.5l7.9 14.3M419.9 307.6l4.7 9.5M455.9 308.3l-6 3.3M455.4 306.8l-11.5 5.6M442.2 308.1l-9.4 5.3M424.1 310.6l-11.1 6.1M457.3 291.3l-11 5.7M425.7 301.7l-10.7 5.4M451.9 281l-11.7 6.4M439 286.2l-10.2 5.3M450.9 275.6l-12.8 7M372.3 313.6l-9.9 5.4M364.3 315l-4 2.3M323.4 354l5.6 -5M317.4 360.7l10.6 -9.2M321 356.7l5.1 5.9M319.8 336.8l6.8 -6.3M305.6 368.9l10 -9M297.8 382.7l4.9 -4.2M297 367l7.9 8.7M359.1 309.4l-8.6 5M348.7 315.4l-8.4 4.9M214 382.1l14.7 2.9M229.7 385.2l14.3 2.8M285.3 395.2l-2.1 9.9M307.1 424.7l0.9 11.2M309.2 450.8l0.7 9.2M272.4 436.1l0.8 11.1M281.2 446.4l-6.6 0.5M238 387.5l6 0.6l6 0.6M477.2 308.3l5.5 -4.1M490.7 318.9l3.4 -2.5M482.8 292.9l2 3.1M481 294.1l2.3 3.5M484.2 298.9l4 6.1M480.8 298.9l5.3 7.6M474.5 298.6l2.7 3.8M540.4 334.3l1.9 -1.1M559.9 295.4l0.9 5.6"/>
<path stroke="#f0b32a" stroke-width="0.9" d="M529 346"/>
<path stroke="#f0aa2c" stroke-width="0.95" d="M325.7 197.2l10.3 -6.3M337.9 189.8l7.9 -4.8M341 185.2l12.8 21.7"/>
<path stroke="#f0aa2c" stroke-width="1.0" d="M357.5 217.2l11.9 -7M359.1 235.3l21.8 -12M361 237.3l13.5 -7.5M366 237.8l21.4 -11.7M359.8 257.3l20.5 -11.7M356 261.5l19.1 -11.3M359 208.5l8 13.2M444.6 273.1l2.2 4.1M450.2 287.4l5.7 10.6M446 296.5l3.1 5.6M434 280.5l4.9 9.7M421.2 268.5l6.9 12M429.1 282.1l3 5.3M422.5 273.8l5.3 9.7M412.5 265.2l3.8 7.3M417.4 274.5l6.5 12.6M429.7 304.5l6.3 11.4M425.2 303.2l8.4 15.5M418.5 296.4l8 14.1M417.8 298.9l6.4 11.8M425 312.1l4 7.4M388.7 251.9l7.4 15.2M415.9 308.8l6.5 11.7M380.1 261.9l1.9 3.9M368.7 265l3.9 7.4M367.6 265.3l3.1 5.9M375.1 306.2l5.5 10.9M368.2 306.2l5.9 10.2M364.9 303.2l7.9 14M451 314.3l-8.3 4.1M450.8 306.1l-8.4 4.3M454.9 300.8l-11.4 6.5M429.8 313.8l-7.6 3.9M456 289.3l-5.9 3.3M452.8 284.5l-12.9 6.5M436.7 283.4l-11.9 6.4M372.9 313.9l-10.3 5.3M436.4 271.9l-14 8M415.6 266.5l-6.6 3.7M399.7 257.4l-7.9 4.5M371.1 273.9l-8.5 4.8M444.6 318.7l4.7 9.2M443.1 324.2l4.4 8.2M338.2 350.8l11.2 -10.2M298 388.8l4 4.6M301.1 349l3.9 -3.4M300.9 358.3l7.7 -6.5M315.4 346.1l7.2 -6M324.2 338.7l9.7 -8.1M300.8 344.4l3.9 4.4M312 357.4l4 4.7M310 364.3l2 2.2M342.9 323.3l-5.9 3.5M335.7 327.6l-3.4 2M245.8 388.4l11.4 2.3M276.3 394.4l7.9 1.6M310.1 462.2l0.4 4.8M250 388.7l6 0.7l6 0.6M485.9 291.3l4.5 6.8M491.7 300.1l5.8 8.6M493.7 317.4l3.1 4.4M528.4 331.8l9.3 -5.6"/>
<path stroke="#f0aa2c" stroke-width="0.9" d="M538.6 359l1.2 0.2"/>
<path stroke="#f0a12d" stroke-width="0.95" d="M365.3 226.3l4.3 7.2M348.9 232.6l1.7 2.5"/>
<path stroke="#f0a12d" stroke-width="1.0" d="M361 218.6l12.7 -7.7M371.5 226.4l11 -6.7M354.3 247.3l9.6 -5.4M358.9 253.4l22.5 -12.3M365.3 258.8l22.7 -14.1M365.1 260.5l14.9 -8.8M382.5 250.2l8.7 -5.2M369.2 264.8l18.8 -10.7M440.1 272.5l4.4 7.8M439.9 281.2l4 7.6M430.3 270.8l2.8 4.9M433.9 277l5.5 9.7M440.3 288.2l4.5 7.8M441.8 298l7.7 13.8M440.1 301.3l4.1 7M412.7 274l7.3 13.1M418.2 287.4l3.3 6.2M429.4 308.6l5.4 10.1M413.3 281l5.4 10.1M402.2 264.5l7.9 13.9M425.4 305.2l2.5 4.5M397.2 260.7l5.6 10.4M415.7 301.4l7.3 13.2M415.2 305.9l7.2 14.6M386.4 254.5l4.9 9.9M414.6 311.5l4.6 9.4M411.7 312.1l4.3 8.5M382.8 258.7l5.2 10.1M398.1 310.7l4.4 7.7M372.4 264l5.7 11.4M391.4 308l4.2 7.9M389.9 308.6l4.7 9M371.3 275.2l6.4 12.4M373 295.5l7.4 14.2M368.5 296.2l5.7 11.4M365.5 301.4l1.9 3.3M445.4 305.8l-14.2 7.3M460.7 296.5l-8.3 4.1M422 313.3l-12.3 6.3M411.9 317.3l-3.7 2M414.5 313.4l-4.5 2.3M440.8 297.7l-7.6 4.2M441 294.9l-4.7 2.6M418.8 307.4l-15.3 8.6M430.7 295.6l-12.9 6.4M444.5 277.7l-9 4.6M384.7 308l-10.9 5.5M435.4 279l-7.2 4M387 303.9l-8.6 4.9M386.5 300.3l-11.4 6.5M377.6 300.6l-5.5 3.1M428.6 270.3l-12.7 6.7M418.9 267.9l-14.4 7.1M410.3 264.2l-9.4 4.7M376 281.5l-9.1 4.6M351.2 339.1l9.6 -8.7M290.2 367.3l9.8 -8.3M323.3 340.8l5.8 -5.1M259 391l15.8 3.2M282.2 390.4l-2.3 10.6M315.3 418.4l1.1 10.6M316.7 431.4l1 9.4M284.2 433.2l0.2 4.3M262 390l6 0.5l6 0.4M495.4 296.4l7.9 -5.9M505.1 289.2l10 -7.5M498.7 310.5l3.6 5.5M487.2 308l5.5 7.8M474 298.9"/>
<path stroke="#f0982f" stroke-width="0.95" d="M339.2 235.6l8.7 -5.7M371.4 227.6l15.1 -8.8"/>
<path stroke="#f0982f" stroke-width="1.0" d="M371.4 215l6.2 -3.4M367.1 217.8l10.5 -6.2M343.6 235.2l20.8 -12M377.2 226.6l9.7 -5.5M373.6 239.8l11.8 -6.9M383.4 240l5.8 -3.2M383.1 247.2l7.6 -4.4M374 264l10.7 -6.7M385.8 261.1l10.9 -6M379.2 211.9l6.1 11M374.2 233.6l8.4 13.9M368.1 245.9l10.5 17.3M462.1 298.6l0.9 1.6M441.1 277.6l4.8 8.8M432.6 271.4l4.2 7.8M433.2 289.2l6 10.5M419.3 268l2.2 3.9M424.7 288.7l8 15.4M404.5 261.6l4 7.5M422.5 295.6l6.3 11.8M411.3 280.5l6.6 11.7M428.9 311.3l2.9 5.2M411 283.4l6.8 11.9M391.1 257.2l7.5 13.6M399.5 272.4l6.6 11.8M405.2 285.5l4.7 9.6M385.9 255.1l3.9 6.9M390.9 263.9l3.7 6.7M409.5 297.4l6 10.7M406.2 296.9l7.4 12.9M389.1 268.5l7.5 14.5M412.2 315.8l2.3 4.5M379.8 262.1l2.6 4.5M396.5 294.2l5.6 11M386.2 289.9l6.9 12M393.7 303l3.2 5.5M385.8 290.7l5 10M391.5 302.1l3.1 6.1M386.5 304.6l6.7 13M364.5 268.6l7 12.1M385.4 304.7l4.2 7.3M370.2 278.8l7.5 14.6M365.4 281.3l7 13.2M375 309.4l3.8 7.6M365.1 295.8l2.5 5.1M364.1 305.5l7.6 13.5M366.4 312.8l3.7 7M362.7 309.5l2.2 4M408.6 316.5l-4.3 2.2M404.6 317.7l-1.4 0.8M435.2 298.1l-4.4 2.5M440.5 294.3l-12.7 6.4M416.3 302.7l-8.7 4.3M391.5 315l-4.6 2.3M438 288.6l-7.5 4.2M398.4 310.4l-8.5 4.7M426.8 292.6l-11.8 6.2M408.6 302.2l-10.7 5.6M386.2 313.9l-4.8 2.6M403.5 301.4l-8.4 4.6M434.3 282.9l-10.1 5.1M407.8 296.3l-7.3 3.7M398 299.5l-5 2.7M391.4 303.1l-6.9 3.8M383.5 307.4l-10.5 5.8M424.7 282.7l-11.7 6.6M419.4 283.7l-13.3 7.5M377.2 307.7l-12.1 6.9M373 307.9l-11.9 6.8M430 270.7l-3.1 1.8M385.2 296.3l-6.2 3.5M412.2 277.3l-10.7 6M411.5 273.7l-10.4 5.5M379.4 290.9l-8.2 4.4M403.2 275.6l-10.6 5.2M407.8 270.8l-14.5 7.8M370.1 291.1l-5.4 3M374.6 287l-10.2 5.6M364.8 287.1l-1.5 0.8M402.9 266.1l-6.9 3.9M369.1 285.1l-5.7 3.2M406.2 262.4l-9.3 5M375.4 279l-12.5 6.9M401.9 260.1l-11.3 5.9M387.2 265.8l-13.7 7.3M379.7 264.6l-6 3.1M372.5 268.4l-4.6 2.4M415.6 325.3l2.1 3.7M418.4 330.1l5.8 10.1M291 357.8l8.3 -7.2M305.7 345l8.8 -7.6M316.1 335.9l6.1 -5.3M298.2 362.2l5.1 -4.3M274 390.9l6 0.5l6 0.4M474 298.9l0.5 7.3l4.5 4.8"/>
<path stroke="#f08e30" stroke-width="1.0" d="M382.5 217.4l3.8 -2M375.9 229.1l11.1 -6.3M365.2 241.2l11.7 -6.5M361.5 245l12.8 -7M382.2 236.7l6.1 -3.3M379 263.2l11.8 -7.1M393 254.8l2.5 -1.5M384 249.9l5.9 9.8M446.7 287.9l8.5 15.4M438.1 291.3l3.1 5.5M450 312.6l2.7 5M431.9 297.9l7.4 14M402.1 260.3l6.5 12M418.8 293.8l5.9 10.3M390.9 249.3l5.6 10.3M403.3 272.1l5.5 10.2M414.3 296l4.8 9.9M398.9 279.8l2.3 4.6M383.8 257.6l5.8 10.2M383.6 257.8l4.7 9.2M397.4 284.4l2.8 5.6M405.8 300.8l4.7 9.2M402.2 296.4l3.4 6.7M382.8 267.2l4.3 8.5M402.7 306.4l3.5 7M400.1 304.9l5.4 10.3M378.9 268l2.9 5.8M393.5 300.1l6.2 12.5M378.7 276.6l6.6 13.1M371.4 264.3l3.9 8M383.3 288.7l5.1 10.4M373.7 274.4l7.9 15M378.1 294.3l7.1 13.8M363.3 275.1l7.3 13M371.1 289.1l4 7M381.4 311.5l2.6 4.9M362.2 280.9l6.5 12.8M444.7 304.5l-5.2 2.6M401.3 317.3l-1.3 0.7M403.7 312.7l-9.7 4.9M429 293.6l-11.8 6.4M414 299.3l-4.5 2.4M422.9 290.9l-7.9 4.3M412.9 296.3l-8.3 4.6M385.2 311.4l-10 5.5M398.3 301.1l-12.8 6.5M433.3 271.5l-13.8 7.6M404.9 287.1l-13 7.2M413.9 278l-5.1 2.6M401.6 284.4l-7.8 4.1M393 288.9l-14 7.3M377.8 296.8l-5.3 2.8M369.2 296.3l-3.6 2M376.9 288.5l-9.2 4.5M389.5 276.5l-12.4 6.5M378.4 279.9l-7.3 4.1M394.9 268.5l-7.3 4M394 266.5l-15.3 8.3M376.3 273.5l-12.2 6.4M400.6 258.5l-12 6.5M383.5 266.7l-10.8 6.2M398.7 256.2l-10.8 6.2M372.7 263.9l-2.6 1.5M330.3 357.9l6.8 -6.2M318.3 359.6l9 10.4M309.8 350.9l4.3 -3.7M286 391.8l6 0.5M477.9 309.4l8.9 -6.6M488 301.9l5.8 -4.4"/>
<path stroke="#ef8030" stroke-width="1.0" d="M377.7 216.6l6.4 -3.9M382 222.6l4.7 -2.6M372 236.2l15.6 -8.4M376.8 241.3l11.8 -6.7M376.4 244.4l12.7 -7.8M383.6 242.5l6.2 -3.3M377.3 248.9l13 -7.7M356 267l14.7 -8.3M374.4 211.1l8.9 15.2M379.6 225.7l8.2 14M430.3 277.3l7 12.5M441.2 311.9l3.5 6.8M424.8 284.6l6.3 11.9M439.8 312.8l3 5.7M406.2 262.4l5.9 10.5M409.7 274.3l2.8 5.2M394.4 250.9l7.3 12.9M395.7 258.3l6.1 12.4M402.4 271.9l4.7 9.5M407.6 282.6l6.1 12.3M406.8 285.5l8.4 15.1M396.6 268l7.8 15.8M410.7 296.6l3.7 7.7M400 280.2l2.9 5.3M408.6 299.5l5.2 10.6M406.5 304.9l5 9.6M404.5 306.2l4.4 7.9M377.6 262.6l5.5 10.4M397.7 304.9l7.1 13.8M375.2 263.3l7.8 15.6M395.5 310l4 7.9M389.2 300.7l6.7 13.7M378.8 289.7l6.9 13.4M372.4 282.2l5.5 9.5M379 293.7l5.9 10.1M362.5 284.2l5.2 10.4M368.5 302.7l7.1 14.3M413.5 307.8l-8.6 4.3M416 300.7l-15.7 8.6M396.1 308.7l-8.6 4.6M393.7 306.8l-7.6 4.2M422.7 288.8l-13.8 6.9M412.9 291.3l-12.8 7M403 295l-14 7.8M421.4 280.5l-9.2 5.2M377.9 302l-8.8 4.9M425.7 269.6l-12.2 6.9M373.7 299l-9.2 5.2M401.4 281.1l-12.3 6.7M390.6 281.8l-12.4 6M365.9 293.9l-1.1 0.5M392 279.3l-9.1 4.9M408.3 268.8l-14.8 8M404.1 268.8l-13.4 7.1M394.6 270.8l-14.6 8.2M372.5 273.7l-9.9 5.3M374.6 270.1l-11.2 6.4M312.4 350.1l9.6 -8.3M330.6 334.5l4.9 -4.2M296.5 374.1l8.2 -7.8M306.4 364.7l11.3 -10.8M330.2 342l4.3 -4.1"/>
<path stroke="#ef7230" stroke-width="1.0" d="M375.4 237.5l12.5 -6.8M382.4 255.8l10.8 -6M390.1 252.9l3.7 -2.2M386.4 256.2l7.9 -4.8M391.7 259.1l5.6 -3.1M438.1 272.2l2.1 3.9M404 271.2l6.1 10.6M409.2 283l8.2 15.1M401.3 292l3.6 7.1M388.4 269.7l5.5 10.6M394.4 281.3l6.8 13.1M383.5 268.6l6 10.7M390.1 280.4l6.4 11.4M397.3 293.3l6.7 11.9M384 274.6l3.2 6M394.4 294.2l5.3 9.9M383.8 280.6l4.6 9.2M371.6 273.1l7.6 14.7M380.2 289.7l6.2 12M385 309.9l4.1 7.5M375.6 297l3.6 6.4M369.7 295.6l4.5 9M411 290.5l-6 3.3M390.9 294.8l-11.8 6.5M407.5 281.3l-4.5 2.4M413.2 274.6l-10.8 5.9M400 279.8l-4.9 2.7M375.9 283.6l-12.1 6.4M386 273.3l-8.8 4.8M388.7 267l-10.5 5.5M320.9 366.3l8.7 -7.8M336.1 336.4l6.5 -6.3"/>
<path stroke="#ef6530" stroke-width="1.0" d="M430.1 290.7l3.6 7M430.5 304.5l6.5 12.7M398.3 282.9l6.8 12.1M387.6 281.4l6.2 11.6M390.8 291.4l6.5 12.7M388.9 290.8l3.7 7.5M376.3 274.4l6.1 12.5M367.3 277.3l3.9 7.2M379.8 300.3l4 7.4M437.9 307.9l-14.2 7.1M400.5 292.3l-12.1 6.9M391.7 292.5l-5.3 3.1M400.3 284l-8.5 4.8M382.7 293.9l-8.3 4.7M393.8 283.2l-13.6 7.2M392 277.6l-9.1 4.9"/>
<path stroke="#ee5730" stroke-width="1.0" d="M418.1 267.6l3.9 7.5M421.1 277.6l2.9 5.4M410 264l7.1 14.1M388.2 277.9l7.2 14.2M387.5 285l2.7 5.3M364 271.3l2.6 4.7M453 284.8l-9.3 4.9M430.6 296.7l-8.3 4.4M403.1 286l-9.7 5.6M390.1 289.8l-6.4 3.6"/>
<path stroke="#ee4c32" stroke-width="1.0" d="M373 257.4l18.4 -10.5M415.1 266.3l5 9.4M422.1 287.9l7.6 14.9M377.8 308.2l5.1 9M442.3 290.5l-9.9 5.3M441.2 283.7l-11.5 5.6M428.4 290l-11.2 5.5M415.2 296.5l-8.1 4M367.6 320.1l-2.4 1.2"/>
<path stroke="#ed4035" stroke-width="1.0" d="M422.7 276.4l7 13.5M400.7 297.1l3.8 7.1M371.6 285.2l7.6 14M371.7 297.2l5.7 10.2M364 290.9l4.5 9.1M369.3 301.7l7.3 14.6M409.8 307.8l-13.4 7.1"/>
<path stroke="#ed3537" stroke-width="1.0" d="M377.8 215.5l5.2 -3M363.8 237.1l17 -9.5M374.8 258.5l17.7 -9.7M386.5 270.3l2.7 5.2M405.3 305.7l6.3 11.8M388.6 309.7l-12.3 6.1"/>
<path stroke="#ec2a3a" stroke-width="1.0" d="M390.3 277.5l5.5 10.3M396.6 289.3l3.4 6.4M406.2 301l-7.6 3.7M397.7 305.2l-7.9 3.9"/>
<path stroke="#1fcae9" stroke-width="1.1" d="M734.5 69.5l4.9 0M726.1 70.5l12.7 0M725.4 73.6l10.8 -0.1M724.5 77.8l9 0M723.7 81.4l11.9 -0.1M723.2 83.8l9.7 0M734.4 84.8l0.9 0M722.7 86.1l5.6 0M722.4 87.2l4.3 0M721.4 91.7l11.8 0.1M734.1 91.8l0.9 0M719.7 100.5l11.7 0.1M719.1 105.3l10.8 0M731.1 105.3l3.7 0M719 106.2l7.3 0M718.9 107.2l15.9 0M718.8 108.3l9.6 0M733 109.2l1.8 0M718 114.4l14.6 0.1M717.8 115.9l6.7 -0.1M727.6 118.1l7.1 0.1M717.2 119.3l5.3 0M723.3 119.3l9.9 -0.1M714.9 124.3l17.1 0.1M711.1 132.8l14.7 -0.1M726.5 132.7l5.7 0M718.8 134.1l8.2 -0.1M727.4 134l3.8 0M728.4 135.3l1.7 0M710.8 136l8.7 0.1M720.8 136.1l8.6 0M710.4 142.5l10.8 0M710.2 147l9.7 0.1M710 149.4l7.6 0M710.7 150.3l6 0M713 151.2l2.8 0"/>
<path stroke="#1fcae9" stroke-width="1.15" d="M754.2 75.2l6.6 0M735 82.9l25.2 0.1M735 84.7l25 0.2M750.3 96.1l6.3 0M734.9 101.8l19.2 -0.1M734.8 107.6l16 0M734.6 125.2l5.8 0M734.5 127.7l4.6 0"/>
<path stroke="#1ecfe4" stroke-width="1.1" d="M480.9 476.4l6.6 1M485.3 478.2l5.8 0.8M460 478.7l18.9 2.4M480 481.2l10.7 1.3M459.5 479.6l18.8 2.8M484.4 486.2l4.6 0.7M726.5 68.3l11.3 0M738.3 68.3l1.9 0M725.8 71.5l11.9 0M733.7 76.5l2.2 0M723.9 80.3l4.4 0M729.6 80.3l6 0.1M723.4 82.8l12.1 0M733.5 83.8l1.9 0M729.6 86.1l5.7 0M727.7 87.2l7.5 0.1M721.9 89.5l13.1 -0.1M721.6 90.9l13.4 0.1M721.1 92.9l13.9 0M720.6 95.4l14.3 0M720.3 96.6l14.6 0.2M720 98.2l10.1 -0.1M732.6 100.6l2.3 0.1M719.4 103l15.5 0M719.3 104l13.5 0M733.4 104l1.5 0M729 108.4l5.8 0M718.1 113.3l11.3 -0.1M730.4 113.2l4.4 0M716.6 120.7l15.8 0.1M715.9 122.1l18.1 0.1M715.4 123.3l6 0M727.3 125.4l7.3 0M713.4 127.6l17.5 0.1M720.6 129.9l13.9 -0.1M711.8 131.2l11.9 0.1M710.9 135.3l8.2 0M710.7 137.4l15.4 0.2M722.5 138.9l4.5 0M722 140.2l4 0M710.5 141.5l14.4 -0.1M722.3 142.5l1.7 0M710.4 143.7l12.4 0.1M710.3 145l11.4 0M710.1 148.2l8.7 0"/>
<path stroke="#1ecfe4" stroke-width="1.15" d="M735 67.9l15.4 0M735 72.3l15.9 0M752.6 72.3l8.4 0M735 75.1l17.8 0.1M753.5 91.2l4.6 0M735 93.3l22.4 0.1M734.9 96.1l14.8 0M734.9 98.2l21 0.1M734.9 103.7l18.3 -0.1M734.8 109.7l13.9 0M734.7 118.8l8.9 0M734.6 121.6l7.6 -0.1M732.7 134.9l2.6 0M731.3 138.5l1.3 0"/>
<path stroke="#1dd2de" stroke-width="1.1" d="M478 473.4l9.4 1.5M490.1 476.1l1.3 0.2M462.3 473.8l17.8 2.5M488.6 477.5l2.6 0.4M461.7 475.1l9.1 1.2M471.3 476.4l12.9 1.7M478.9 479.7l11.9 1.5M466.1 483l18.6 2.1M485.6 485.2l4.7 0.5M469.9 484.3l13.8 1.8M726.2 69.6l7.8 -0.1M725.1 75l10.9 0M724.8 76.4l8.4 0.1M724.2 79l11.5 0M722.9 84.9l10.9 -0.1M722.2 88.1l11.6 0M730.6 98.1l4.3 0M727 106.2l7.8 0M718.6 109.3l13.6 -0.1M725.8 115.8l8.9 0M717.6 118.1l8.6 0M722.2 123.3l12.4 0M713.7 126.9l11.8 -0.1M726.6 126.8l6.5 0M731.7 127.7l2.8 0.1M725.4 128.9l9.1 0.1M712.4 130l7 -0.1M724.2 131.3l9.2 0M710.9 134.1l6.6 0M710.7 138.9l11.1 0M710.6 140.1l10.1 0"/>
<path stroke="#1dd2de" stroke-width="1.15" d="M735 71.2l23 0M735 77l23.2 0.1M735 78.2l24.1 0M735 79.6l25.4 0.1M735 91.2l17.6 0M734.8 111.3l13.3 -0.1"/>
<path stroke="#1dd5d7" stroke-width="1.1" d="M488.4 475.1l3.1 0.5M462.8 472.8l15.2 1.8M478.5 474.7l10.9 1.3M460.6 477.4l17.5 2.2M479.1 482.5l11.4 1.7M477.1 486.6l9.8 1.3"/>
<path stroke="#1cdac9" stroke-width="1.1" d="M732.8 67.4l8 -0.1M718.3 111.9l9.8 0.1M729.3 112l5.5 0M717.7 117l11.9 -0.1M730.6 116.9l4.1 0"/>
<path stroke="#1cdac9" stroke-width="1.15" d="M735 86.5l13.9 0M750.7 86.5l8.9 0"/>
<path stroke="#1ddbba" stroke-width="1.1" d="M726.7 67.4l5.3 0M720.9 94l5.4 0M710.2 145.9l10.7 0.1"/>
<path stroke="#1ddbba" stroke-width="1.15" d="M734.7 117.3l9.7 0M734 131.3l3.3 0.1"/>
<path stroke="#1ddcab" stroke-width="1.1" d="M726.9 94l8.1 0M719.5 101.8l14.9 0M718.5 110.7l8.7 0M728.5 110.7l6.3 0.1"/>
<path stroke="#1edd9c" stroke-width="1.1" d="M480.6 478.8l10.4 1.4"/>
<path stroke="#1ede8d" stroke-width="1.1" d="M461.2 476.2l4.7 0.6M459.1 480.4l15.6 2.6M475.2 483.1l7.9 1.3M725.7 72.3l4.9 0M732 72.3l5.7 0M719.9 99.1l15 0"/>
<path stroke="#2edf79" stroke-width="1.1" d="M483.7 484.5l6.6 1.1"/>
<path stroke="#9be326" stroke-width="1.1" d="M214 281.6"/>
<path stroke="#aee323" stroke-width="1.1" d="M214 281.6l5.2 3.9l4.6 3.8"/>
<path stroke="#bfe420" stroke-width="1.1" d="M223.8 289.3l5.4 3.7l5.1 -2.4"/>
<path stroke="#bfe420" stroke-width="1.2" d="M642 67l-5 3.3l-5 3.1l-5 3.4l-5.6 3.2l-4.9 2.5l-5.5 3l-5.6 2.5l-5.4 2.9l-4.7 2.8"/>
<path stroke="#c8e320" stroke-width="1.1" d="M234.3 290.6l5.3 -2.8l5.5 -3.3"/>
<path stroke="#c8e320" stroke-width="1.2" d="M595.3 93.7l-5 3.9l-4.6 3.8l-3.9 5.1l-3.3 4.6l-4.2 4.5l-4.4 3.9l-4.2 4.8l-3.5 4.5l-3.3 5.2l-0.4 5.6l0.1 5.9l0.6 6l-1.2 6.2l-1.1 5.9l-1.2 5.9"/>
<path stroke="#d0e21f" stroke-width="1.1" d="M245.1 284.5l5.4 1.3l4.4 4.3"/>
<path stroke="#d0e21f" stroke-width="1.2" d="M555.7 169.5l0.5 5.9l2.2 5.3l1.6 5.9l3.1 5.2l3.1 5.2l3.4 5l3.3 5l3.9 4.8l3.2 4.9"/>
<path stroke="#d9e11f" stroke-width="1.1" d="M254.9 290.1l2.3 5.5l4 4.5"/>
<path stroke="#e1e01e" stroke-width="1.1" d="M261.2 300.1l6 1.7l6 1.5"/>
<path stroke="#e6dc1f" stroke-width="1.1" d="M273.2 303.3l6 2l4.1 4.4"/>
<path stroke="#e8d521" stroke-width="1.3" d="M320 102"/>
<path stroke="#e8d521" stroke-width="1.1" d="M283.3 309.7l4.6 4.6l4.6 4.7M548.5 328.5l-4.5 4l-4.6 4l-4.6 3.9l-5.1 3.3"/>
<path stroke="#eacf23" stroke-width="1.3" d="M320 102l-1.1 6"/>
<path stroke="#eacf23" stroke-width="1.1" d="M292.5 319l5.6 2.4l5.5 2.7M553.4 305.6l0 6.1l0 6l-2 5.7l-2.9 5.1"/>
<path stroke="#ecc925" stroke-width="1.3" d="M318.9 108l-1 6.1"/>
<path stroke="#ecc925" stroke-width="1.1" d="M303.6 324.1l5.3 2.8M546.8 289.3l3.4 5l2.7 5.4l0.5 5.9"/>
<path stroke="#ecc925" stroke-width="1.2" d="M536.4 399.7l4.6 3.3"/>
<path stroke="#eec327" stroke-width="1.3" d="M317.9 114.1l-0.1 5.7"/>
<path stroke="#eec327" stroke-width="1.1" d="M308.9 326.9l5.8 2.4l6.1 2.4M534.6 268.8l4 4.6l1.8 5.7l2.9 5.2l3.5 5"/>
<path stroke="#eec327" stroke-width="1.2" d="M535 393.4l1.4 6.3"/>
<path stroke="#f0bc28" stroke-width="1.3" d="M317.8 119.8l4.2 4.4"/>
<path stroke="#f0bc28" stroke-width="1.1" d="M320.8 331.7l5.6 2l6.2 2.2M512.7 264.9l5.8 -1.7l5.7 0.1l5.8 1.9l4.6 3.6"/>
<path stroke="#f0bc28" stroke-width="1.2" d="M533.7 387.2l1.3 6.2"/>
<path stroke="#f0b32a" stroke-width="1.3" d="M322 124.2l4.3 4.4l4.2 4.5"/>
<path stroke="#f0b32a" stroke-width="1.1" d="M332.6 335.9l5.7 2.1M503.3 280l2 -5.7l3.2 -5l4.2 -4.4"/>
<path stroke="#f0b32a" stroke-width="1.2" d="M532.7 380.9l1 6.3"/>
<path stroke="#f0aa2c" stroke-width="1.3" d="M330.5 133.1l4.3 4.3"/>
<path stroke="#f0aa2c" stroke-width="1.4" d="M302.3 491.4l1.7 5.8l1.8 5.8"/>
<path stroke="#f0aa2c" stroke-width="1.1" d="M483.8 291.7l5.6 -2.2l5.6 -2.2l5.6 -2.3l2.7 -5"/>
<path stroke="#f0aa2c" stroke-width="1.2" d="M534.9 368.5l-0.6 6.2l-1.6 6.2"/>
<path stroke="#f0a12d" stroke-width="1.3" d="M334.8 137.4l4.3 4.4"/>
<path stroke="#f0a12d" stroke-width="1.4" d="M297 474.1l1.8 5.8l1.7 5.7l1.8 5.8"/>
<path stroke="#f0a12d" stroke-width="1.1" d="M474 298.9l4.9 -3.6l4.9 -3.6"/>
<path stroke="#f0a12d" stroke-width="1.2" d="M533.3 362.3l1.6 6.2"/>
<path stroke="#f0982f" stroke-width="1.3" d="M339.1 141.8l4 4.7"/>
<path stroke="#f0982f" stroke-width="1.4" d="M288.9 451.3l2 5.7l2.1 5.7l2.1 5.6l1.9 5.8"/>
<path stroke="#f0982f" stroke-width="1.2" d="M531.7 356.2l1.6 6.1"/>
<path stroke="#f08e30" stroke-width="1.3" d="M343.1 146.5l3.6 4.9"/>
<path stroke="#f08e30" stroke-width="1.4" d="M279.9 429l1.5 5.9l3.3 5l2.1 5.7l2.1 5.7"/>
<path stroke="#f08e30" stroke-width="1.2" d="M531.4 349.9l0.3 6.3"/>
<path stroke="#ef8030" stroke-width="1.3" d="M346.7 151.4l2.1 5.7"/>
<path stroke="#ef8030" stroke-width="1.2" d="M437.6 272.1l6.5 1l6.5 0.9M532 343.5l-0.6 6.4"/>
<path stroke="#ef8030" stroke-width="1.4" d="M278.5 411.8l-1.6 5.5l1.5 5.9l1.5 5.8"/>
<path stroke="#ef7230" stroke-width="1.3" d="M348.8 157.1l1.6 5.9"/>
<path stroke="#ef7230" stroke-width="1.2" d="M424.8 269.4l6.4 1.6l6.4 1.1"/>
<path stroke="#ef6530" stroke-width="1.3" d="M350.4 163l2.3 5.7"/>
<path stroke="#ef6530" stroke-width="1.2" d="M418.5 267.8l6.3 1.6"/>
<path stroke="#ee5730" stroke-width="1.3" d="M352.7 168.7l2.5 5.6"/>
<path stroke="#ee5730" stroke-width="1.2" d="M406.5 262.4l6 2.7l6 2.7"/>
<path stroke="#ee4c32" stroke-width="1.6" d="M355.2 174.3l3.4 5.1l3.4 5.1"/>
<path stroke="#ee4c32" stroke-width="1.2" d="M394.8 256.6l5.8 3.1l5.9 2.7"/>
<path stroke="#ee4c32" stroke-width="1.5" d="M526.4 340.6l5.6 2.9"/>
<path stroke="#ed4035" stroke-width="1.6" d="M362 184.5l3.4 5.1l3.4 5.1l3.4 5.1l3.4 5.1l2.6 5.4l1.1 6l1.1 6.1l1.1 6l1.2 6M285.6 401.6l-3.6 5.1l-3.5 5.1"/>
<path stroke="#ed4035" stroke-width="1.2" d="M389 253.5l5.8 3.1"/>
<path stroke="#ed4035" stroke-width="1.3" d="M443.9 317.8l5.2 -2.8l4.9 -3.5M407 304.3l2.6 6.3M434.1 311.9l5.9 2.1M450.4 313.6l5.9 -2.6M393.2 316l5.8 1.8M456.6 300.6l4.4 4.4"/>
<path stroke="#ed4035" stroke-width="1.5" d="M503.9 329l5.5 3.1l5.6 2.9l5.7 2.8l5.7 2.8"/>
<path stroke="#ed3537" stroke-width="1.6" d="M382.7 234.4l1.2 6l2.2 5.8l2.2 5.6l1 6l0.5 6.1l-0.9 6l-1.6 5.9l-1.6 5.9l-1.7 5.9M340.9 334.9l-4.2 4.6l-4.2 4.5l-4.2 4.6l-4.2 4.6l-4.1 4.6l-4.2 4.6l-4.2 4.6l-3.8 4.9l-3.8 4.9l-3.7 4.9l-3.8 4.9l-3.8 4.9l-3.6 5l-3.5 5.1"/>
<path stroke="#ed3537" stroke-width="1.3" d="M373.9 272.3l5.9 -4.8l6 -4.7l5.9 -4.8M382.8 285.7l5.1 3.4l5 3.3l5.1 3.4l4 4.5l3.7 4.8l3.8 4.8l4.7 3.4l5.7 2l5.8 1.9l6 0.6l6.1 0l6.1 0M415 267l-3 6.2l-3 6.1l-3 6.2l-3 6.1l1.5 6.3l2.5 6.4M391.7 286.5l5.1 3.6l5 3.7l5.1 3.6l5.1 3.6l5 3.7l5.4 3l5.9 2.1l5.8 2.1M397 291.5l4.6 4.6l4.6 4.6l4.6 4.5l4.6 4.6l4.7 4.4l6.2 2l6.1 2.1l6.1 0.5l5.9 -2.6l6 -2.6M360 300l6.7 0.6l6.6 0.5l6.7 0.6M375.7 310.6l5.8 1.8l5.9 1.8l5.8 1.8M432 272l4 4.8l4 4.9l4.1 4.8l4 4.8l4 4.8l4.5 4.5"/>
<path stroke="#ed3537" stroke-width="1.5" d="M490.2 316.2l4.1 4.9l4.1 4.7l5.5 3.2"/>
<path stroke="#ec2a3a" stroke-width="1.6" d="M384 287.6l-1.7 5.9l-1.6 5.9l-2.3 5.7l-2.7 5.5M375.7 310.6l-5.7 2.3l-5.8 2.3l-5.7 2.3l-4.6 4.2l-4.4 4.3l-4.4 4.4l-4.2 4.5"/>
<path stroke="#ec2a3a" stroke-width="1.5" d="M454 311.2l6.2 -0.1l6.3 0l6.3 0l6.2 -0.1M479 311l6 1.9l5.2 3.3"/>
</svg></div>
<!-- status -->
<div id="status"></div>
<div class="sep" style="left:557px"></div><div class="sep" style="left:637px"></div><div class="sep" style="left:745px"></div>
<svg class="abs" style="left:750px;top:577px" width="11" height="11" viewBox="0 0 11 11"><g fill="#c0c0c0"><rect x="7" y="7" width="1.6" height="1.6"/><rect x="4.4" y="7" width="1.6" height="1.6"/><rect x="1.8" y="7" width="1.6" height="1.6"/><rect x="7" y="4.4" width="1.6" height="1.6"/><rect x="4.4" y="4.4" width="1.6" height="1.6"/><rect x="7" y="1.8" width="1.6" height="1.6"/></g></svg>
<span class="t " style="left:113.0px;top:6.2px;font-size:12.9px;color:#1a1a1a;transform:scaleX(0.9783)">depthmapXnet 0.30 - Tasos Varoudis - [area_conurbada_fpolis_v.4.5_Segment_Map2:Map View]</span>
<span class="t mn" style="left:27.5px;top:27.0px;font-size:10.6px;color:#909090;transform:scaleX(0.9076)">File</span>
<span class="t mn" style="left:57.0px;top:27.0px;font-size:10.6px;color:#909090;transform:scaleX(0.9307)">Edit</span>
<span class="t mn" style="left:88.0px;top:27.0px;font-size:10.6px;color:#909090;transform:scaleX(0.9704)">Map</span>
<span class="t mn" style="left:122.0px;top:27.0px;font-size:10.6px;color:#909090;transform:scaleX(1.0056)">Attributes</span>
<span class="t mn" style="left:181.0px;top:27.0px;font-size:10.6px;color:#909090;transform:scaleX(0.9299)">Tools</span>
<span class="t mn" style="left:218.0px;top:27.0px;font-size:10.6px;color:#909090;transform:scaleX(0.9218)">View</span>
<span class="t mn" style="left:253.0px;top:27.0px;font-size:10.6px;color:#909090;transform:scaleX(1.0083)">Window</span>
<span class="t mn" style="left:305.0px;top:27.0px;font-size:10.6px;color:#909090;transform:scaleX(0.9634)">Help</span>
<span class="t " style="left:8.0px;top:69.0px;font-size:10.3px;color:#000;transform:scaleX(0.9324)">Index</span>
<span class="t " style="left:46.7px;top:87.9px;font-size:10.3px;color:#000;transform:scaleX(0.9276)">Shape Graphs</span>
<span class="t " style="left:61.6px;top:102.7px;font-size:10.3px;color:#000;transform:scaleX(0.9827)">Segment Map</span>
<span class="t " style="left:78.8px;top:117.5px;font-size:10.3px;color:#a3a3a3;transform:scaleX(0.9906)">Everything</span>
<span class="t " style="left:8.0px;top:295.0px;font-size:10.3px;color:#000;transform:scaleX(0.9340)">AttributesList</span>
<span class="t " style="left:124.6px;top:553.3px;font-size:10.3px;color:#9a9a9a;transform:scaleX(0.8402)">Add</span>
<span class="t " style="left:169.0px;top:553.3px;font-size:10.3px;color:#9a9a9a;transform:scaleX(0.8815)">Remove</span>
<span class="t " style="left:523.0px;top:572.5px;font-size:10.3px;color:#000;transform:scaleX(0.8938)">45443</span>
<span class="t " style="left:561.7px;top:572.5px;font-size:10.3px;color:#000;transform:scaleX(0.8907)">35981.8,  47816</span>
<span class="t " style="left:641.0px;top:572.5px;font-size:10.3px;color:#000;transform:scaleX(0.9191)">746896,  6.93888e+06</span>
</body></html>
